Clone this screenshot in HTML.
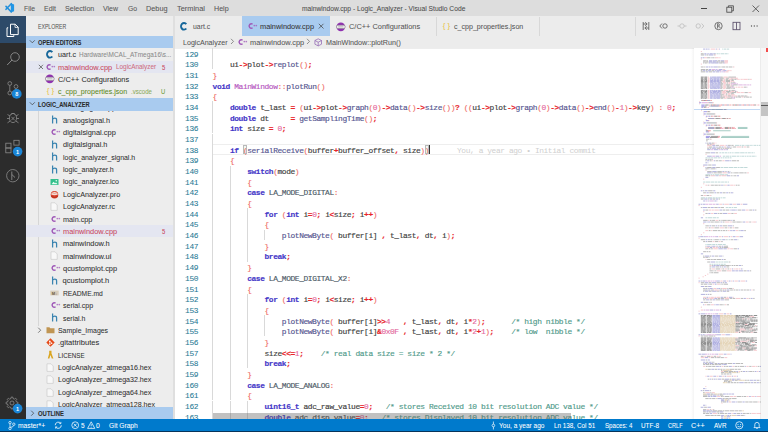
<!DOCTYPE html>
<html><head><meta charset="utf-8"><title>VS Code</title><style>
html,body{margin:0;padding:0;width:768px;height:432px;overflow:hidden;background:#fff}
body{position:relative;font-family:"Liberation Sans",sans-serif}
.t{position:absolute;white-space:pre;line-height:1;transform-origin:0 50%;-webkit-text-stroke-width:0.05px}
.r{position:absolute}
svg.r{overflow:visible}
.ln{position:absolute;left:174.5px;width:23.6px;text-align:right;font-family:"Liberation Mono",monospace;font-size:7.9px;letter-spacing:-0.4082px;line-height:10.68px;height:10.68px;color:#237893;white-space:pre;padding-top:1.5px;-webkit-text-stroke-width:0.04px}
.cl{position:absolute;left:212.6px;font-family:"Liberation Mono",monospace;font-size:7.9px;letter-spacing:-0.4082px;line-height:10.68px;height:10.68px;white-space:pre;color:#3d3d3d;padding-top:1.5px;-webkit-text-stroke-width:0.15px}
</style></head><body>
<div class="r" style="left:0.00px;top:0.00px;width:768.00px;height:16.00px;background:#dddddd;"></div>
<div class="r" style="left:0.00px;top:16.00px;width:26.00px;height:403.30px;background:#2c2c2c;"></div>
<div class="r" style="left:0.00px;top:16.00px;width:26.00px;height:27.20px;background:#2d4a69;"></div>
<div class="r" style="left:26.00px;top:16.00px;width:148.50px;height:403.30px;background:#ededed;"></div>
<div class="r" style="left:174.50px;top:16.00px;width:593.50px;height:20.00px;background:#ececec;"></div>
<div class="r" style="left:174.50px;top:36.00px;width:593.50px;height:12.00px;background:#ececec;"></div>
<div class="r" style="left:174.50px;top:48.00px;width:593.50px;height:371.30px;background:#ffffff;"></div>
<svg class="r" style="left:0.00px;top:0.00px" width="20.00" height="16.00" viewBox="0 0 20 16"><path d="M10.8 3.2 L14.1 4.6 V11.2 L10.8 12.5 Z" fill="#2196e6"/><path d="M11.3 3.7 L6.0 9.3 M11.3 12 L6.0 6.4" stroke="#2490dc" stroke-width="1.6" stroke-linecap="round"/></svg>
<div class="t" style="left:23.60px;top:5.05px;font-size:7.50px;color:#555555;transform:scaleX(0.910);">File</div>
<div class="t" style="left:43.80px;top:5.05px;font-size:7.50px;color:#555555;transform:scaleX(0.929);">Edit</div>
<div class="t" style="left:64.90px;top:5.05px;font-size:7.50px;color:#555555;transform:scaleX(0.950);">Selection</div>
<div class="t" style="left:103.30px;top:5.05px;font-size:7.50px;color:#555555;transform:scaleX(0.929);">View</div>
<div class="t" style="left:127.80px;top:5.05px;font-size:7.50px;color:#555555;transform:scaleX(0.910);">Go</div>
<div class="t" style="left:146.00px;top:5.05px;font-size:7.50px;color:#555555;transform:scaleX(0.973);">Debug</div>
<div class="t" style="left:176.60px;top:5.05px;font-size:7.50px;color:#555555;transform:scaleX(0.988);">Terminal</div>
<div class="t" style="left:213.75px;top:5.05px;font-size:7.50px;color:#555555;transform:scaleX(0.950);">Help</div>
<div class="t" style="left:302.30px;top:5.22px;font-size:7.30px;color:#4a4a4a;transform:scaleX(0.916);">mainwindow.cpp - Logic_Analyzer - Visual Studio Code</div>
<div class="r" style="left:700.50px;top:8.00px;width:6.50px;height:0.60px;background:#444;"></div>
<svg class="r" style="left:726.00px;top:4.50px" width="8.50" height="8.00" viewBox="0 0 8.5 8"><rect x="0.8" y="2.2" width="5" height="5" fill="none" stroke="#444" stroke-width="0.8"/><path d="M2.4 2.2 V0.8 H7.4 V5.8 H5.8" fill="none" stroke="#444" stroke-width="0.8"/></svg>
<svg class="r" style="left:752.00px;top:4.50px" width="7.50" height="7.50" viewBox="0 0 7.5 7.5"><path d="M0.5 0.5 L7 7 M7 0.5 L0.5 7" stroke="#444" stroke-width="0.8"/></svg>
<svg class="r" style="left:5.00px;top:21.50px" width="16.00" height="16.00" viewBox="0 0 16 16"><path d="M3.2 5.8 H2 V14.5 H8.8 V13.2" fill="none" stroke="#fff" stroke-width="1"/><path d="M5.5 2.2 H10.2 L13.2 5.2 V12.6 H5.5 Z" fill="none" stroke="#fff" stroke-width="1"/><path d="M10 2.2 V5.4 H13.2" fill="none" stroke="#fff" stroke-width="0.8"/></svg>
<svg class="r" style="left:5.00px;top:50.00px" width="16.00" height="16.00" viewBox="0 0 16 16"><circle cx="10" cy="7" r="4.3" fill="none" stroke="#8b8b8b" stroke-width="0.9"/><path d="M7 10 L2.2 15" stroke="#8b8b8b" stroke-width="1"/></svg>
<svg class="r" style="left:5.00px;top:79.00px" width="18.00" height="18.00" viewBox="0 0 18 18"><circle cx="4.8" cy="4.5" r="1.9" fill="none" stroke="#8b8b8b" stroke-width="0.8"/><circle cx="11" cy="7.5" r="1.9" fill="none" stroke="#8b8b8b" stroke-width="0.8"/><circle cx="4.8" cy="14" r="1.9" fill="none" stroke="#8b8b8b" stroke-width="0.8"/><path d="M4.8 6.4 V12.1 M11 9.4 Q11 12 6.6 13.2" fill="none" stroke="#8b8b8b" stroke-width="0.8"/></svg>
<svg class="r" style="left:12.00px;top:88.50px" width="10.00" height="10.00" viewBox="0 0 10 10"><circle cx="4.7" cy="4.9" r="4.9" fill="#1a85d6"/><text x="4.7" y="7" font-size="5.5" text-anchor="middle" fill="#fff" font-family="Liberation Sans" font-weight="700">8</text></svg>
<svg class="r" style="left:5.00px;top:109.00px" width="16.00" height="16.00" viewBox="0 0 16 16"><ellipse cx="8" cy="9" rx="3.6" ry="4.6" fill="none" stroke="#8b8b8b" stroke-width="0.8"/><path d="M5.8 5.5 Q8 3 10.2 5.5 M2.5 5.5 L5 7 M13.5 5.5 L11 7 M2 9.5 H4.4 M11.6 9.5 H14 M2.5 13.8 L5 12.2 M13.5 13.8 L11 12.2 M6.4 7.8 L9.6 11.2 M9.6 7.8 L6.4 11.2" fill="none" stroke="#8b8b8b" stroke-width="0.8"/></svg>
<svg class="r" style="left:4.00px;top:138.00px" width="18.00" height="18.00" viewBox="0 0 18 18"><rect x="1.8" y="5.2" width="5.2" height="4.8" fill="none" stroke="#8b8b8b" stroke-width="0.8"/><rect x="1.8" y="10" width="5.2" height="4.8" fill="none" stroke="#8b8b8b" stroke-width="0.8"/><rect x="9.9" y="2.3" width="5.2" height="4.8" fill="none" stroke="#8b8b8b" stroke-width="0.8"/></svg>
<svg class="r" style="left:12.50px;top:147.20px" width="10.00" height="10.00" viewBox="0 0 10 10"><circle cx="4.6" cy="4.6" r="4.8" fill="#1a85d6"/><text x="4.6" y="6.6" font-size="5.5" text-anchor="middle" fill="#fff" font-family="Liberation Sans" font-weight="700">1</text></svg>
<svg class="r" style="left:5.00px;top:168.00px" width="16.00" height="16.00" viewBox="0 0 16 16"><circle cx="7.8" cy="7.7" r="6.2" fill="none" stroke="#8b8b8b" stroke-width="0.8"/><path d="M6.8 3.5 V12 M6.8 6.5 L10 9.5" fill="none" stroke="#8b8b8b" stroke-width="0.9"/></svg>
<svg class="r" style="left:4.00px;top:395.00px" width="16.00" height="16.00" viewBox="0 0 16 16"><path d="M12.49 7.00 L13.95 7.22 L13.95 8.78 L12.49 9.00 L11.88 10.46 L12.76 11.66 L11.66 12.76 L10.46 11.88 L9.00 12.49 L8.78 13.95 L7.22 13.95 L7.00 12.49 L5.54 11.88 L4.34 12.76 L3.24 11.66 L4.12 10.46 L3.51 9.00 L2.05 8.78 L2.05 7.22 L3.51 7.00 L4.12 5.54 L3.24 4.34 L4.34 3.24 L5.54 4.12 L7.00 3.51 L7.22 2.05 L8.78 2.05 L9.00 3.51 L10.46 4.12 L11.66 3.24 L12.76 4.34 L11.88 5.54 Z" fill="none" stroke="#8b8b8b" stroke-width="0.8"/><circle cx="8" cy="8" r="2" fill="none" stroke="#8b8b8b" stroke-width="0.8"/></svg>
<svg class="r" style="left:12.50px;top:404.00px" width="10.00" height="10.00" viewBox="0 0 10 10"><circle cx="4.6" cy="4.6" r="4.8" fill="#1a85d6"/><text x="4.6" y="6.6" font-size="5.5" text-anchor="middle" fill="#fff" font-family="Liberation Sans" font-weight="700">1</text></svg>
<div class="t" style="left:37.60px;top:23.90px;font-size:6.50px;color:#555555;transform:scaleX(0.797);">EXPLORER</div>
<div class="r" style="left:26.00px;top:36.00px;width:148.50px;height:12.20px;background:#a9cbef;"></div>
<svg class="r" style="left:29.00px;top:39.20px" width="7.00" height="6.00" viewBox="0 0 7 6"><path d="M0.8 1.3 L3.3 3.8 L5.8 1.3" fill="none" stroke="#444" stroke-width="0.75"/></svg>
<div class="t" style="left:37.70px;top:39.98px;font-size:6.40px;color:#2a2a2a;font-weight:700;transform:scaleX(0.897);">OPEN EDITORS</div>
<div class="r" style="left:26.00px;top:98.20px;width:148.50px;height:12.20px;background:#a9cbef;"></div>
<svg class="r" style="left:29.00px;top:101.40px" width="7.00" height="6.00" viewBox="0 0 7 6"><path d="M0.8 1.3 L3.3 3.8 L5.8 1.3" fill="none" stroke="#444" stroke-width="0.75"/></svg>
<div class="t" style="left:37.70px;top:102.18px;font-size:6.40px;color:#2a2a2a;font-weight:700;transform:scaleX(0.892);">LOGIC_ANALYZER</div>
<div class="r" style="left:26.00px;top:60.67px;width:148.50px;height:12.37px;background:#e4e6f1;"></div>
<svg class="r" style="left:46.20px;top:50.28px" width="9.00" height="9.00" viewBox="0 0 9 9"><path d="M6.3 2.2 A3 3.3 0 1 0 6.3 6.5" fill="none" stroke="#17679a" stroke-width="1.9"/></svg>
<div class="t" style="left:57.80px;top:51.23px;font-size:7.50px;color:#303030;transform:scaleX(0.960);">uart.c</div>
<div class="t" style="left:79.10px;top:52.00px;font-size:6.60px;color:#8a8a8a;transform:scaleX(0.974);">Hardware\MCAL_ATmega16\s...</div>
<svg class="r" style="left:45.90px;top:62.85px" width="10.00" height="8.00" viewBox="0 0 10 8"><path d="M4.6 2.1 A2.3 2.2 0 1 0 4.6 5.9" fill="none" stroke="#a05ab8" stroke-width="1.45"/><path d="M5.5 3.6 H7.1 M6.3 2.8 V4.4 M7.5 3.6 H9.1 M8.3 2.8 V4.4" stroke="#a05ab8" stroke-width="0.6"/></svg>
<div class="t" style="left:57.80px;top:63.60px;font-size:7.50px;color:#c9465e;transform:scaleX(0.985);">mainwindow.cpp</div>
<div class="t" style="left:115.80px;top:64.37px;font-size:6.60px;color:#cf6d80;transform:scaleX(0.967);">LogicAnalyzer</div>
<div class="t" style="left:161.70px;top:63.60px;font-size:7.50px;color:#c9465e;transform:scaleX(0.791);">5</div>
<svg class="r" style="left:38.30px;top:63.85px" width="6.00" height="6.00" viewBox="0 0 6 6"><path d="M0.8 0.8 L5 5 M5 0.8 L0.8 5" stroke="#444" stroke-width="0.7"/></svg>
<svg class="r" style="left:45.40px;top:74.42px" width="10.00" height="10.00" viewBox="0 0 10 10"><circle cx="4.8" cy="4.8" r="4.4" fill="#9032b0"/><rect x="0.5" y="3.2" width="8.6" height="3.2" rx="1.2" fill="#f0f0f0" stroke="#777" stroke-width="0.5"/><rect x="2.2" y="4.3" width="5.2" height="1" fill="#bdbdbd"/></svg>
<div class="t" style="left:57.80px;top:75.97px;font-size:7.50px;color:#303030;transform:scaleX(0.986);">C/C++ Configurations</div>
<svg class="r" style="left:45.80px;top:86.09px" width="9.00" height="9.00" viewBox="0 0 9 9"><text x="4.5" y="7" font-size="8" text-anchor="middle" fill="#e8c34a" font-family="Liberation Sans">{ }</text></svg>
<div class="t" style="left:57.80px;top:88.34px;font-size:7.50px;color:#5b8a1d;transform:scaleX(0.943);">c_cpp_properties.json</div>
<div class="t" style="left:131.00px;top:89.11px;font-size:6.60px;color:#8bab5c;transform:scaleX(0.923);">.vscode</div>
<div class="t" style="left:160.80px;top:88.34px;font-size:7.50px;color:#6a9a33;transform:scaleX(0.776);">U</div>
<div class="r" style="left:37.60px;top:110.40px;width:0.80px;height:215.60px;background:#d6d6d6;"></div>
<div class="t" style="left:62.60px;top:103.56px;font-size:7.50px;color:#303030;transform:scaleX(0.938);">analogsignal.cpp</div>
<div class="r" style="left:26.00px;top:98.30px;width:148.50px;height:12.40px;background:#a9cbef;"></div>
<svg class="r" style="left:29.00px;top:101.40px" width="7.00" height="6.00" viewBox="0 0 7 6"><path d="M0.8 1.3 L3.3 3.8 L5.8 1.3" fill="none" stroke="#444" stroke-width="0.75"/></svg>
<div class="t" style="left:37.70px;top:102.18px;font-size:6.40px;color:#2a2a2a;font-weight:700;transform:scaleX(0.892);">LOGIC_ANALYZER</div>
<div class="r" style="left:26.00px;top:225.03px;width:148.50px;height:12.37px;background:#e4e6f1;"></div>
<svg class="r" style="left:51.00px;top:115.29px" width="8.00" height="9.00" viewBox="0 0 8 9"><path d="M1.6 0.5 V8.5 M1.6 4.3 Q2.3 3 3.8 3 Q5.6 3 5.6 5 V8.5" fill="none" stroke="#3a84b0" stroke-width="1.25"/></svg>
<div class="t" style="left:62.60px;top:116.63px;font-size:7.50px;color:#303030;transform:scaleX(0.970);">analogsignal.h</div>
<svg class="r" style="left:50.60px;top:128.25px" width="10.00" height="8.00" viewBox="0 0 10 8"><path d="M4.6 2.1 A2.3 2.2 0 1 0 4.6 5.9" fill="none" stroke="#a05ab8" stroke-width="1.45"/><path d="M5.5 3.6 H7.1 M6.3 2.8 V4.4 M7.5 3.6 H9.1 M8.3 2.8 V4.4" stroke="#a05ab8" stroke-width="0.6"/></svg>
<div class="t" style="left:62.60px;top:129.00px;font-size:7.50px;color:#303030;transform:scaleX(0.989);">digitalsignal.cpp</div>
<svg class="r" style="left:51.00px;top:140.03px" width="8.00" height="9.00" viewBox="0 0 8 9"><path d="M1.6 0.5 V8.5 M1.6 4.3 Q2.3 3 3.8 3 Q5.6 3 5.6 5 V8.5" fill="none" stroke="#3a84b0" stroke-width="1.25"/></svg>
<div class="t" style="left:62.60px;top:141.37px;font-size:7.50px;color:#303030;transform:scaleX(0.977);">digitalsignal.h</div>
<svg class="r" style="left:51.00px;top:152.40px" width="8.00" height="9.00" viewBox="0 0 8 9"><path d="M1.6 0.5 V8.5 M1.6 4.3 Q2.3 3 3.8 3 Q5.6 3 5.6 5 V8.5" fill="none" stroke="#3a84b0" stroke-width="1.25"/></svg>
<div class="t" style="left:62.60px;top:153.74px;font-size:7.50px;color:#303030;transform:scaleX(0.926);">logic_analyzer_signal.h</div>
<svg class="r" style="left:51.00px;top:164.77px" width="8.00" height="9.00" viewBox="0 0 8 9"><path d="M1.6 0.5 V8.5 M1.6 4.3 Q2.3 3 3.8 3 Q5.6 3 5.6 5 V8.5" fill="none" stroke="#3a84b0" stroke-width="1.25"/></svg>
<div class="t" style="left:62.60px;top:166.11px;font-size:7.50px;color:#303030;transform:scaleX(0.943);">logic_analyzer.h</div>
<svg class="r" style="left:50.00px;top:177.74px" width="9.00" height="8.00" viewBox="0 0 9 8"><rect x="0.5" y="1" width="8" height="6" fill="#34bf8c"/><path d="M1.5 6.2 L3.6 3.8 L5 5.2 L6 4.4 L7.6 6.2 Z" fill="#e9fff3"/><circle cx="6.3" cy="2.8" r="0.8" fill="#e9fff3"/></svg>
<div class="t" style="left:62.60px;top:178.48px;font-size:7.50px;color:#303030;transform:scaleX(0.946);">logic_analyzer.ico</div>
<svg class="r" style="left:50.00px;top:189.61px" width="9.00" height="9.00" viewBox="0 0 9 9"><circle cx="4.5" cy="4.7" r="3.8" fill="#d8402a"/><path d="M0.9 4.3 A3.8 3.8 0 0 1 8.1 4.3 Q4.5 6.2 0.9 4.3 Z" fill="#f4ddd6"/><path d="M1.5 2.6 Q4.5 4.2 7.5 2.6" fill="none" stroke="#e06a50" stroke-width="0.6"/><path d="M1.2 6.3 Q4.5 8.6 7.8 6.3" fill="none" stroke="#a82818" stroke-width="0.7"/></svg>
<div class="t" style="left:62.60px;top:190.85px;font-size:7.50px;color:#303030;transform:scaleX(0.959);">LogicAnalyzer.pro</div>
<svg class="r" style="left:50.00px;top:201.97px" width="8.00" height="9.00" viewBox="0 0 8 9"><path d="M1 0.8 H5 L7.2 3 V8.4 H1 Z" fill="#f8f8f8" stroke="#c4c4c4" stroke-width="0.6"/></svg>
<div class="t" style="left:62.60px;top:203.22px;font-size:7.50px;color:#303030;transform:scaleX(0.947);">LogicAnalyzer.rc</div>
<svg class="r" style="left:50.60px;top:214.84px" width="10.00" height="8.00" viewBox="0 0 10 8"><path d="M4.6 2.1 A2.3 2.2 0 1 0 4.6 5.9" fill="none" stroke="#a05ab8" stroke-width="1.45"/><path d="M5.5 3.6 H7.1 M6.3 2.8 V4.4 M7.5 3.6 H9.1 M8.3 2.8 V4.4" stroke="#a05ab8" stroke-width="0.6"/></svg>
<div class="t" style="left:62.60px;top:215.59px;font-size:7.50px;color:#303030;transform:scaleX(0.966);">main.cpp</div>
<svg class="r" style="left:50.60px;top:227.22px" width="10.00" height="8.00" viewBox="0 0 10 8"><path d="M4.6 2.1 A2.3 2.2 0 1 0 4.6 5.9" fill="none" stroke="#a05ab8" stroke-width="1.45"/><path d="M5.5 3.6 H7.1 M6.3 2.8 V4.4 M7.5 3.6 H9.1 M8.3 2.8 V4.4" stroke="#a05ab8" stroke-width="0.6"/></svg>
<div class="t" style="left:62.60px;top:227.96px;font-size:7.50px;color:#c9465e;transform:scaleX(0.983);">mainwindow.cpp</div>
<div class="t" style="left:161.50px;top:227.96px;font-size:7.50px;color:#c9465e;transform:scaleX(0.791);">5</div>
<svg class="r" style="left:51.00px;top:238.98px" width="8.00" height="9.00" viewBox="0 0 8 9"><path d="M1.6 0.5 V8.5 M1.6 4.3 Q2.3 3 3.8 3 Q5.6 3 5.6 5 V8.5" fill="none" stroke="#3a84b0" stroke-width="1.25"/></svg>
<div class="t" style="left:62.60px;top:240.33px;font-size:7.50px;color:#303030;transform:scaleX(0.991);">mainwindow.h</div>
<svg class="r" style="left:50.00px;top:251.45px" width="8.00" height="9.00" viewBox="0 0 8 9"><path d="M1 0.8 H5 L7.2 3 V8.4 H1 Z" fill="#f8f8f8" stroke="#c4c4c4" stroke-width="0.6"/></svg>
<div class="t" style="left:62.60px;top:252.70px;font-size:7.50px;color:#303030;transform:scaleX(0.992);">mainwindow.ui</div>
<svg class="r" style="left:50.60px;top:264.32px" width="10.00" height="8.00" viewBox="0 0 10 8"><path d="M4.6 2.1 A2.3 2.2 0 1 0 4.6 5.9" fill="none" stroke="#a05ab8" stroke-width="1.45"/><path d="M5.5 3.6 H7.1 M6.3 2.8 V4.4 M7.5 3.6 H9.1 M8.3 2.8 V4.4" stroke="#a05ab8" stroke-width="0.6"/></svg>
<div class="t" style="left:62.60px;top:265.07px;font-size:7.50px;color:#303030;transform:scaleX(0.991);">qcustomplot.cpp</div>
<svg class="r" style="left:51.00px;top:276.09px" width="8.00" height="9.00" viewBox="0 0 8 9"><path d="M1.6 0.5 V8.5 M1.6 4.3 Q2.3 3 3.8 3 Q5.6 3 5.6 5 V8.5" fill="none" stroke="#3a84b0" stroke-width="1.25"/></svg>
<div class="t" style="left:62.60px;top:277.44px;font-size:7.50px;color:#303030;">qcustomplot.h</div>
<svg class="r" style="left:50.00px;top:290.06px" width="9.00" height="6.00" viewBox="0 0 9 6"><rect x="0.3" y="0.6" width="8.4" height="4.8" fill="#d8cdbb"/><text x="4.5" y="4.6" font-size="4" text-anchor="middle" fill="#6b5b3b" font-family="Liberation Sans" font-weight="700">M↓</text></svg>
<div class="t" style="left:62.60px;top:289.81px;font-size:7.50px;color:#303030;transform:scaleX(0.893);">README.md</div>
<svg class="r" style="left:50.60px;top:301.44px" width="10.00" height="8.00" viewBox="0 0 10 8"><path d="M4.6 2.1 A2.3 2.2 0 1 0 4.6 5.9" fill="none" stroke="#a05ab8" stroke-width="1.45"/><path d="M5.5 3.6 H7.1 M6.3 2.8 V4.4 M7.5 3.6 H9.1 M8.3 2.8 V4.4" stroke="#a05ab8" stroke-width="0.6"/></svg>
<div class="t" style="left:62.60px;top:302.18px;font-size:7.50px;color:#303030;transform:scaleX(0.938);">serial.cpp</div>
<svg class="r" style="left:51.00px;top:313.20px" width="8.00" height="9.00" viewBox="0 0 8 9"><path d="M1.6 0.5 V8.5 M1.6 4.3 Q2.3 3 3.8 3 Q5.6 3 5.6 5 V8.5" fill="none" stroke="#3a84b0" stroke-width="1.25"/></svg>
<div class="t" style="left:62.60px;top:314.55px;font-size:7.50px;color:#303030;transform:scaleX(0.926);">serial.h</div>
<svg class="r" style="left:36.50px;top:326.68px" width="6.00" height="7.00" viewBox="0 0 6 7"><path d="M1.2 0.7 L3.7 3.2 L1.2 5.7" fill="none" stroke="#555" stroke-width="0.75"/></svg>
<svg class="r" style="left:45.80px;top:326.18px" width="9.00" height="8.00" viewBox="0 0 9 8"><path d="M0.5 1.3 H3.4 L4.3 2.3 H8.5 V7.2 H0.5 Z" fill="#c09553"/></svg>
<div class="t" style="left:57.90px;top:326.92px;font-size:7.50px;color:#303030;transform:scaleX(0.924);">Sample_Images</div>
<svg class="r" style="left:45.80px;top:338.05px" width="9.00" height="9.00" viewBox="0 0 9 9"><path d="M4.5 0.3 L8.7 4.5 L4.5 8.7 L0.3 4.5 Z" fill="#e64a19"/><circle cx="3.8" cy="3.4" r="0.8" fill="#fff"/><circle cx="5.6" cy="5.2" r="0.8" fill="#fff"/><circle cx="3.8" cy="6.2" r="0.8" fill="#fff"/><path d="M3.8 3.4 V6.2 M3.8 3.4 L5.6 5.2" stroke="#fff" stroke-width="0.6"/></svg>
<div class="t" style="left:57.90px;top:339.29px;font-size:7.50px;color:#303030;transform:scaleX(1.009);">.gitattributes</div>
<svg class="r" style="left:45.80px;top:350.41px" width="9.00" height="9.00" viewBox="0 0 9 9"><path d="M3.2 0.8 H5.5 V3.4 L7.4 8.4 H5.8 L4.4 5 L3.4 8.4 H1.8 L3.2 3.4 Z" fill="#d9a520"/></svg>
<div class="t" style="left:57.90px;top:351.66px;font-size:7.50px;color:#303030;transform:scaleX(0.829);">LICENSE</div>
<svg class="r" style="left:45.80px;top:362.78px" width="8.00" height="9.00" viewBox="0 0 8 9"><path d="M1 0.8 H5 L7.2 3 V8.4 H1 Z" fill="#f8f8f8" stroke="#c4c4c4" stroke-width="0.6"/></svg>
<div class="t" style="left:57.90px;top:364.03px;font-size:7.50px;color:#303030;transform:scaleX(0.944);">LogicAnalyzer_atmega16.hex</div>
<svg class="r" style="left:45.80px;top:375.15px" width="8.00" height="9.00" viewBox="0 0 8 9"><path d="M1 0.8 H5 L7.2 3 V8.4 H1 Z" fill="#f8f8f8" stroke="#c4c4c4" stroke-width="0.6"/></svg>
<div class="t" style="left:57.90px;top:376.40px;font-size:7.50px;color:#303030;transform:scaleX(0.944);">LogicAnalyzer_atmega32.hex</div>
<svg class="r" style="left:45.80px;top:387.52px" width="8.00" height="9.00" viewBox="0 0 8 9"><path d="M1 0.8 H5 L7.2 3 V8.4 H1 Z" fill="#f8f8f8" stroke="#c4c4c4" stroke-width="0.6"/></svg>
<div class="t" style="left:57.90px;top:388.77px;font-size:7.50px;color:#303030;transform:scaleX(0.944);">LogicAnalyzer_atmega64.hex</div>
<svg class="r" style="left:45.80px;top:399.89px" width="8.00" height="9.00" viewBox="0 0 8 9"><path d="M1 0.8 H5 L7.2 3 V8.4 H1 Z" fill="#f8f8f8" stroke="#c4c4c4" stroke-width="0.6"/></svg>
<div class="t" style="left:57.90px;top:401.14px;font-size:7.50px;color:#303030;transform:scaleX(0.942);">LogicAnalyzer_atmega128.hex</div>
<div class="r" style="left:26.00px;top:407.30px;width:148.50px;height:12.00px;background:#a9cbef;"></div>
<svg class="r" style="left:29.50px;top:409.90px" width="6.00" height="7.00" viewBox="0 0 6 7"><path d="M1.2 0.7 L3.7 3.2 L1.2 5.7" fill="none" stroke="#444" stroke-width="0.75"/></svg>
<div class="t" style="left:37.50px;top:411.28px;font-size:6.40px;color:#2a2a2a;font-weight:700;transform:scaleX(0.926);">OUTLINE</div>
<div class="r" style="left:172.90px;top:16.00px;width:2.10px;height:403.30px;background:#dfdfdf;"></div>
<div class="r" style="left:241.50px;top:16.00px;width:88.70px;height:19.80px;background:#a9cbef;"></div>
<svg class="r" style="left:180.00px;top:22.10px" width="9.00" height="9.00" viewBox="0 0 9 9"><path d="M6.3 2.2 A3 3.3 0 1 0 6.3 6.5" fill="none" stroke="#17679a" stroke-width="1.9"/></svg>
<div class="t" style="left:192.60px;top:23.05px;font-size:7.50px;color:#555555;transform:scaleX(0.917);">uart.c</div>
<svg class="r" style="left:247.80px;top:22.30px" width="10.00" height="8.00" viewBox="0 0 10 8"><path d="M4.6 2.1 A2.3 2.2 0 1 0 4.6 5.9" fill="none" stroke="#a05ab8" stroke-width="1.45"/><path d="M5.5 3.6 H7.1 M6.3 2.8 V4.4 M7.5 3.6 H9.1 M8.3 2.8 V4.4" stroke="#a05ab8" stroke-width="0.6"/></svg>
<div class="t" style="left:260.00px;top:23.05px;font-size:7.50px;color:#333333;transform:scaleX(0.981);">mainwindow.cpp</div>
<svg class="r" style="left:318.00px;top:23.00px" width="6.50" height="6.50" viewBox="0 0 6.5 6.5"><path d="M0.8 0.8 L5.5 5.5 M5.5 0.8 L0.8 5.5" stroke="#444" stroke-width="0.75"/></svg>
<svg class="r" style="left:335.80px;top:21.50px" width="10.00" height="10.00" viewBox="0 0 10 10"><circle cx="4.8" cy="4.8" r="4.4" fill="#9032b0"/><rect x="0.5" y="3.2" width="8.6" height="3.2" rx="1.2" fill="#f0f0f0" stroke="#777" stroke-width="0.5"/><rect x="2.2" y="4.3" width="5.2" height="1" fill="#bdbdbd"/></svg>
<div class="t" style="left:348.60px;top:23.05px;font-size:7.50px;color:#555555;transform:scaleX(0.987);">C/C++ Configurations</div>
<div class="r" style="left:435.60px;top:17.00px;width:0.70px;height:18.80px;background:#d8d8d8;"></div>
<svg class="r" style="left:441.60px;top:20.80px" width="9.00" height="9.00" viewBox="0 0 9 9"><text x="4.5" y="7" font-size="8" text-anchor="middle" fill="#e8c34a" font-family="Liberation Sans">{ }</text></svg>
<div class="t" style="left:454.00px;top:23.05px;font-size:7.50px;color:#555555;transform:scaleX(0.944);">c_cpp_properties.json</div>
<div class="r" style="left:539.00px;top:17.00px;width:0.70px;height:18.80px;background:#d8d8d8;"></div>
<div class="r" style="left:635.10px;top:17.00px;width:0.70px;height:18.80px;background:#d8d8d8;"></div>
<svg class="r" style="left:641.00px;top:20.70px" width="10.00" height="10.00" viewBox="0 0 10 10"><path d="M2.2 1 V9 M7.8 1 V9 M2.2 3 H6 M4.2 1.2 L6.2 3 L4.2 4.8 M7.8 7 H4 M5.8 5.2 L3.8 7 L5.8 8.8" fill="none" stroke="#555555" stroke-width="0.8"/></svg>
<svg class="r" style="left:659.00px;top:20.70px" width="10.00" height="10.00" viewBox="0 0 10 10"><circle cx="6" cy="5" r="2.2" fill="none" stroke="#555555" stroke-width="0.8"/><path d="M3 2.5 L0.8 5 L3 7.5" fill="none" stroke="#555555" stroke-width="0.8"/></svg>
<svg class="r" style="left:677.30px;top:20.70px" width="10.00" height="10.00" viewBox="0 0 10 10"><circle cx="5" cy="5" r="2.2" fill="none" stroke="#bdbdbd" stroke-width="0.8"/><path d="M0.5 5 H2.8 M7.2 5 H9.5" stroke="#bdbdbd" stroke-width="0.8"/></svg>
<svg class="r" style="left:694.50px;top:20.70px" width="10.00" height="10.00" viewBox="0 0 10 10"><circle cx="3.2" cy="5" r="2.2" fill="none" stroke="#bdbdbd" stroke-width="0.8"/><path d="M6.6 2.5 L8.8 5 L6.6 7.5" fill="none" stroke="#bdbdbd" stroke-width="0.8"/></svg>
<svg class="r" style="left:713.50px;top:20.70px" width="10.00" height="10.00" viewBox="0 0 10 10"><circle cx="4.5" cy="5" r="3.7" fill="none" stroke="#555555" stroke-width="0.8"/><path d="M3.6 2.6 V7.4 M3.6 2.8 H4.8 Q6.2 3.6 4.8 5 H3.6 M4.6 5 L6.4 7" fill="none" stroke="#555555" stroke-width="0.8"/></svg>
<svg class="r" style="left:731.80px;top:20.70px" width="10.00" height="10.00" viewBox="0 0 10 10"><rect x="1" y="1.3" width="7" height="7.4" fill="none" stroke="#5a4f6a" stroke-width="0.85"/><path d="M4.5 1.3 V8.7" stroke="#5a4f6a" stroke-width="0.85"/></svg>
<svg class="r" style="left:749.50px;top:20.70px" width="10.00" height="10.00" viewBox="0 0 10 10"><circle cx="1.5" cy="5" r="0.65" fill="#555555"/><circle cx="4.3" cy="5" r="0.65" fill="#555555"/><circle cx="7.1" cy="5" r="0.65" fill="#555555"/></svg>
<div class="t" style="left:183.30px;top:38.95px;font-size:7.50px;color:#555555;transform:scaleX(0.945);">LogicAnalyzer</div>
<svg class="r" style="left:229.80px;top:37.70px" width="5.00" height="7.00" viewBox="0 0 5 7"><path d="M1 0.8 L3.5 3.4 L1 6" fill="none" stroke="#666" stroke-width="0.7"/></svg>
<svg class="r" style="left:238.10px;top:37.60px" width="10.00" height="8.00" viewBox="0 0 10 8"><path d="M4.6 2.1 A2.3 2.2 0 1 0 4.6 5.9" fill="none" stroke="#a05ab8" stroke-width="1.45"/><path d="M5.5 3.6 H7.1 M6.3 2.8 V4.4 M7.5 3.6 H9.1 M8.3 2.8 V4.4" stroke="#a05ab8" stroke-width="0.6"/></svg>
<div class="t" style="left:249.50px;top:38.95px;font-size:7.50px;color:#555555;transform:scaleX(0.983);">mainwindow.cpp</div>
<svg class="r" style="left:306.00px;top:37.70px" width="5.00" height="7.00" viewBox="0 0 5 7"><path d="M1 0.8 L3.5 3.4 L1 6" fill="none" stroke="#666" stroke-width="0.7"/></svg>
<svg class="r" style="left:313.50px;top:37.50px" width="8.50" height="8.50" viewBox="0 0 8.5 8.5"><path d="M4.2 0.8 L7.5 2.5 V6.2 L4.2 7.9 L0.9 6.2 V2.5 Z M0.9 2.5 L4.2 4.2 L7.5 2.5 M4.2 4.2 V7.9" fill="none" stroke="#8c5fb0" stroke-width="0.7"/></svg>
<div class="t" style="left:325.90px;top:38.95px;font-size:7.50px;color:#555555;transform:scaleX(0.960);">MainWindow::plotRun()</div>
<div class="r" style="left:174.50px;top:47.60px;width:519.20px;height:0.80px;background:rgba(0,0,0,0.07);"></div>
<div class="ln" style="top:48.06px">129</div>
<div class="ln" style="top:58.74px">130</div>
<div class="ln" style="top:69.42px">131</div>
<div class="ln" style="top:80.10px">132</div>
<div class="ln" style="top:90.78px">133</div>
<div class="ln" style="top:101.46px">134</div>
<div class="ln" style="top:112.14px">135</div>
<div class="ln" style="top:122.82px">136</div>
<div class="ln" style="top:133.50px">137</div>
<div class="ln" style="top:144.18px">138</div>
<div class="ln" style="top:154.86px">139</div>
<div class="ln" style="top:165.54px">140</div>
<div class="ln" style="top:176.22px">141</div>
<div class="ln" style="top:186.90px">142</div>
<div class="ln" style="top:197.58px">143</div>
<div class="ln" style="top:208.26px">144</div>
<div class="ln" style="top:218.94px">145</div>
<div class="ln" style="top:229.62px">146</div>
<div class="ln" style="top:240.30px">147</div>
<div class="ln" style="top:250.98px">148</div>
<div class="ln" style="top:261.66px">149</div>
<div class="ln" style="top:272.34px">150</div>
<div class="ln" style="top:283.02px">151</div>
<div class="ln" style="top:293.70px">152</div>
<div class="ln" style="top:304.38px">153</div>
<div class="ln" style="top:315.06px">154</div>
<div class="ln" style="top:325.74px">155</div>
<div class="ln" style="top:336.42px">156</div>
<div class="ln" style="top:347.10px">157</div>
<div class="ln" style="top:357.78px">158</div>
<div class="ln" style="top:368.46px">159</div>
<div class="ln" style="top:379.14px">160</div>
<div class="ln" style="top:389.82px">161</div>
<div class="ln" style="top:400.50px">162</div>
<div class="ln" style="top:411.18px">163</div>
<div class="r" style="left:212.50px;top:144.18px;width:481.20px;height:0.80px;background:#eeeeee;"></div>
<div class="r" style="left:212.50px;top:154.06px;width:481.20px;height:0.80px;background:#eeeeee;"></div>
<div class="r" style="left:212.40px;top:48.06px;width:0.80px;height:10.68px;background:#d9d9d9;"></div>
<div class="r" style="left:212.40px;top:58.74px;width:0.80px;height:10.68px;background:#d9d9d9;"></div>
<div class="r" style="left:212.40px;top:101.46px;width:0.80px;height:10.68px;background:#d9d9d9;"></div>
<div class="r" style="left:212.40px;top:112.14px;width:0.80px;height:10.68px;background:#d9d9d9;"></div>
<div class="r" style="left:212.40px;top:122.82px;width:0.80px;height:10.68px;background:#d9d9d9;"></div>
<div class="r" style="left:212.40px;top:133.50px;width:0.80px;height:10.68px;background:#d9d9d9;"></div>
<div class="r" style="left:212.40px;top:144.18px;width:0.80px;height:10.68px;background:#d9d9d9;"></div>
<div class="r" style="left:212.40px;top:154.86px;width:0.80px;height:10.68px;background:#d9d9d9;"></div>
<div class="r" style="left:212.40px;top:165.54px;width:0.80px;height:10.68px;background:#d9d9d9;"></div>
<div class="r" style="left:229.73px;top:165.54px;width:0.80px;height:10.68px;background:#d9d9d9;"></div>
<div class="r" style="left:212.40px;top:176.22px;width:0.80px;height:10.68px;background:#d9d9d9;"></div>
<div class="r" style="left:229.73px;top:176.22px;width:0.80px;height:10.68px;background:#d9d9d9;"></div>
<div class="r" style="left:212.40px;top:186.90px;width:0.80px;height:10.68px;background:#d9d9d9;"></div>
<div class="r" style="left:229.73px;top:186.90px;width:0.80px;height:10.68px;background:#d9d9d9;"></div>
<div class="r" style="left:212.40px;top:197.58px;width:0.80px;height:10.68px;background:#d9d9d9;"></div>
<div class="r" style="left:229.73px;top:197.58px;width:0.80px;height:10.68px;background:#d9d9d9;"></div>
<div class="r" style="left:212.40px;top:208.26px;width:0.80px;height:10.68px;background:#d9d9d9;"></div>
<div class="r" style="left:229.73px;top:208.26px;width:0.80px;height:10.68px;background:#d9d9d9;"></div>
<div class="r" style="left:247.05px;top:208.26px;width:0.80px;height:10.68px;background:#d9d9d9;"></div>
<div class="r" style="left:212.40px;top:218.94px;width:0.80px;height:10.68px;background:#d9d9d9;"></div>
<div class="r" style="left:229.73px;top:218.94px;width:0.80px;height:10.68px;background:#d9d9d9;"></div>
<div class="r" style="left:247.05px;top:218.94px;width:0.80px;height:10.68px;background:#d9d9d9;"></div>
<div class="r" style="left:212.40px;top:229.62px;width:0.80px;height:10.68px;background:#d9d9d9;"></div>
<div class="r" style="left:229.73px;top:229.62px;width:0.80px;height:10.68px;background:#d9d9d9;"></div>
<div class="r" style="left:247.05px;top:229.62px;width:0.80px;height:10.68px;background:#d9d9d9;"></div>
<div class="r" style="left:264.38px;top:229.62px;width:0.80px;height:10.68px;background:#d9d9d9;"></div>
<div class="r" style="left:212.40px;top:240.30px;width:0.80px;height:10.68px;background:#d9d9d9;"></div>
<div class="r" style="left:229.73px;top:240.30px;width:0.80px;height:10.68px;background:#d9d9d9;"></div>
<div class="r" style="left:247.05px;top:240.30px;width:0.80px;height:10.68px;background:#d9d9d9;"></div>
<div class="r" style="left:212.40px;top:250.98px;width:0.80px;height:10.68px;background:#d9d9d9;"></div>
<div class="r" style="left:229.73px;top:250.98px;width:0.80px;height:10.68px;background:#d9d9d9;"></div>
<div class="r" style="left:247.05px;top:250.98px;width:0.80px;height:10.68px;background:#d9d9d9;"></div>
<div class="r" style="left:212.40px;top:261.66px;width:0.80px;height:10.68px;background:#d9d9d9;"></div>
<div class="r" style="left:229.73px;top:261.66px;width:0.80px;height:10.68px;background:#d9d9d9;"></div>
<div class="r" style="left:212.40px;top:272.34px;width:0.80px;height:10.68px;background:#d9d9d9;"></div>
<div class="r" style="left:229.73px;top:272.34px;width:0.80px;height:10.68px;background:#d9d9d9;"></div>
<div class="r" style="left:212.40px;top:283.02px;width:0.80px;height:10.68px;background:#d9d9d9;"></div>
<div class="r" style="left:229.73px;top:283.02px;width:0.80px;height:10.68px;background:#d9d9d9;"></div>
<div class="r" style="left:212.40px;top:293.70px;width:0.80px;height:10.68px;background:#d9d9d9;"></div>
<div class="r" style="left:229.73px;top:293.70px;width:0.80px;height:10.68px;background:#d9d9d9;"></div>
<div class="r" style="left:247.05px;top:293.70px;width:0.80px;height:10.68px;background:#d9d9d9;"></div>
<div class="r" style="left:212.40px;top:304.38px;width:0.80px;height:10.68px;background:#d9d9d9;"></div>
<div class="r" style="left:229.73px;top:304.38px;width:0.80px;height:10.68px;background:#d9d9d9;"></div>
<div class="r" style="left:247.05px;top:304.38px;width:0.80px;height:10.68px;background:#d9d9d9;"></div>
<div class="r" style="left:212.40px;top:315.06px;width:0.80px;height:10.68px;background:#d9d9d9;"></div>
<div class="r" style="left:229.73px;top:315.06px;width:0.80px;height:10.68px;background:#d9d9d9;"></div>
<div class="r" style="left:247.05px;top:315.06px;width:0.80px;height:10.68px;background:#d9d9d9;"></div>
<div class="r" style="left:264.38px;top:315.06px;width:0.80px;height:10.68px;background:#d9d9d9;"></div>
<div class="r" style="left:212.40px;top:325.74px;width:0.80px;height:10.68px;background:#d9d9d9;"></div>
<div class="r" style="left:229.73px;top:325.74px;width:0.80px;height:10.68px;background:#d9d9d9;"></div>
<div class="r" style="left:247.05px;top:325.74px;width:0.80px;height:10.68px;background:#d9d9d9;"></div>
<div class="r" style="left:264.38px;top:325.74px;width:0.80px;height:10.68px;background:#d9d9d9;"></div>
<div class="r" style="left:212.40px;top:336.42px;width:0.80px;height:10.68px;background:#d9d9d9;"></div>
<div class="r" style="left:229.73px;top:336.42px;width:0.80px;height:10.68px;background:#d9d9d9;"></div>
<div class="r" style="left:247.05px;top:336.42px;width:0.80px;height:10.68px;background:#d9d9d9;"></div>
<div class="r" style="left:212.40px;top:347.10px;width:0.80px;height:10.68px;background:#d9d9d9;"></div>
<div class="r" style="left:229.73px;top:347.10px;width:0.80px;height:10.68px;background:#d9d9d9;"></div>
<div class="r" style="left:247.05px;top:347.10px;width:0.80px;height:10.68px;background:#d9d9d9;"></div>
<div class="r" style="left:212.40px;top:357.78px;width:0.80px;height:10.68px;background:#d9d9d9;"></div>
<div class="r" style="left:229.73px;top:357.78px;width:0.80px;height:10.68px;background:#d9d9d9;"></div>
<div class="r" style="left:247.05px;top:357.78px;width:0.80px;height:10.68px;background:#d9d9d9;"></div>
<div class="r" style="left:212.40px;top:368.46px;width:0.80px;height:10.68px;background:#d9d9d9;"></div>
<div class="r" style="left:229.73px;top:368.46px;width:0.80px;height:10.68px;background:#d9d9d9;"></div>
<div class="r" style="left:212.40px;top:379.14px;width:0.80px;height:10.68px;background:#d9d9d9;"></div>
<div class="r" style="left:229.73px;top:379.14px;width:0.80px;height:10.68px;background:#d9d9d9;"></div>
<div class="r" style="left:212.40px;top:389.82px;width:0.80px;height:10.68px;background:#d9d9d9;"></div>
<div class="r" style="left:229.73px;top:389.82px;width:0.80px;height:10.68px;background:#d9d9d9;"></div>
<div class="r" style="left:212.40px;top:400.50px;width:0.80px;height:10.68px;background:#d9d9d9;"></div>
<div class="r" style="left:229.73px;top:400.50px;width:0.80px;height:10.68px;background:#d9d9d9;"></div>
<div class="r" style="left:247.05px;top:400.50px;width:0.80px;height:10.68px;background:#d9d9d9;"></div>
<div class="r" style="left:212.40px;top:411.18px;width:0.80px;height:10.68px;background:#d9d9d9;"></div>
<div class="r" style="left:229.73px;top:411.18px;width:0.80px;height:10.68px;background:#d9d9d9;"></div>
<div class="r" style="left:247.05px;top:411.18px;width:0.80px;height:10.68px;background:#d9d9d9;"></div>
<div class="cl" style="top:48.06px"></div>
<div class="cl" style="top:58.74px">    <span style="color:#3d3d3d">ui</span><span style="color:#e8252b;font-weight:700">-&gt;</span><span style="color:#3d3d3d">plot</span><span style="color:#e8252b;font-weight:700">-&gt;</span><span style="color:#54548f">replot</span><span style="color:#ef6f6a">(</span><span style="color:#ef6f6a">)</span><span style="color:#e8252b;font-weight:700">;</span></div>
<div class="cl" style="top:69.42px"><span style="color:#ef6f6a">}</span></div>
<div class="cl" style="top:80.10px"><span style="color:#4538c8;font-weight:700">void</span> <span style="color:#b656c0">MainWindow</span><span style="color:#ef6f6a">:</span><span style="color:#ef6f6a">:</span><span style="color:#54548f">plotRun</span><span style="color:#ef6f6a">(</span><span style="color:#ef6f6a">)</span></div>
<div class="cl" style="top:90.78px"><span style="color:#ef6f6a">{</span></div>
<div class="cl" style="top:101.46px">    <span style="color:#4538c8;font-weight:700">double</span> <span style="color:#3d3d3d">t_last</span> <span style="color:#e8252b;font-weight:700">=</span> <span style="color:#ef6f6a">(</span><span style="color:#3d3d3d">ui</span><span style="color:#e8252b;font-weight:700">-&gt;</span><span style="color:#3d3d3d">plot</span><span style="color:#e8252b;font-weight:700">-&gt;</span><span style="color:#54548f">graph</span><span style="color:#ef6f6a">(</span><span style="color:#e46a9e">0</span><span style="color:#ef6f6a">)</span><span style="color:#e8252b;font-weight:700">-&gt;</span><span style="color:#54548f">data</span><span style="color:#ef6f6a">(</span><span style="color:#ef6f6a">)</span><span style="color:#e8252b;font-weight:700">-&gt;</span><span style="color:#54548f">size</span><span style="color:#ef6f6a">(</span><span style="color:#ef6f6a">)</span><span style="color:#ef6f6a">)</span><span style="color:#e8252b;font-weight:700">?</span> <span style="color:#ef6f6a">(</span><span style="color:#ef6f6a">(</span><span style="color:#3d3d3d">ui</span><span style="color:#e8252b;font-weight:700">-&gt;</span><span style="color:#3d3d3d">plot</span><span style="color:#e8252b;font-weight:700">-&gt;</span><span style="color:#54548f">graph</span><span style="color:#ef6f6a">(</span><span style="color:#e46a9e">0</span><span style="color:#ef6f6a">)</span><span style="color:#e8252b;font-weight:700">-&gt;</span><span style="color:#54548f">data</span><span style="color:#ef6f6a">(</span><span style="color:#ef6f6a">)</span><span style="color:#e8252b;font-weight:700">-&gt;</span><span style="color:#54548f">end</span><span style="color:#ef6f6a">(</span><span style="color:#ef6f6a">)</span><span style="color:#e8252b;font-weight:700">-</span><span style="color:#e46a9e">1</span><span style="color:#ef6f6a">)</span><span style="color:#e8252b;font-weight:700">-&gt;</span><span style="color:#3d3d3d">key</span><span style="color:#ef6f6a">)</span> <span style="color:#ef6f6a">:</span> <span style="color:#e46a9e">0</span><span style="color:#e8252b;font-weight:700">;</span></div>
<div class="cl" style="top:112.14px">    <span style="color:#4538c8;font-weight:700">double</span> <span style="color:#3d3d3d">dt</span>     <span style="color:#e8252b;font-weight:700">=</span> <span style="color:#54548f">getSamplingTime</span><span style="color:#ef6f6a">(</span><span style="color:#ef6f6a">)</span><span style="color:#e8252b;font-weight:700">;</span></div>
<div class="cl" style="top:122.82px">    <span style="color:#4538c8;font-weight:700">int</span> <span style="color:#3d3d3d">size</span> <span style="color:#e8252b;font-weight:700">=</span> <span style="color:#e46a9e">0</span><span style="color:#e8252b;font-weight:700">;</span></div>
<div class="cl" style="top:133.50px"></div>
<div class="cl" style="top:144.18px">    <span style="color:#4538c8;font-weight:700">if</span> <span style="color:#ef6f6a">(</span><span style="color:#54548f">serialReceive</span><span style="color:#ef6f6a">(</span><span style="color:#3d3d3d">buffer</span><span style="color:#e8252b;font-weight:700">+</span><span style="color:#3d3d3d">buffer_offset</span><span style="color:#e8252b;font-weight:700">,</span> <span style="color:#3d3d3d">size</span><span style="color:#ef6f6a">)</span><span style="color:#ef6f6a">)</span></div>
<div class="cl" style="top:154.86px">    <span style="color:#ef6f6a">{</span></div>
<div class="cl" style="top:165.54px">        <span style="color:#4538c8;font-weight:700">switch</span><span style="color:#ef6f6a">(</span><span style="color:#3d3d3d">mode</span><span style="color:#ef6f6a">)</span></div>
<div class="cl" style="top:176.22px">        <span style="color:#ef6f6a">{</span></div>
<div class="cl" style="top:186.90px">        <span style="color:#4538c8;font-weight:700">case</span> <span style="color:#4e5b68">LA_MODE_DIGITAL</span><span style="color:#ef6f6a">:</span></div>
<div class="cl" style="top:197.58px">        <span style="color:#ef6f6a">{</span></div>
<div class="cl" style="top:208.26px">            <span style="color:#4538c8;font-weight:700">for</span> <span style="color:#ef6f6a">(</span><span style="color:#4538c8;font-weight:700">int</span> <span style="color:#3d3d3d">i</span><span style="color:#e8252b;font-weight:700">=</span><span style="color:#e46a9e">0</span><span style="color:#e8252b;font-weight:700">;</span> <span style="color:#3d3d3d">i</span><span style="color:#e8252b;font-weight:700">&lt;</span><span style="color:#3d3d3d">size</span><span style="color:#e8252b;font-weight:700">;</span> <span style="color:#3d3d3d">i</span><span style="color:#e8252b;font-weight:700">++</span><span style="color:#ef6f6a">)</span></div>
<div class="cl" style="top:218.94px">            <span style="color:#ef6f6a">{</span></div>
<div class="cl" style="top:229.62px">                <span style="color:#54548f">plotNewByte</span><span style="color:#ef6f6a">(</span> <span style="color:#3d3d3d">buffer</span><span style="color:#3d3d3d">[</span><span style="color:#3d3d3d">i</span><span style="color:#3d3d3d">]</span> <span style="color:#e8252b;font-weight:700">,</span> <span style="color:#3d3d3d">t_last</span><span style="color:#e8252b;font-weight:700">,</span> <span style="color:#3d3d3d">dt</span><span style="color:#e8252b;font-weight:700">,</span> <span style="color:#3d3d3d">i</span><span style="color:#ef6f6a">)</span><span style="color:#e8252b;font-weight:700">;</span></div>
<div class="cl" style="top:240.30px">            <span style="color:#ef6f6a">}</span></div>
<div class="cl" style="top:250.98px">            <span style="color:#4538c8;font-weight:700">break</span><span style="color:#e8252b;font-weight:700">;</span></div>
<div class="cl" style="top:261.66px">        <span style="color:#ef6f6a">}</span></div>
<div class="cl" style="top:272.34px">        <span style="color:#4538c8;font-weight:700">case</span> <span style="color:#4e5b68">LA_MODE_DIGITAL_X2</span><span style="color:#ef6f6a">:</span></div>
<div class="cl" style="top:283.02px">        <span style="color:#ef6f6a">{</span></div>
<div class="cl" style="top:293.70px">            <span style="color:#4538c8;font-weight:700">for</span> <span style="color:#ef6f6a">(</span><span style="color:#4538c8;font-weight:700">int</span> <span style="color:#3d3d3d">i</span><span style="color:#e8252b;font-weight:700">=</span><span style="color:#e46a9e">0</span><span style="color:#e8252b;font-weight:700">;</span> <span style="color:#3d3d3d">i</span><span style="color:#e8252b;font-weight:700">&lt;</span><span style="color:#3d3d3d">size</span><span style="color:#e8252b;font-weight:700">;</span> <span style="color:#3d3d3d">i</span><span style="color:#e8252b;font-weight:700">++</span><span style="color:#ef6f6a">)</span></div>
<div class="cl" style="top:304.38px">            <span style="color:#ef6f6a">{</span></div>
<div class="cl" style="top:315.06px">                <span style="color:#54548f">plotNewByte</span><span style="color:#ef6f6a">(</span> <span style="color:#3d3d3d">buffer</span><span style="color:#3d3d3d">[</span><span style="color:#3d3d3d">i</span><span style="color:#3d3d3d">]</span><span style="color:#e8252b;font-weight:700">&gt;&gt;</span><span style="color:#e46a9e">4</span>   <span style="color:#e8252b;font-weight:700">,</span> <span style="color:#3d3d3d">t_last</span><span style="color:#e8252b;font-weight:700">,</span> <span style="color:#3d3d3d">dt</span><span style="color:#e8252b;font-weight:700">,</span> <span style="color:#3d3d3d">i</span><span style="color:#e8252b;font-weight:700">*</span><span style="color:#e46a9e">2</span><span style="color:#ef6f6a">)</span><span style="color:#e8252b;font-weight:700">;</span>      <span style="color:#4f9a8a">/* high nibble */</span></div>
<div class="cl" style="top:325.74px">                <span style="color:#54548f">plotNewByte</span><span style="color:#ef6f6a">(</span> <span style="color:#3d3d3d">buffer</span><span style="color:#3d3d3d">[</span><span style="color:#3d3d3d">i</span><span style="color:#3d3d3d">]</span><span style="color:#e8252b;font-weight:700">&amp;</span><span style="color:#e46a9e">0x0F</span> <span style="color:#e8252b;font-weight:700">,</span> <span style="color:#3d3d3d">t_last</span><span style="color:#e8252b;font-weight:700">,</span> <span style="color:#3d3d3d">dt</span><span style="color:#e8252b;font-weight:700">,</span> <span style="color:#3d3d3d">i</span><span style="color:#e8252b;font-weight:700">*</span><span style="color:#e46a9e">2</span><span style="color:#e8252b;font-weight:700">+</span><span style="color:#e46a9e">1</span><span style="color:#ef6f6a">)</span><span style="color:#e8252b;font-weight:700">;</span>    <span style="color:#4f9a8a">/* low  nibble */</span></div>
<div class="cl" style="top:336.42px">            <span style="color:#ef6f6a">}</span></div>
<div class="cl" style="top:347.10px">            <span style="color:#3d3d3d">size</span><span style="color:#e8252b;font-weight:700">&lt;&lt;=</span><span style="color:#e46a9e">1</span><span style="color:#e8252b;font-weight:700">;</span>    <span style="color:#4f9a8a">/* real data size = size * 2 */</span></div>
<div class="cl" style="top:357.78px">            <span style="color:#4538c8;font-weight:700">break</span><span style="color:#e8252b;font-weight:700">;</span></div>
<div class="cl" style="top:368.46px">        <span style="color:#ef6f6a">}</span></div>
<div class="cl" style="top:379.14px">        <span style="color:#4538c8;font-weight:700">case</span> <span style="color:#4e5b68">LA_MODE_ANALOG</span><span style="color:#ef6f6a">:</span></div>
<div class="cl" style="top:389.82px">        <span style="color:#ef6f6a">{</span></div>
<div class="cl" style="top:400.50px">            <span style="color:#4538c8;font-weight:700">uint16_t</span> <span style="color:#3d3d3d">adc_raw_value</span><span style="color:#e8252b;font-weight:700">=</span><span style="color:#e46a9e">0</span><span style="color:#e8252b;font-weight:700">;</span>   <span style="color:#4f9a8a">/* stores Received 10 bit resolution ADC value */</span></div>
<div class="cl" style="top:411.18px">            <span style="color:#4538c8;font-weight:700">double</span> <span style="color:#3d3d3d">adc_disp_value</span><span style="color:#e8252b;font-weight:700">=</span><span style="color:#e46a9e">0</span><span style="color:#e8252b;font-weight:700">;</span>   <span style="color:#4f9a8a">/* stores Displayed 10 bit resolution ADC value */</span></div>
<div class="r" style="left:242.72px;top:145.38px;width:4.73px;height:8.28px;border:0.6px solid #b9b9b9;box-sizing:border-box;background:rgba(0,100,0,0.05)"></div>
<div class="r" style="left:424.66px;top:145.38px;width:4.73px;height:8.28px;border:0.6px solid #b9b9b9;box-sizing:border-box;background:rgba(0,100,0,0.05)"></div>
<div class="r" style="left:428.99px;top:145.18px;width:1.10px;height:8.68px;background:#333333;"></div>
<div class="cl" style="top:144.18px;left:457px;color:#cfcfcf;-webkit-text-stroke-width:0">You, a year ago • Initial commit</div>
<div class="r" style="left:212.50px;top:413.00px;width:358.75px;height:6.30px;background:rgba(100,100,100,0.4);"></div>
<div class="r" style="left:691.00px;top:48.00px;width:2.90px;height:371.30px;background:linear-gradient(to right, rgba(0,0,0,0), rgba(0,0,0,0.045));"></div>
<div class="r" style="left:760.40px;top:48.00px;width:7.60px;height:371.30px;background:#f7f7f7;"></div>
<div class="r" style="left:760.40px;top:48.00px;width:0.50px;height:371.30px;background:#ececec;"></div>
<div class="r" style="left:761.00px;top:102.00px;width:7.00px;height:14.00px;background:rgba(100,100,100,0.35);"></div>
<div class="r" style="left:761.00px;top:104.60px;width:7.00px;height:1.00px;background:#5a5a5a;"></div>
<div class="r" style="left:765.60px;top:48.40px;width:2.40px;height:3.90px;background:#f24b4b;"></div>
<svg class="r" style="left:693.70px;top:48.00px" width="66.70" height="371.30" viewBox="0 0 66.7 371.3"><rect x="7.35" y="52.06" width="1.12" height="0.9" fill="#3d3d3d" opacity="0.55"/><rect x="8.47" y="52.06" width="1.12" height="0.9" fill="#e8252b" opacity="0.55"/><rect x="9.60" y="52.06" width="2.25" height="0.9" fill="#3d3d3d" opacity="0.55"/><rect x="11.85" y="52.06" width="1.12" height="0.9" fill="#e8252b" opacity="0.55"/><rect x="12.97" y="52.06" width="3.37" height="0.9" fill="#54548f" opacity="0.55"/><rect x="16.34" y="52.06" width="0.56" height="0.9" fill="#ef6f6a" opacity="0.55"/><rect x="16.91" y="52.06" width="0.56" height="0.9" fill="#ef6f6a" opacity="0.55"/><rect x="17.47" y="52.06" width="0.56" height="0.9" fill="#e8252b" opacity="0.55"/><rect x="5.10" y="53.18" width="0.56" height="0.9" fill="#ef6f6a" opacity="0.55"/><rect x="5.10" y="54.30" width="2.25" height="0.9" fill="#4538c8" opacity="0.55"/><rect x="7.91" y="54.30" width="5.62" height="0.9" fill="#b656c0" opacity="0.55"/><rect x="13.53" y="54.30" width="0.56" height="0.9" fill="#ef6f6a" opacity="0.55"/><rect x="14.10" y="54.30" width="0.56" height="0.9" fill="#ef6f6a" opacity="0.55"/><rect x="14.66" y="54.30" width="3.94" height="0.9" fill="#54548f" opacity="0.55"/><rect x="18.59" y="54.30" width="0.56" height="0.9" fill="#ef6f6a" opacity="0.55"/><rect x="19.15" y="54.30" width="0.56" height="0.9" fill="#ef6f6a" opacity="0.55"/><rect x="5.10" y="55.42" width="0.56" height="0.9" fill="#ef6f6a" opacity="0.55"/><rect x="7.35" y="56.54" width="3.37" height="0.9" fill="#4538c8" opacity="0.55"/><rect x="11.28" y="56.54" width="3.37" height="0.9" fill="#3d3d3d" opacity="0.55"/><rect x="15.22" y="56.54" width="0.56" height="0.9" fill="#e8252b" opacity="0.55"/><rect x="16.34" y="56.54" width="0.56" height="0.9" fill="#ef6f6a" opacity="0.55"/><rect x="16.91" y="56.54" width="1.12" height="0.9" fill="#3d3d3d" opacity="0.55"/><rect x="18.03" y="56.54" width="1.12" height="0.9" fill="#e8252b" opacity="0.55"/><rect x="19.15" y="56.54" width="2.25" height="0.9" fill="#3d3d3d" opacity="0.55"/><rect x="21.40" y="56.54" width="1.12" height="0.9" fill="#e8252b" opacity="0.55"/><rect x="22.53" y="56.54" width="2.81" height="0.9" fill="#54548f" opacity="0.55"/><rect x="25.34" y="56.54" width="0.56" height="0.9" fill="#ef6f6a" opacity="0.55"/><rect x="25.90" y="56.54" width="0.56" height="0.9" fill="#e46a9e" opacity="0.55"/><rect x="26.46" y="56.54" width="0.56" height="0.9" fill="#ef6f6a" opacity="0.55"/><rect x="27.03" y="56.54" width="1.12" height="0.9" fill="#e8252b" opacity="0.55"/><rect x="28.15" y="56.54" width="2.25" height="0.9" fill="#54548f" opacity="0.55"/><rect x="30.40" y="56.54" width="0.56" height="0.9" fill="#ef6f6a" opacity="0.55"/><rect x="30.96" y="56.54" width="0.56" height="0.9" fill="#ef6f6a" opacity="0.55"/><rect x="31.52" y="56.54" width="1.12" height="0.9" fill="#e8252b" opacity="0.55"/><rect x="32.65" y="56.54" width="2.25" height="0.9" fill="#54548f" opacity="0.55"/><rect x="34.90" y="56.54" width="0.56" height="0.9" fill="#ef6f6a" opacity="0.55"/><rect x="35.46" y="56.54" width="0.56" height="0.9" fill="#ef6f6a" opacity="0.55"/><rect x="36.02" y="56.54" width="0.56" height="0.9" fill="#ef6f6a" opacity="0.55"/><rect x="36.58" y="56.54" width="0.56" height="0.9" fill="#e8252b" opacity="0.55"/><rect x="37.71" y="56.54" width="0.56" height="0.9" fill="#ef6f6a" opacity="0.55"/><rect x="38.27" y="56.54" width="0.56" height="0.9" fill="#ef6f6a" opacity="0.55"/><rect x="38.83" y="56.54" width="1.12" height="0.9" fill="#3d3d3d" opacity="0.55"/><rect x="39.96" y="56.54" width="1.12" height="0.9" fill="#e8252b" opacity="0.55"/><rect x="41.08" y="56.54" width="2.25" height="0.9" fill="#3d3d3d" opacity="0.55"/><rect x="43.33" y="56.54" width="1.12" height="0.9" fill="#e8252b" opacity="0.55"/><rect x="44.45" y="56.54" width="2.81" height="0.9" fill="#54548f" opacity="0.55"/><rect x="47.26" y="56.54" width="0.56" height="0.9" fill="#ef6f6a" opacity="0.55"/><rect x="47.83" y="56.54" width="0.56" height="0.9" fill="#e46a9e" opacity="0.55"/><rect x="48.39" y="56.54" width="0.56" height="0.9" fill="#ef6f6a" opacity="0.55"/><rect x="48.95" y="56.54" width="1.12" height="0.9" fill="#e8252b" opacity="0.55"/><rect x="50.08" y="56.54" width="2.25" height="0.9" fill="#54548f" opacity="0.55"/><rect x="52.32" y="56.54" width="0.56" height="0.9" fill="#ef6f6a" opacity="0.55"/><rect x="52.89" y="56.54" width="0.56" height="0.9" fill="#ef6f6a" opacity="0.55"/><rect x="53.45" y="56.54" width="1.12" height="0.9" fill="#e8252b" opacity="0.55"/><rect x="54.57" y="56.54" width="1.69" height="0.9" fill="#54548f" opacity="0.55"/><rect x="56.26" y="56.54" width="0.56" height="0.9" fill="#ef6f6a" opacity="0.55"/><rect x="56.82" y="56.54" width="0.56" height="0.9" fill="#ef6f6a" opacity="0.55"/><rect x="57.38" y="56.54" width="0.56" height="0.9" fill="#e8252b" opacity="0.55"/><rect x="57.95" y="56.54" width="0.56" height="0.9" fill="#e46a9e" opacity="0.55"/><rect x="58.51" y="56.54" width="0.56" height="0.9" fill="#ef6f6a" opacity="0.55"/><rect x="59.07" y="56.54" width="1.12" height="0.9" fill="#e8252b" opacity="0.55"/><rect x="60.20" y="56.54" width="1.69" height="0.9" fill="#3d3d3d" opacity="0.55"/><rect x="61.88" y="56.54" width="0.56" height="0.9" fill="#ef6f6a" opacity="0.55"/><rect x="63.01" y="56.54" width="0.56" height="0.9" fill="#ef6f6a" opacity="0.55"/><rect x="64.13" y="56.54" width="0.56" height="0.9" fill="#e46a9e" opacity="0.55"/><rect x="64.69" y="56.54" width="0.56" height="0.9" fill="#e8252b" opacity="0.55"/><rect x="7.35" y="57.66" width="3.37" height="0.9" fill="#4538c8" opacity="0.55"/><rect x="11.28" y="57.66" width="1.12" height="0.9" fill="#3d3d3d" opacity="0.55"/><rect x="15.22" y="57.66" width="0.56" height="0.9" fill="#e8252b" opacity="0.55"/><rect x="16.34" y="57.66" width="8.43" height="0.9" fill="#54548f" opacity="0.55"/><rect x="24.78" y="57.66" width="0.56" height="0.9" fill="#ef6f6a" opacity="0.55"/><rect x="25.34" y="57.66" width="0.56" height="0.9" fill="#ef6f6a" opacity="0.55"/><rect x="25.90" y="57.66" width="0.56" height="0.9" fill="#e8252b" opacity="0.55"/><rect x="7.35" y="58.78" width="1.69" height="0.9" fill="#4538c8" opacity="0.55"/><rect x="9.60" y="58.78" width="2.25" height="0.9" fill="#3d3d3d" opacity="0.55"/><rect x="12.41" y="58.78" width="0.56" height="0.9" fill="#e8252b" opacity="0.55"/><rect x="13.53" y="58.78" width="0.56" height="0.9" fill="#e46a9e" opacity="0.55"/><rect x="14.10" y="58.78" width="0.56" height="0.9" fill="#e8252b" opacity="0.55"/><rect x="7.35" y="61.02" width="1.12" height="0.9" fill="#4538c8" opacity="0.55"/><rect x="9.04" y="61.02" width="0.56" height="0.9" fill="#ef6f6a" opacity="0.55"/><rect x="9.60" y="61.02" width="7.31" height="0.9" fill="#54548f" opacity="0.55"/><rect x="16.91" y="61.02" width="0.56" height="0.9" fill="#ef6f6a" opacity="0.55"/><rect x="17.47" y="61.02" width="3.37" height="0.9" fill="#3d3d3d" opacity="0.55"/><rect x="20.84" y="61.02" width="0.56" height="0.9" fill="#e8252b" opacity="0.55"/><rect x="21.40" y="61.02" width="7.31" height="0.9" fill="#3d3d3d" opacity="0.55"/><rect x="28.71" y="61.02" width="0.56" height="0.9" fill="#e8252b" opacity="0.55"/><rect x="29.84" y="61.02" width="2.25" height="0.9" fill="#3d3d3d" opacity="0.55"/><rect x="32.09" y="61.02" width="0.56" height="0.9" fill="#ef6f6a" opacity="0.55"/><rect x="32.65" y="61.02" width="0.56" height="0.9" fill="#ef6f6a" opacity="0.55"/><rect x="7.35" y="62.14" width="0.56" height="0.9" fill="#ef6f6a" opacity="0.55"/><rect x="9.60" y="63.26" width="3.37" height="0.9" fill="#4538c8" opacity="0.55"/><rect x="12.97" y="63.26" width="0.56" height="0.9" fill="#ef6f6a" opacity="0.55"/><rect x="13.53" y="63.26" width="2.25" height="0.9" fill="#3d3d3d" opacity="0.55"/><rect x="15.78" y="63.26" width="0.56" height="0.9" fill="#ef6f6a" opacity="0.55"/><rect x="9.60" y="64.38" width="0.56" height="0.9" fill="#ef6f6a" opacity="0.55"/><rect x="9.60" y="65.50" width="2.25" height="0.9" fill="#4538c8" opacity="0.55"/><rect x="12.41" y="65.50" width="8.43" height="0.9" fill="#4e5b68" opacity="0.55"/><rect x="20.84" y="65.50" width="0.56" height="0.9" fill="#ef6f6a" opacity="0.55"/><rect x="9.60" y="66.62" width="0.56" height="0.9" fill="#ef6f6a" opacity="0.55"/><rect x="11.85" y="67.74" width="1.69" height="0.9" fill="#4538c8" opacity="0.55"/><rect x="14.10" y="67.74" width="0.56" height="0.9" fill="#ef6f6a" opacity="0.55"/><rect x="14.66" y="67.74" width="1.69" height="0.9" fill="#4538c8" opacity="0.55"/><rect x="16.91" y="67.74" width="0.56" height="0.9" fill="#3d3d3d" opacity="0.55"/><rect x="17.47" y="67.74" width="0.56" height="0.9" fill="#e8252b" opacity="0.55"/><rect x="18.03" y="67.74" width="0.56" height="0.9" fill="#e46a9e" opacity="0.55"/><rect x="18.59" y="67.74" width="0.56" height="0.9" fill="#e8252b" opacity="0.55"/><rect x="19.72" y="67.74" width="0.56" height="0.9" fill="#3d3d3d" opacity="0.55"/><rect x="20.28" y="67.74" width="0.56" height="0.9" fill="#e8252b" opacity="0.55"/><rect x="20.84" y="67.74" width="2.25" height="0.9" fill="#3d3d3d" opacity="0.55"/><rect x="23.09" y="67.74" width="0.56" height="0.9" fill="#e8252b" opacity="0.55"/><rect x="24.21" y="67.74" width="0.56" height="0.9" fill="#3d3d3d" opacity="0.55"/><rect x="24.78" y="67.74" width="1.12" height="0.9" fill="#e8252b" opacity="0.55"/><rect x="25.90" y="67.74" width="0.56" height="0.9" fill="#ef6f6a" opacity="0.55"/><rect x="11.85" y="68.86" width="0.56" height="0.9" fill="#ef6f6a" opacity="0.55"/><rect x="14.10" y="69.98" width="6.18" height="0.9" fill="#54548f" opacity="0.55"/><rect x="20.28" y="69.98" width="0.56" height="0.9" fill="#ef6f6a" opacity="0.55"/><rect x="21.40" y="69.98" width="3.37" height="0.9" fill="#3d3d3d" opacity="0.55"/><rect x="24.78" y="69.98" width="0.56" height="0.9" fill="#3d3d3d" opacity="0.55"/><rect x="25.34" y="69.98" width="0.56" height="0.9" fill="#3d3d3d" opacity="0.55"/><rect x="25.90" y="69.98" width="0.56" height="0.9" fill="#3d3d3d" opacity="0.55"/><rect x="27.03" y="69.98" width="0.56" height="0.9" fill="#e8252b" opacity="0.55"/><rect x="28.15" y="69.98" width="3.37" height="0.9" fill="#3d3d3d" opacity="0.55"/><rect x="31.52" y="69.98" width="0.56" height="0.9" fill="#e8252b" opacity="0.55"/><rect x="32.65" y="69.98" width="1.12" height="0.9" fill="#3d3d3d" opacity="0.55"/><rect x="33.77" y="69.98" width="0.56" height="0.9" fill="#e8252b" opacity="0.55"/><rect x="34.90" y="69.98" width="0.56" height="0.9" fill="#3d3d3d" opacity="0.55"/><rect x="35.46" y="69.98" width="0.56" height="0.9" fill="#ef6f6a" opacity="0.55"/><rect x="36.02" y="69.98" width="0.56" height="0.9" fill="#e8252b" opacity="0.55"/><rect x="11.85" y="71.10" width="0.56" height="0.9" fill="#ef6f6a" opacity="0.55"/><rect x="11.85" y="72.22" width="2.81" height="0.9" fill="#4538c8" opacity="0.55"/><rect x="14.66" y="72.22" width="0.56" height="0.9" fill="#e8252b" opacity="0.55"/><rect x="9.60" y="73.34" width="0.56" height="0.9" fill="#ef6f6a" opacity="0.55"/><rect x="9.60" y="74.46" width="2.25" height="0.9" fill="#4538c8" opacity="0.55"/><rect x="12.41" y="74.46" width="10.12" height="0.9" fill="#4e5b68" opacity="0.55"/><rect x="22.53" y="74.46" width="0.56" height="0.9" fill="#ef6f6a" opacity="0.55"/><rect x="9.60" y="75.58" width="0.56" height="0.9" fill="#ef6f6a" opacity="0.55"/><rect x="11.85" y="76.70" width="1.69" height="0.9" fill="#4538c8" opacity="0.55"/><rect x="14.10" y="76.70" width="0.56" height="0.9" fill="#ef6f6a" opacity="0.55"/><rect x="14.66" y="76.70" width="1.69" height="0.9" fill="#4538c8" opacity="0.55"/><rect x="16.91" y="76.70" width="0.56" height="0.9" fill="#3d3d3d" opacity="0.55"/><rect x="17.47" y="76.70" width="0.56" height="0.9" fill="#e8252b" opacity="0.55"/><rect x="18.03" y="76.70" width="0.56" height="0.9" fill="#e46a9e" opacity="0.55"/><rect x="18.59" y="76.70" width="0.56" height="0.9" fill="#e8252b" opacity="0.55"/><rect x="19.72" y="76.70" width="0.56" height="0.9" fill="#3d3d3d" opacity="0.55"/><rect x="20.28" y="76.70" width="0.56" height="0.9" fill="#e8252b" opacity="0.55"/><rect x="20.84" y="76.70" width="2.25" height="0.9" fill="#3d3d3d" opacity="0.55"/><rect x="23.09" y="76.70" width="0.56" height="0.9" fill="#e8252b" opacity="0.55"/><rect x="24.21" y="76.70" width="0.56" height="0.9" fill="#3d3d3d" opacity="0.55"/><rect x="24.78" y="76.70" width="1.12" height="0.9" fill="#e8252b" opacity="0.55"/><rect x="25.90" y="76.70" width="0.56" height="0.9" fill="#ef6f6a" opacity="0.55"/><rect x="11.85" y="77.82" width="0.56" height="0.9" fill="#ef6f6a" opacity="0.55"/><rect x="14.10" y="78.94" width="6.18" height="0.9" fill="#54548f" opacity="0.55"/><rect x="20.28" y="78.94" width="0.56" height="0.9" fill="#ef6f6a" opacity="0.55"/><rect x="21.40" y="78.94" width="3.37" height="0.9" fill="#3d3d3d" opacity="0.55"/><rect x="24.78" y="78.94" width="0.56" height="0.9" fill="#3d3d3d" opacity="0.55"/><rect x="25.34" y="78.94" width="0.56" height="0.9" fill="#3d3d3d" opacity="0.55"/><rect x="25.90" y="78.94" width="0.56" height="0.9" fill="#3d3d3d" opacity="0.55"/><rect x="26.46" y="78.94" width="1.12" height="0.9" fill="#e8252b" opacity="0.55"/><rect x="27.59" y="78.94" width="0.56" height="0.9" fill="#e46a9e" opacity="0.55"/><rect x="29.84" y="78.94" width="0.56" height="0.9" fill="#e8252b" opacity="0.55"/><rect x="30.96" y="78.94" width="3.37" height="0.9" fill="#3d3d3d" opacity="0.55"/><rect x="34.33" y="78.94" width="0.56" height="0.9" fill="#e8252b" opacity="0.55"/><rect x="35.46" y="78.94" width="1.12" height="0.9" fill="#3d3d3d" opacity="0.55"/><rect x="36.58" y="78.94" width="0.56" height="0.9" fill="#e8252b" opacity="0.55"/><rect x="37.71" y="78.94" width="0.56" height="0.9" fill="#3d3d3d" opacity="0.55"/><rect x="38.27" y="78.94" width="0.56" height="0.9" fill="#e8252b" opacity="0.55"/><rect x="38.83" y="78.94" width="0.56" height="0.9" fill="#e46a9e" opacity="0.55"/><rect x="39.39" y="78.94" width="0.56" height="0.9" fill="#ef6f6a" opacity="0.55"/><rect x="39.96" y="78.94" width="0.56" height="0.9" fill="#e8252b" opacity="0.55"/><rect x="43.89" y="78.94" width="9.56" height="0.9" fill="#4f9a8a" opacity="0.55"/><rect x="14.10" y="80.06" width="6.18" height="0.9" fill="#54548f" opacity="0.55"/><rect x="20.28" y="80.06" width="0.56" height="0.9" fill="#ef6f6a" opacity="0.55"/><rect x="21.40" y="80.06" width="3.37" height="0.9" fill="#3d3d3d" opacity="0.55"/><rect x="24.78" y="80.06" width="0.56" height="0.9" fill="#3d3d3d" opacity="0.55"/><rect x="25.34" y="80.06" width="0.56" height="0.9" fill="#3d3d3d" opacity="0.55"/><rect x="25.90" y="80.06" width="0.56" height="0.9" fill="#3d3d3d" opacity="0.55"/><rect x="26.46" y="80.06" width="0.56" height="0.9" fill="#e8252b" opacity="0.55"/><rect x="27.03" y="80.06" width="2.25" height="0.9" fill="#e46a9e" opacity="0.55"/><rect x="29.84" y="80.06" width="0.56" height="0.9" fill="#e8252b" opacity="0.55"/><rect x="30.96" y="80.06" width="3.37" height="0.9" fill="#3d3d3d" opacity="0.55"/><rect x="34.33" y="80.06" width="0.56" height="0.9" fill="#e8252b" opacity="0.55"/><rect x="35.46" y="80.06" width="1.12" height="0.9" fill="#3d3d3d" opacity="0.55"/><rect x="36.58" y="80.06" width="0.56" height="0.9" fill="#e8252b" opacity="0.55"/><rect x="37.71" y="80.06" width="0.56" height="0.9" fill="#3d3d3d" opacity="0.55"/><rect x="38.27" y="80.06" width="0.56" height="0.9" fill="#e8252b" opacity="0.55"/><rect x="38.83" y="80.06" width="0.56" height="0.9" fill="#e46a9e" opacity="0.55"/><rect x="39.39" y="80.06" width="0.56" height="0.9" fill="#e8252b" opacity="0.55"/><rect x="39.96" y="80.06" width="0.56" height="0.9" fill="#e46a9e" opacity="0.55"/><rect x="40.52" y="80.06" width="0.56" height="0.9" fill="#ef6f6a" opacity="0.55"/><rect x="41.08" y="80.06" width="0.56" height="0.9" fill="#e8252b" opacity="0.55"/><rect x="43.89" y="80.06" width="9.56" height="0.9" fill="#4f9a8a" opacity="0.55"/><rect x="11.85" y="81.18" width="0.56" height="0.9" fill="#ef6f6a" opacity="0.55"/><rect x="11.85" y="82.30" width="2.25" height="0.9" fill="#3d3d3d" opacity="0.55"/><rect x="14.10" y="82.30" width="1.69" height="0.9" fill="#e8252b" opacity="0.55"/><rect x="15.78" y="82.30" width="0.56" height="0.9" fill="#e46a9e" opacity="0.55"/><rect x="16.34" y="82.30" width="0.56" height="0.9" fill="#e8252b" opacity="0.55"/><rect x="19.15" y="82.30" width="17.43" height="0.9" fill="#4f9a8a" opacity="0.55"/><rect x="11.85" y="83.42" width="2.81" height="0.9" fill="#4538c8" opacity="0.55"/><rect x="14.66" y="83.42" width="0.56" height="0.9" fill="#e8252b" opacity="0.55"/><rect x="9.60" y="84.54" width="0.56" height="0.9" fill="#ef6f6a" opacity="0.55"/><rect x="9.60" y="85.66" width="2.25" height="0.9" fill="#4538c8" opacity="0.55"/><rect x="12.41" y="85.66" width="7.87" height="0.9" fill="#4e5b68" opacity="0.55"/><rect x="20.28" y="85.66" width="0.56" height="0.9" fill="#ef6f6a" opacity="0.55"/><rect x="9.60" y="86.78" width="0.56" height="0.9" fill="#ef6f6a" opacity="0.55"/><rect x="11.85" y="87.90" width="4.50" height="0.9" fill="#4538c8" opacity="0.55"/><rect x="16.91" y="87.90" width="7.31" height="0.9" fill="#3d3d3d" opacity="0.55"/><rect x="24.21" y="87.90" width="0.56" height="0.9" fill="#e8252b" opacity="0.55"/><rect x="24.78" y="87.90" width="0.56" height="0.9" fill="#e46a9e" opacity="0.55"/><rect x="25.34" y="87.90" width="0.56" height="0.9" fill="#e8252b" opacity="0.55"/><rect x="27.59" y="87.90" width="27.55" height="0.9" fill="#4f9a8a" opacity="0.55"/><rect x="11.85" y="89.02" width="3.37" height="0.9" fill="#4538c8" opacity="0.55"/><rect x="15.78" y="89.02" width="7.87" height="0.9" fill="#3d3d3d" opacity="0.55"/><rect x="23.65" y="89.02" width="0.56" height="0.9" fill="#e8252b" opacity="0.55"/><rect x="24.21" y="89.02" width="0.56" height="0.9" fill="#e46a9e" opacity="0.55"/><rect x="24.78" y="89.02" width="0.56" height="0.9" fill="#e8252b" opacity="0.55"/><rect x="27.03" y="89.02" width="28.11" height="0.9" fill="#4f9a8a" opacity="0.55"/><rect x="9.14" y="0.60" width="2.25" height="0.9" fill="#5a5ab8" opacity="0.50"/><rect x="11.95" y="0.60" width="1.69" height="0.9" fill="#5a5ab8" opacity="0.50"/><rect x="14.20" y="0.60" width="1.31" height="0.9" fill="#5a5ab8" opacity="0.50"/><rect x="16.66" y="0.60" width="4.50" height="0.9" fill="#e87a86" opacity="0.45"/><rect x="21.72" y="0.60" width="1.12" height="0.9" fill="#5a5ab8" opacity="0.50"/><rect x="23.41" y="0.60" width="1.12" height="0.9" fill="#e87a86" opacity="0.45"/><rect x="25.09" y="0.60" width="0.83" height="0.9" fill="#5a5ab8" opacity="0.50"/><rect x="28.24" y="0.60" width="1.12" height="0.9" fill="#5a9a9a" opacity="0.42"/><rect x="29.92" y="0.60" width="2.25" height="0.9" fill="#5a9a9a" opacity="0.42"/><rect x="32.73" y="0.60" width="2.45" height="0.9" fill="#5a9a9a" opacity="0.42"/><rect x="6.82" y="3.00" width="1.12" height="0.9" fill="#e87a86" opacity="0.45"/><rect x="6.82" y="5.30" width="2.89" height="0.9" fill="#6a6a6a" opacity="0.50"/><rect x="10.30" y="5.30" width="1.69" height="0.9" fill="#5a5ab8" opacity="0.50"/><rect x="12.54" y="5.30" width="1.12" height="0.9" fill="#5a5ab8" opacity="0.50"/><rect x="14.23" y="5.30" width="1.12" height="0.9" fill="#5a5ab8" opacity="0.50"/><rect x="15.92" y="5.30" width="2.81" height="0.9" fill="#5a5ab8" opacity="0.50"/><rect x="19.29" y="5.30" width="2.00" height="0.9" fill="#5a5ab8" opacity="0.50"/><rect x="21.29" y="5.30" width="1.12" height="0.9" fill="#5a9a9a" opacity="0.42"/><rect x="22.98" y="5.30" width="1.69" height="0.9" fill="#5a9a9a" opacity="0.42"/><rect x="25.23" y="5.30" width="1.12" height="0.9" fill="#5a9a9a" opacity="0.42"/><rect x="26.91" y="5.30" width="3.37" height="0.9" fill="#5a9a9a" opacity="0.42"/><rect x="30.85" y="5.30" width="2.81" height="0.9" fill="#5a9a9a" opacity="0.42"/><rect x="34.22" y="5.30" width="0.38" height="0.9" fill="#5a9a9a" opacity="0.42"/><rect x="6.82" y="6.50" width="3.37" height="0.9" fill="#6a6a6a" opacity="0.50"/><rect x="10.76" y="6.50" width="1.12" height="0.9" fill="#5a5ab8" opacity="0.50"/><rect x="12.45" y="6.50" width="1.69" height="0.9" fill="#6a6a6a" opacity="0.50"/><rect x="14.69" y="6.50" width="4.50" height="0.9" fill="#5a5ab8" opacity="0.50"/><rect x="19.75" y="6.50" width="0.96" height="0.9" fill="#6a6a6a" opacity="0.50"/><rect x="20.71" y="6.50" width="1.16" height="0.9" fill="#e87a86" opacity="0.45"/><rect x="6.82" y="9.30" width="1.12" height="0.9" fill="#5a5ab8" opacity="0.50"/><rect x="8.51" y="9.30" width="1.79" height="0.9" fill="#5a5ab8" opacity="0.50"/><rect x="10.30" y="9.30" width="2.89" height="0.9" fill="#e87a86" opacity="0.45"/><rect x="13.19" y="9.30" width="2.81" height="0.9" fill="#6a6a6a" opacity="0.50"/><rect x="16.56" y="9.30" width="1.12" height="0.9" fill="#6a6a6a" opacity="0.50"/><rect x="18.25" y="9.30" width="1.69" height="0.9" fill="#6a6a6a" opacity="0.50"/><rect x="20.50" y="9.30" width="0.79" height="0.9" fill="#6a6a6a" opacity="0.50"/><rect x="21.29" y="9.30" width="3.37" height="0.9" fill="#e87a86" opacity="0.45"/><rect x="25.23" y="9.30" width="1.27" height="0.9" fill="#e87a86" opacity="0.45"/><rect x="6.82" y="10.50" width="1.16" height="0.9" fill="#e87a86" opacity="0.45"/><rect x="9.14" y="12.30" width="2.81" height="0.9" fill="#6a6a6a" opacity="0.50"/><rect x="12.26" y="12.30" width="1.69" height="0.9" fill="#6a6a6a" opacity="0.50"/><rect x="14.92" y="12.30" width="3.37" height="0.9" fill="#5a5ab8" opacity="0.50"/><rect x="18.86" y="12.30" width="1.12" height="0.9" fill="#5a5ab8" opacity="0.50"/><rect x="20.13" y="12.30" width="3.37" height="0.9" fill="#5a5ab8" opacity="0.50"/><rect x="24.07" y="12.30" width="2.25" height="0.9" fill="#6a6a6a" opacity="0.50"/><rect x="26.88" y="12.30" width="3.37" height="0.9" fill="#5a5ab8" opacity="0.50"/><rect x="30.55" y="12.30" width="3.47" height="0.9" fill="#e87a86" opacity="0.45"/><rect x="9.14" y="13.40" width="1.69" height="0.9" fill="#6a6a6a" opacity="0.50"/><rect x="11.39" y="13.40" width="0.64" height="0.9" fill="#6a6a6a" opacity="0.50"/><rect x="12.26" y="13.40" width="2.08" height="0.9" fill="#6a6a6a" opacity="0.50"/><rect x="14.92" y="13.40" width="3.37" height="0.9" fill="#5a5ab8" opacity="0.50"/><rect x="18.86" y="13.40" width="1.27" height="0.9" fill="#5a5ab8" opacity="0.50"/><rect x="20.13" y="13.40" width="1.69" height="0.9" fill="#5a5ab8" opacity="0.50"/><rect x="22.38" y="13.40" width="2.25" height="0.9" fill="#6a6a6a" opacity="0.50"/><rect x="25.19" y="13.40" width="1.12" height="0.9" fill="#5a5ab8" opacity="0.50"/><rect x="26.88" y="13.40" width="3.37" height="0.9" fill="#6a6a6a" opacity="0.50"/><rect x="30.55" y="13.40" width="3.47" height="0.9" fill="#e87a86" opacity="0.45"/><rect x="9.14" y="14.50" width="1.12" height="0.9" fill="#6a6a6a" opacity="0.50"/><rect x="10.82" y="14.50" width="1.21" height="0.9" fill="#6a6a6a" opacity="0.50"/><rect x="12.26" y="14.50" width="1.12" height="0.9" fill="#6a6a6a" opacity="0.50"/><rect x="13.95" y="14.50" width="0.40" height="0.9" fill="#6a6a6a" opacity="0.50"/><rect x="14.92" y="14.50" width="1.69" height="0.9" fill="#5a5ab8" opacity="0.50"/><rect x="17.17" y="14.50" width="2.81" height="0.9" fill="#5a5ab8" opacity="0.50"/><rect x="20.13" y="14.50" width="4.50" height="0.9" fill="#5a5ab8" opacity="0.50"/><rect x="25.19" y="14.50" width="3.37" height="0.9" fill="#6a6a6a" opacity="0.50"/><rect x="29.13" y="14.50" width="1.42" height="0.9" fill="#5a5ab8" opacity="0.50"/><rect x="30.55" y="14.50" width="2.25" height="0.9" fill="#e87a86" opacity="0.45"/><rect x="33.36" y="14.50" width="0.66" height="0.9" fill="#e87a86" opacity="0.45"/><rect x="6.82" y="15.60" width="1.16" height="0.9" fill="#e87a86" opacity="0.45"/><rect x="6.82" y="18.50" width="2.81" height="0.9" fill="#6a6a6a" opacity="0.50"/><rect x="10.20" y="18.50" width="1.26" height="0.9" fill="#6a6a6a" opacity="0.50"/><rect x="12.03" y="18.50" width="2.25" height="0.9" fill="#5a5ab8" opacity="0.50"/><rect x="14.84" y="18.50" width="1.69" height="0.9" fill="#5a5ab8" opacity="0.50"/><rect x="17.09" y="18.50" width="1.69" height="0.9" fill="#5a5ab8" opacity="0.50"/><rect x="19.34" y="18.50" width="4.50" height="0.9" fill="#5a5ab8" opacity="0.50"/><rect x="24.18" y="18.50" width="1.69" height="0.9" fill="#6a6a6a" opacity="0.50"/><rect x="26.43" y="18.50" width="1.12" height="0.9" fill="#6a6a6a" opacity="0.50"/><rect x="28.12" y="18.50" width="3.37" height="0.9" fill="#6a6a6a" opacity="0.50"/><rect x="32.06" y="18.50" width="2.25" height="0.9" fill="#6a6a6a" opacity="0.50"/><rect x="34.87" y="18.50" width="3.37" height="0.9" fill="#6a6a6a" opacity="0.50"/><rect x="38.80" y="18.50" width="0.43" height="0.9" fill="#6a6a6a" opacity="0.50"/><rect x="39.23" y="18.50" width="1.16" height="0.9" fill="#e87a86" opacity="0.45"/><rect x="6.82" y="21.00" width="4.50" height="0.9" fill="#6a6a6a" opacity="0.50"/><rect x="11.88" y="21.00" width="2.46" height="0.9" fill="#6a6a6a" opacity="0.50"/><rect x="14.92" y="21.00" width="2.25" height="0.9" fill="#5a5ab8" opacity="0.50"/><rect x="17.74" y="21.00" width="3.37" height="0.9" fill="#b860c0" opacity="0.50"/><rect x="21.67" y="21.00" width="1.12" height="0.9" fill="#5a5ab8" opacity="0.50"/><rect x="23.36" y="21.00" width="1.12" height="0.9" fill="#b860c0" opacity="0.50"/><rect x="25.04" y="21.00" width="3.37" height="0.9" fill="#5a5ab8" opacity="0.50"/><rect x="28.81" y="21.00" width="2.31" height="0.9" fill="#e87a86" opacity="0.45"/><rect x="6.82" y="22.20" width="1.69" height="0.9" fill="#6a6a6a" opacity="0.50"/><rect x="9.07" y="22.20" width="2.25" height="0.9" fill="#5a5ab8" opacity="0.50"/><rect x="11.88" y="22.20" width="1.69" height="0.9" fill="#6a6a6a" opacity="0.50"/><rect x="14.13" y="22.20" width="2.81" height="0.9" fill="#5a5ab8" opacity="0.50"/><rect x="17.50" y="22.20" width="2.81" height="0.9" fill="#6a6a6a" opacity="0.50"/><rect x="20.88" y="22.20" width="1.12" height="0.9" fill="#5a5ab8" opacity="0.50"/><rect x="22.45" y="22.20" width="4.50" height="0.9" fill="#5a5ab8" opacity="0.50"/><rect x="27.51" y="22.20" width="1.12" height="0.9" fill="#b860c0" opacity="0.50"/><rect x="29.19" y="22.20" width="3.37" height="0.9" fill="#5a5ab8" opacity="0.50"/><rect x="33.13" y="22.20" width="0.31" height="0.9" fill="#b860c0" opacity="0.50"/><rect x="33.44" y="22.20" width="2.25" height="0.9" fill="#e87a86" opacity="0.45"/><rect x="36.25" y="22.20" width="1.24" height="0.9" fill="#e87a86" opacity="0.45"/><rect x="6.82" y="23.40" width="4.50" height="0.9" fill="#6a6a6a" opacity="0.50"/><rect x="11.88" y="23.40" width="2.25" height="0.9" fill="#5a5ab8" opacity="0.50"/><rect x="14.69" y="23.40" width="3.37" height="0.9" fill="#6a6a6a" opacity="0.50"/><rect x="18.63" y="23.40" width="2.81" height="0.9" fill="#5a5ab8" opacity="0.50"/><rect x="22.00" y="23.40" width="0.45" height="0.9" fill="#6a6a6a" opacity="0.50"/><rect x="22.45" y="23.40" width="2.81" height="0.9" fill="#5a5ab8" opacity="0.50"/><rect x="25.82" y="23.40" width="1.12" height="0.9" fill="#b860c0" opacity="0.50"/><rect x="27.51" y="23.40" width="1.12" height="0.9" fill="#5a5ab8" opacity="0.50"/><rect x="29.19" y="23.40" width="2.25" height="0.9" fill="#b860c0" opacity="0.50"/><rect x="31.71" y="23.40" width="2.81" height="0.9" fill="#e87a86" opacity="0.45"/><rect x="6.82" y="28.60" width="2.89" height="0.9" fill="#5a5a5a" opacity="0.75"/><rect x="10.30" y="28.60" width="2.89" height="0.9" fill="#5a5a5a" opacity="0.75"/><rect x="13.77" y="28.60" width="1.12" height="0.9" fill="#e87a86" opacity="0.45"/><rect x="16.08" y="28.60" width="1.12" height="0.9" fill="#6a6ac8" opacity="0.60"/><rect x="17.49" y="28.60" width="4.50" height="0.9" fill="#6a6ac8" opacity="0.60"/><rect x="22.27" y="28.60" width="4.23" height="0.9" fill="#6a6ac8" opacity="0.60"/><rect x="26.50" y="28.60" width="2.25" height="0.9" fill="#6a6a6a" opacity="0.50"/><rect x="29.31" y="28.60" width="4.50" height="0.9" fill="#e87a86" opacity="0.45"/><rect x="34.37" y="28.60" width="3.12" height="0.9" fill="#6a6a6a" opacity="0.50"/><rect x="37.49" y="28.60" width="4.50" height="0.9" fill="#6a6a6a" opacity="0.50"/><rect x="6.82" y="29.72" width="2.25" height="0.9" fill="#5a5a5a" opacity="0.75"/><rect x="9.35" y="29.72" width="0.36" height="0.9" fill="#5a5a5a" opacity="0.75"/><rect x="10.30" y="29.72" width="2.81" height="0.9" fill="#5a5a5a" opacity="0.75"/><rect x="13.77" y="29.72" width="1.74" height="0.9" fill="#e87a86" opacity="0.45"/><rect x="16.08" y="29.72" width="2.25" height="0.9" fill="#6a6ac8" opacity="0.60"/><rect x="18.61" y="29.72" width="1.12" height="0.9" fill="#6a6ac8" opacity="0.60"/><rect x="20.02" y="29.72" width="2.81" height="0.9" fill="#6a6ac8" opacity="0.60"/><rect x="23.11" y="29.72" width="2.25" height="0.9" fill="#6a6ac8" opacity="0.60"/><rect x="25.64" y="29.72" width="0.86" height="0.9" fill="#6a6ac8" opacity="0.60"/><rect x="26.50" y="29.72" width="3.37" height="0.9" fill="#6a6a6a" opacity="0.50"/><rect x="30.43" y="29.72" width="1.12" height="0.9" fill="#e87a86" opacity="0.45"/><rect x="32.12" y="29.72" width="2.81" height="0.9" fill="#6a6a6a" opacity="0.50"/><rect x="35.49" y="29.72" width="1.12" height="0.9" fill="#e87a86" opacity="0.45"/><rect x="37.18" y="29.72" width="0.31" height="0.9" fill="#6a6a6a" opacity="0.50"/><rect x="37.49" y="29.72" width="2.25" height="0.9" fill="#e87a86" opacity="0.45"/><rect x="40.31" y="29.72" width="3.55" height="0.9" fill="#e87a86" opacity="0.45"/><rect x="6.82" y="30.84" width="2.81" height="0.9" fill="#5a5a5a" opacity="0.75"/><rect x="10.30" y="30.84" width="2.81" height="0.9" fill="#5a5a5a" opacity="0.75"/><rect x="13.77" y="30.84" width="1.74" height="0.9" fill="#e87a86" opacity="0.45"/><rect x="16.08" y="30.84" width="1.12" height="0.9" fill="#6a6ac8" opacity="0.60"/><rect x="17.49" y="30.84" width="1.69" height="0.9" fill="#6a6ac8" opacity="0.60"/><rect x="19.46" y="30.84" width="2.81" height="0.9" fill="#6a6ac8" opacity="0.60"/><rect x="22.55" y="30.84" width="2.81" height="0.9" fill="#6a6ac8" opacity="0.60"/><rect x="25.64" y="30.84" width="0.86" height="0.9" fill="#6a6ac8" opacity="0.60"/><rect x="26.50" y="30.84" width="2.25" height="0.9" fill="#6a6a6a" opacity="0.50"/><rect x="29.31" y="30.84" width="1.69" height="0.9" fill="#e87a86" opacity="0.45"/><rect x="31.56" y="30.84" width="2.81" height="0.9" fill="#6a6a6a" opacity="0.50"/><rect x="34.93" y="30.84" width="2.56" height="0.9" fill="#e87a86" opacity="0.45"/><rect x="37.49" y="30.84" width="2.25" height="0.9" fill="#6a6a6a" opacity="0.50"/><rect x="40.31" y="30.84" width="2.25" height="0.9" fill="#6a6a6a" opacity="0.50"/><rect x="43.12" y="30.84" width="1.69" height="0.9" fill="#e87a86" opacity="0.45"/><rect x="45.37" y="30.84" width="1.12" height="0.9" fill="#e87a86" opacity="0.45"/><rect x="47.05" y="30.84" width="1.69" height="0.9" fill="#e87a86" opacity="0.45"/><rect x="49.30" y="30.84" width="4.50" height="0.9" fill="#e87a86" opacity="0.45"/><rect x="54.36" y="30.84" width="1.12" height="0.9" fill="#6a6a6a" opacity="0.50"/><rect x="56.05" y="30.84" width="1.70" height="0.9" fill="#e87a86" opacity="0.45"/><rect x="6.82" y="31.96" width="2.25" height="0.9" fill="#5a5a5a" opacity="0.75"/><rect x="9.35" y="31.96" width="0.36" height="0.9" fill="#5a5a5a" opacity="0.75"/><rect x="10.30" y="31.96" width="1.12" height="0.9" fill="#5a5a5a" opacity="0.75"/><rect x="11.70" y="31.96" width="1.49" height="0.9" fill="#5a5a5a" opacity="0.75"/><rect x="13.77" y="31.96" width="1.74" height="0.9" fill="#e87a86" opacity="0.45"/><rect x="16.08" y="31.96" width="3.37" height="0.9" fill="#6a6ac8" opacity="0.60"/><rect x="19.74" y="31.96" width="2.25" height="0.9" fill="#6a6ac8" opacity="0.60"/><rect x="22.27" y="31.96" width="3.37" height="0.9" fill="#6a6ac8" opacity="0.60"/><rect x="25.92" y="31.96" width="0.58" height="0.9" fill="#6a6ac8" opacity="0.60"/><rect x="26.50" y="31.96" width="2.25" height="0.9" fill="#6a6a6a" opacity="0.50"/><rect x="29.31" y="31.96" width="1.69" height="0.9" fill="#e87a86" opacity="0.45"/><rect x="31.56" y="31.96" width="4.50" height="0.9" fill="#6a6a6a" opacity="0.50"/><rect x="36.62" y="31.96" width="0.88" height="0.9" fill="#e87a86" opacity="0.45"/><rect x="37.49" y="31.96" width="2.31" height="0.9" fill="#6a6a6a" opacity="0.50"/><rect x="6.82" y="33.08" width="2.81" height="0.9" fill="#5a5a5a" opacity="0.75"/><rect x="10.30" y="33.08" width="2.89" height="0.9" fill="#5a5a5a" opacity="0.75"/><rect x="13.77" y="33.08" width="1.74" height="0.9" fill="#e87a86" opacity="0.45"/><rect x="16.08" y="33.08" width="2.81" height="0.9" fill="#6a6ac8" opacity="0.60"/><rect x="19.17" y="33.08" width="2.81" height="0.9" fill="#6a6ac8" opacity="0.60"/><rect x="22.27" y="33.08" width="2.81" height="0.9" fill="#6a6ac8" opacity="0.60"/><rect x="25.36" y="33.08" width="1.14" height="0.9" fill="#6a6ac8" opacity="0.60"/><rect x="26.50" y="33.08" width="1.12" height="0.9" fill="#6a6a6a" opacity="0.50"/><rect x="28.19" y="33.08" width="2.81" height="0.9" fill="#e87a86" opacity="0.45"/><rect x="31.56" y="33.08" width="4.50" height="0.9" fill="#6a6a6a" opacity="0.50"/><rect x="36.62" y="33.08" width="0.88" height="0.9" fill="#e87a86" opacity="0.45"/><rect x="37.49" y="33.08" width="1.12" height="0.9" fill="#e87a86" opacity="0.45"/><rect x="39.18" y="33.08" width="1.12" height="0.9" fill="#e87a86" opacity="0.45"/><rect x="6.82" y="34.20" width="2.81" height="0.9" fill="#5a5a5a" opacity="0.75"/><rect x="10.30" y="34.20" width="1.69" height="0.9" fill="#5a5a5a" opacity="0.75"/><rect x="12.26" y="34.20" width="0.93" height="0.9" fill="#5a5a5a" opacity="0.75"/><rect x="13.77" y="34.20" width="1.74" height="0.9" fill="#e87a86" opacity="0.45"/><rect x="16.08" y="34.20" width="3.37" height="0.9" fill="#6a6ac8" opacity="0.60"/><rect x="19.74" y="34.20" width="1.12" height="0.9" fill="#6a6ac8" opacity="0.60"/><rect x="21.14" y="34.20" width="1.12" height="0.9" fill="#6a6ac8" opacity="0.60"/><rect x="22.55" y="34.20" width="1.12" height="0.9" fill="#6a6ac8" opacity="0.60"/><rect x="23.95" y="34.20" width="2.55" height="0.9" fill="#6a6ac8" opacity="0.60"/><rect x="26.50" y="34.20" width="1.69" height="0.9" fill="#6a6a6a" opacity="0.50"/><rect x="28.75" y="34.20" width="3.37" height="0.9" fill="#e87a86" opacity="0.45"/><rect x="32.68" y="34.20" width="1.12" height="0.9" fill="#6a6a6a" opacity="0.50"/><rect x="34.37" y="34.20" width="2.25" height="0.9" fill="#e87a86" opacity="0.45"/><rect x="37.18" y="34.20" width="0.31" height="0.9" fill="#6a6a6a" opacity="0.50"/><rect x="37.49" y="34.20" width="1.12" height="0.9" fill="#6a6a6a" opacity="0.50"/><rect x="39.18" y="34.20" width="1.69" height="0.9" fill="#6a6a6a" opacity="0.50"/><rect x="41.43" y="34.20" width="0.69" height="0.9" fill="#b860c0" opacity="0.50"/><rect x="6.82" y="35.32" width="2.25" height="0.9" fill="#5a5a5a" opacity="0.75"/><rect x="9.35" y="35.32" width="0.36" height="0.9" fill="#5a5a5a" opacity="0.75"/><rect x="10.30" y="35.32" width="2.25" height="0.9" fill="#5a5a5a" opacity="0.75"/><rect x="12.83" y="35.32" width="0.36" height="0.9" fill="#5a5a5a" opacity="0.75"/><rect x="13.77" y="35.32" width="1.12" height="0.9" fill="#e87a86" opacity="0.45"/><rect x="16.08" y="35.32" width="1.12" height="0.9" fill="#6a6ac8" opacity="0.60"/><rect x="17.49" y="35.32" width="2.81" height="0.9" fill="#6a6ac8" opacity="0.60"/><rect x="20.58" y="35.32" width="2.81" height="0.9" fill="#6a6ac8" opacity="0.60"/><rect x="23.67" y="35.32" width="2.81" height="0.9" fill="#6a6ac8" opacity="0.60"/><rect x="26.50" y="35.32" width="2.81" height="0.9" fill="#6a6a6a" opacity="0.50"/><rect x="29.87" y="35.32" width="2.25" height="0.9" fill="#e87a86" opacity="0.45"/><rect x="32.68" y="35.32" width="1.12" height="0.9" fill="#6a6a6a" opacity="0.50"/><rect x="34.37" y="35.32" width="1.69" height="0.9" fill="#e87a86" opacity="0.45"/><rect x="36.62" y="35.32" width="0.88" height="0.9" fill="#6a6a6a" opacity="0.50"/><rect x="37.49" y="35.32" width="4.50" height="0.9" fill="#b860c0" opacity="0.50"/><rect x="42.55" y="35.32" width="1.31" height="0.9" fill="#b860c0" opacity="0.50"/><rect x="6.82" y="36.44" width="2.81" height="0.9" fill="#5a5a5a" opacity="0.75"/><rect x="10.30" y="36.44" width="2.89" height="0.9" fill="#5a5a5a" opacity="0.75"/><rect x="13.77" y="36.44" width="1.69" height="0.9" fill="#e87a86" opacity="0.45"/><rect x="16.08" y="36.44" width="3.37" height="0.9" fill="#6a6ac8" opacity="0.60"/><rect x="19.74" y="36.44" width="1.12" height="0.9" fill="#6a6ac8" opacity="0.60"/><rect x="21.14" y="36.44" width="1.69" height="0.9" fill="#6a6ac8" opacity="0.60"/><rect x="23.11" y="36.44" width="3.37" height="0.9" fill="#6a6ac8" opacity="0.60"/><rect x="26.50" y="36.44" width="2.25" height="0.9" fill="#6a6a6a" opacity="0.50"/><rect x="29.31" y="36.44" width="1.69" height="0.9" fill="#e87a86" opacity="0.45"/><rect x="31.56" y="36.44" width="4.50" height="0.9" fill="#6a6a6a" opacity="0.50"/><rect x="36.62" y="36.44" width="0.88" height="0.9" fill="#e87a86" opacity="0.45"/><rect x="37.49" y="36.44" width="1.12" height="0.9" fill="#b860c0" opacity="0.50"/><rect x="39.18" y="36.44" width="4.50" height="0.9" fill="#6a6a6a" opacity="0.50"/><rect x="44.24" y="36.44" width="4.50" height="0.9" fill="#b860c0" opacity="0.50"/><rect x="49.30" y="36.44" width="3.37" height="0.9" fill="#b860c0" opacity="0.50"/><rect x="53.24" y="36.44" width="1.69" height="0.9" fill="#b860c0" opacity="0.50"/><rect x="55.48" y="36.44" width="1.69" height="0.9" fill="#b860c0" opacity="0.50"/><rect x="6.82" y="37.56" width="2.89" height="0.9" fill="#5a5a5a" opacity="0.75"/><rect x="10.30" y="37.56" width="1.69" height="0.9" fill="#5a5a5a" opacity="0.75"/><rect x="12.26" y="37.56" width="0.93" height="0.9" fill="#5a5a5a" opacity="0.75"/><rect x="13.77" y="37.56" width="1.69" height="0.9" fill="#e87a86" opacity="0.45"/><rect x="16.08" y="37.56" width="1.69" height="0.9" fill="#6a6ac8" opacity="0.60"/><rect x="18.05" y="37.56" width="2.81" height="0.9" fill="#6a6ac8" opacity="0.60"/><rect x="21.14" y="37.56" width="4.50" height="0.9" fill="#6a6ac8" opacity="0.60"/><rect x="25.92" y="37.56" width="0.58" height="0.9" fill="#6a6ac8" opacity="0.60"/><rect x="26.50" y="37.56" width="1.69" height="0.9" fill="#6a6a6a" opacity="0.50"/><rect x="28.75" y="37.56" width="3.37" height="0.9" fill="#e87a86" opacity="0.45"/><rect x="32.68" y="37.56" width="2.81" height="0.9" fill="#6a6a6a" opacity="0.50"/><rect x="36.06" y="37.56" width="1.44" height="0.9" fill="#e87a86" opacity="0.45"/><rect x="37.49" y="37.56" width="2.31" height="0.9" fill="#6a6a6a" opacity="0.50"/><rect x="6.82" y="38.68" width="1.12" height="0.9" fill="#5a5a5a" opacity="0.75"/><rect x="8.23" y="38.68" width="1.49" height="0.9" fill="#5a5a5a" opacity="0.75"/><rect x="10.30" y="38.68" width="2.81" height="0.9" fill="#5a5a5a" opacity="0.75"/><rect x="13.77" y="38.68" width="1.74" height="0.9" fill="#e87a86" opacity="0.45"/><rect x="16.08" y="38.68" width="1.69" height="0.9" fill="#6a6ac8" opacity="0.60"/><rect x="18.05" y="38.68" width="4.50" height="0.9" fill="#6a6ac8" opacity="0.60"/><rect x="22.83" y="38.68" width="3.37" height="0.9" fill="#6a6ac8" opacity="0.60"/><rect x="26.50" y="38.68" width="2.25" height="0.9" fill="#6a6a6a" opacity="0.50"/><rect x="29.31" y="38.68" width="2.81" height="0.9" fill="#e87a86" opacity="0.45"/><rect x="32.68" y="38.68" width="4.50" height="0.9" fill="#6a6a6a" opacity="0.50"/><rect x="37.49" y="38.68" width="2.25" height="0.9" fill="#b860c0" opacity="0.50"/><rect x="40.31" y="38.68" width="1.12" height="0.9" fill="#e87a86" opacity="0.45"/><rect x="41.99" y="38.68" width="1.12" height="0.9" fill="#e87a86" opacity="0.45"/><rect x="43.68" y="38.68" width="2.81" height="0.9" fill="#e87a86" opacity="0.45"/><rect x="47.05" y="38.68" width="2.25" height="0.9" fill="#e87a86" opacity="0.45"/><rect x="49.86" y="38.68" width="2.81" height="0.9" fill="#6a6a6a" opacity="0.50"/><rect x="53.24" y="38.68" width="0.46" height="0.9" fill="#b860c0" opacity="0.50"/><rect x="6.82" y="39.80" width="2.89" height="0.9" fill="#5a5a5a" opacity="0.75"/><rect x="10.30" y="39.80" width="1.12" height="0.9" fill="#5a5a5a" opacity="0.75"/><rect x="11.70" y="39.80" width="1.49" height="0.9" fill="#5a5a5a" opacity="0.75"/><rect x="13.77" y="39.80" width="1.12" height="0.9" fill="#e87a86" opacity="0.45"/><rect x="16.08" y="39.80" width="2.81" height="0.9" fill="#6a6ac8" opacity="0.60"/><rect x="19.17" y="39.80" width="4.50" height="0.9" fill="#6a6ac8" opacity="0.60"/><rect x="23.95" y="39.80" width="1.69" height="0.9" fill="#6a6ac8" opacity="0.60"/><rect x="25.92" y="39.80" width="0.58" height="0.9" fill="#6a6ac8" opacity="0.60"/><rect x="26.50" y="39.80" width="1.69" height="0.9" fill="#6a6a6a" opacity="0.50"/><rect x="28.75" y="39.80" width="2.81" height="0.9" fill="#e87a86" opacity="0.45"/><rect x="32.12" y="39.80" width="4.50" height="0.9" fill="#6a6a6a" opacity="0.50"/><rect x="37.18" y="39.80" width="0.31" height="0.9" fill="#e87a86" opacity="0.45"/><rect x="37.49" y="39.80" width="1.12" height="0.9" fill="#6a6a6a" opacity="0.50"/><rect x="39.18" y="39.80" width="1.79" height="0.9" fill="#6a6a6a" opacity="0.50"/><rect x="6.82" y="41.90" width="2.89" height="0.9" fill="#5a5a5a" opacity="0.75"/><rect x="10.30" y="41.90" width="1.12" height="0.9" fill="#5a5a5a" opacity="0.75"/><rect x="11.70" y="41.90" width="1.49" height="0.9" fill="#5a5a5a" opacity="0.75"/><rect x="13.77" y="41.90" width="1.69" height="0.9" fill="#e87a86" opacity="0.45"/><rect x="16.08" y="41.90" width="1.69" height="0.9" fill="#6a6ac8" opacity="0.60"/><rect x="18.05" y="41.90" width="1.69" height="0.9" fill="#6a6ac8" opacity="0.60"/><rect x="20.02" y="41.90" width="1.12" height="0.9" fill="#6a6ac8" opacity="0.60"/><rect x="21.42" y="41.90" width="1.69" height="0.9" fill="#6a6ac8" opacity="0.60"/><rect x="23.39" y="41.90" width="3.11" height="0.9" fill="#6a6ac8" opacity="0.60"/><rect x="26.50" y="41.90" width="2.81" height="0.9" fill="#6a6a6a" opacity="0.50"/><rect x="29.87" y="41.90" width="4.50" height="0.9" fill="#e87a86" opacity="0.45"/><rect x="34.93" y="41.90" width="1.69" height="0.9" fill="#6a6a6a" opacity="0.50"/><rect x="37.18" y="41.90" width="0.31" height="0.9" fill="#e87a86" opacity="0.45"/><rect x="37.49" y="41.90" width="3.37" height="0.9" fill="#6a6a6a" opacity="0.50"/><rect x="41.43" y="41.90" width="0.69" height="0.9" fill="#b860c0" opacity="0.50"/><rect x="6.82" y="43.02" width="1.69" height="0.9" fill="#5a5a5a" opacity="0.75"/><rect x="8.79" y="43.02" width="0.93" height="0.9" fill="#5a5a5a" opacity="0.75"/><rect x="10.30" y="43.02" width="2.89" height="0.9" fill="#5a5a5a" opacity="0.75"/><rect x="13.77" y="43.02" width="1.69" height="0.9" fill="#e87a86" opacity="0.45"/><rect x="16.08" y="43.02" width="1.12" height="0.9" fill="#6a6ac8" opacity="0.60"/><rect x="17.49" y="43.02" width="1.12" height="0.9" fill="#6a6ac8" opacity="0.60"/><rect x="18.89" y="43.02" width="4.50" height="0.9" fill="#6a6ac8" opacity="0.60"/><rect x="23.67" y="43.02" width="2.83" height="0.9" fill="#6a6ac8" opacity="0.60"/><rect x="26.50" y="43.02" width="1.12" height="0.9" fill="#6a6a6a" opacity="0.50"/><rect x="28.19" y="43.02" width="3.37" height="0.9" fill="#e87a86" opacity="0.45"/><rect x="32.12" y="43.02" width="4.50" height="0.9" fill="#6a6a6a" opacity="0.50"/><rect x="37.18" y="43.02" width="0.31" height="0.9" fill="#e87a86" opacity="0.45"/><rect x="37.49" y="43.02" width="2.81" height="0.9" fill="#e87a86" opacity="0.45"/><rect x="40.87" y="43.02" width="1.69" height="0.9" fill="#6a6a6a" opacity="0.50"/><rect x="43.12" y="43.02" width="0.74" height="0.9" fill="#e87a86" opacity="0.45"/><rect x="6.82" y="44.14" width="2.25" height="0.9" fill="#5a5a5a" opacity="0.75"/><rect x="9.35" y="44.14" width="0.36" height="0.9" fill="#5a5a5a" opacity="0.75"/><rect x="10.30" y="44.14" width="1.69" height="0.9" fill="#5a5a5a" opacity="0.75"/><rect x="12.26" y="44.14" width="0.93" height="0.9" fill="#5a5a5a" opacity="0.75"/><rect x="13.77" y="44.14" width="1.74" height="0.9" fill="#e87a86" opacity="0.45"/><rect x="16.08" y="44.14" width="2.25" height="0.9" fill="#6a6ac8" opacity="0.60"/><rect x="18.61" y="44.14" width="3.37" height="0.9" fill="#6a6ac8" opacity="0.60"/><rect x="22.27" y="44.14" width="2.81" height="0.9" fill="#6a6ac8" opacity="0.60"/><rect x="25.36" y="44.14" width="1.14" height="0.9" fill="#6a6ac8" opacity="0.60"/><rect x="26.50" y="44.14" width="1.12" height="0.9" fill="#6a6a6a" opacity="0.50"/><rect x="28.19" y="44.14" width="4.50" height="0.9" fill="#e87a86" opacity="0.45"/><rect x="33.25" y="44.14" width="2.25" height="0.9" fill="#6a6a6a" opacity="0.50"/><rect x="36.06" y="44.14" width="1.44" height="0.9" fill="#e87a86" opacity="0.45"/><rect x="37.49" y="44.14" width="4.50" height="0.9" fill="#6a6a6a" opacity="0.50"/><rect x="42.55" y="44.14" width="3.37" height="0.9" fill="#e87a86" opacity="0.45"/><rect x="46.49" y="44.14" width="3.37" height="0.9" fill="#e87a86" opacity="0.45"/><rect x="50.43" y="44.14" width="3.37" height="0.9" fill="#6a6a6a" opacity="0.50"/><rect x="54.36" y="44.14" width="2.81" height="0.9" fill="#e87a86" opacity="0.45"/><rect x="6.82" y="45.26" width="2.89" height="0.9" fill="#5a5a5a" opacity="0.75"/><rect x="10.30" y="45.26" width="1.12" height="0.9" fill="#5a5a5a" opacity="0.75"/><rect x="11.70" y="45.26" width="1.49" height="0.9" fill="#5a5a5a" opacity="0.75"/><rect x="13.77" y="45.26" width="1.69" height="0.9" fill="#e87a86" opacity="0.45"/><rect x="16.08" y="45.26" width="1.69" height="0.9" fill="#6a6ac8" opacity="0.60"/><rect x="18.05" y="45.26" width="2.81" height="0.9" fill="#6a6ac8" opacity="0.60"/><rect x="21.14" y="45.26" width="3.37" height="0.9" fill="#6a6ac8" opacity="0.60"/><rect x="24.80" y="45.26" width="1.70" height="0.9" fill="#6a6ac8" opacity="0.60"/><rect x="26.50" y="45.26" width="1.12" height="0.9" fill="#6a6a6a" opacity="0.50"/><rect x="28.19" y="45.26" width="3.37" height="0.9" fill="#e87a86" opacity="0.45"/><rect x="32.12" y="45.26" width="1.12" height="0.9" fill="#6a6a6a" opacity="0.50"/><rect x="33.81" y="45.26" width="2.25" height="0.9" fill="#e87a86" opacity="0.45"/><rect x="36.62" y="45.26" width="0.88" height="0.9" fill="#6a6a6a" opacity="0.50"/><rect x="37.49" y="45.26" width="2.31" height="0.9" fill="#6a6a6a" opacity="0.50"/><rect x="6.82" y="46.38" width="1.12" height="0.9" fill="#5a5a5a" opacity="0.75"/><rect x="8.23" y="46.38" width="1.49" height="0.9" fill="#5a5a5a" opacity="0.75"/><rect x="10.30" y="46.38" width="1.12" height="0.9" fill="#5a5a5a" opacity="0.75"/><rect x="11.70" y="46.38" width="1.49" height="0.9" fill="#5a5a5a" opacity="0.75"/><rect x="13.77" y="46.38" width="1.69" height="0.9" fill="#e87a86" opacity="0.45"/><rect x="16.08" y="46.38" width="2.25" height="0.9" fill="#6a6ac8" opacity="0.60"/><rect x="18.61" y="46.38" width="1.12" height="0.9" fill="#6a6ac8" opacity="0.60"/><rect x="20.02" y="46.38" width="1.12" height="0.9" fill="#6a6ac8" opacity="0.60"/><rect x="21.42" y="46.38" width="3.37" height="0.9" fill="#6a6ac8" opacity="0.60"/><rect x="25.08" y="46.38" width="1.42" height="0.9" fill="#6a6ac8" opacity="0.60"/><rect x="26.50" y="46.38" width="3.37" height="0.9" fill="#6a6a6a" opacity="0.50"/><rect x="30.43" y="46.38" width="1.12" height="0.9" fill="#e87a86" opacity="0.45"/><rect x="32.12" y="46.38" width="1.12" height="0.9" fill="#6a6a6a" opacity="0.50"/><rect x="33.81" y="46.38" width="2.81" height="0.9" fill="#e87a86" opacity="0.45"/><rect x="37.18" y="46.38" width="0.31" height="0.9" fill="#6a6a6a" opacity="0.50"/><rect x="37.49" y="46.38" width="3.37" height="0.9" fill="#e87a86" opacity="0.45"/><rect x="6.82" y="47.50" width="2.89" height="0.9" fill="#5a5a5a" opacity="0.75"/><rect x="10.30" y="47.50" width="2.25" height="0.9" fill="#5a5a5a" opacity="0.75"/><rect x="12.83" y="47.50" width="0.36" height="0.9" fill="#5a5a5a" opacity="0.75"/><rect x="13.77" y="47.50" width="1.74" height="0.9" fill="#e87a86" opacity="0.45"/><rect x="16.08" y="47.50" width="3.37" height="0.9" fill="#6a6ac8" opacity="0.60"/><rect x="19.74" y="47.50" width="2.81" height="0.9" fill="#6a6ac8" opacity="0.60"/><rect x="22.83" y="47.50" width="3.37" height="0.9" fill="#6a6ac8" opacity="0.60"/><rect x="26.50" y="47.50" width="1.69" height="0.9" fill="#6a6a6a" opacity="0.50"/><rect x="28.75" y="47.50" width="4.50" height="0.9" fill="#e87a86" opacity="0.45"/><rect x="33.81" y="47.50" width="3.37" height="0.9" fill="#6a6a6a" opacity="0.50"/><rect x="37.49" y="47.50" width="2.25" height="0.9" fill="#e87a86" opacity="0.45"/><rect x="40.31" y="47.50" width="2.81" height="0.9" fill="#e87a86" opacity="0.45"/><rect x="43.68" y="47.50" width="2.81" height="0.9" fill="#6a6a6a" opacity="0.50"/><rect x="47.05" y="47.50" width="2.81" height="0.9" fill="#6a6a6a" opacity="0.50"/><rect x="50.43" y="47.50" width="2.25" height="0.9" fill="#6a6a6a" opacity="0.50"/><rect x="53.24" y="47.50" width="0.46" height="0.9" fill="#e87a86" opacity="0.45"/><rect x="6.82" y="48.62" width="2.81" height="0.9" fill="#5a5a5a" opacity="0.75"/><rect x="10.30" y="48.62" width="1.12" height="0.9" fill="#5a5a5a" opacity="0.75"/><rect x="11.70" y="48.62" width="1.49" height="0.9" fill="#5a5a5a" opacity="0.75"/><rect x="13.77" y="48.62" width="1.74" height="0.9" fill="#e87a86" opacity="0.45"/><rect x="16.08" y="48.62" width="2.25" height="0.9" fill="#6a6ac8" opacity="0.60"/><rect x="18.61" y="48.62" width="1.12" height="0.9" fill="#6a6ac8" opacity="0.60"/><rect x="20.02" y="48.62" width="1.69" height="0.9" fill="#6a6ac8" opacity="0.60"/><rect x="21.99" y="48.62" width="4.50" height="0.9" fill="#6a6ac8" opacity="0.60"/><rect x="26.50" y="48.62" width="4.50" height="0.9" fill="#6a6a6a" opacity="0.50"/><rect x="31.56" y="48.62" width="4.50" height="0.9" fill="#e87a86" opacity="0.45"/><rect x="36.62" y="48.62" width="0.88" height="0.9" fill="#6a6a6a" opacity="0.50"/><rect x="37.49" y="48.62" width="1.69" height="0.9" fill="#b860c0" opacity="0.50"/><rect x="39.74" y="48.62" width="1.69" height="0.9" fill="#6a6a6a" opacity="0.50"/><rect x="41.99" y="48.62" width="1.69" height="0.9" fill="#6a6a6a" opacity="0.50"/><rect x="44.24" y="48.62" width="2.81" height="0.9" fill="#6a6a6a" opacity="0.50"/><rect x="47.61" y="48.62" width="1.69" height="0.9" fill="#e87a86" opacity="0.45"/><rect x="49.86" y="48.62" width="1.69" height="0.9" fill="#6a6a6a" opacity="0.50"/><rect x="52.11" y="48.62" width="3.37" height="0.9" fill="#6a6a6a" opacity="0.50"/><rect x="56.05" y="48.62" width="1.70" height="0.9" fill="#6a6a6a" opacity="0.50"/><rect x="6.82" y="49.74" width="1.69" height="0.9" fill="#5a5a5a" opacity="0.75"/><rect x="8.79" y="49.74" width="0.93" height="0.9" fill="#5a5a5a" opacity="0.75"/><rect x="10.30" y="49.74" width="2.25" height="0.9" fill="#5a5a5a" opacity="0.75"/><rect x="12.83" y="49.74" width="0.36" height="0.9" fill="#5a5a5a" opacity="0.75"/><rect x="13.77" y="49.74" width="1.74" height="0.9" fill="#e87a86" opacity="0.45"/><rect x="16.08" y="49.74" width="2.25" height="0.9" fill="#6a6ac8" opacity="0.60"/><rect x="18.61" y="49.74" width="1.12" height="0.9" fill="#6a6ac8" opacity="0.60"/><rect x="20.02" y="49.74" width="2.25" height="0.9" fill="#6a6ac8" opacity="0.60"/><rect x="22.55" y="49.74" width="3.37" height="0.9" fill="#6a6ac8" opacity="0.60"/><rect x="26.50" y="49.74" width="2.81" height="0.9" fill="#6a6a6a" opacity="0.50"/><rect x="29.87" y="49.74" width="2.81" height="0.9" fill="#e87a86" opacity="0.45"/><rect x="33.25" y="49.74" width="4.25" height="0.9" fill="#6a6a6a" opacity="0.50"/><rect x="37.49" y="49.74" width="1.12" height="0.9" fill="#6a6a6a" opacity="0.50"/><rect x="39.18" y="49.74" width="1.79" height="0.9" fill="#b860c0" opacity="0.50"/><rect x="12.03" y="90.70" width="3.37" height="0.9" fill="#6a6a6a" opacity="0.50"/><rect x="15.97" y="90.70" width="0.69" height="0.9" fill="#6a6a6a" opacity="0.50"/><rect x="16.66" y="90.70" width="1.12" height="0.9" fill="#e87a86" opacity="0.45"/><rect x="12.03" y="92.38" width="1.69" height="0.9" fill="#6a6a6a" opacity="0.50"/><rect x="11.45" y="94.62" width="1.12" height="0.9" fill="#5a5ab8" opacity="0.50"/><rect x="13.14" y="94.62" width="1.12" height="0.9" fill="#6a6a6a" opacity="0.50"/><rect x="14.83" y="94.62" width="2.25" height="0.9" fill="#5a5ab8" opacity="0.50"/><rect x="17.64" y="94.62" width="2.25" height="0.9" fill="#6a6a6a" opacity="0.50"/><rect x="20.13" y="94.62" width="1.12" height="0.9" fill="#e87a86" opacity="0.45"/><rect x="21.82" y="94.62" width="0.63" height="0.9" fill="#e87a86" opacity="0.45"/><rect x="13.19" y="95.74" width="2.25" height="0.9" fill="#6a6a6a" opacity="0.50"/><rect x="16.00" y="95.74" width="1.69" height="0.9" fill="#6a6a6a" opacity="0.50"/><rect x="17.82" y="95.74" width="2.81" height="0.9" fill="#e87a86" opacity="0.45"/><rect x="13.19" y="96.86" width="4.50" height="0.9" fill="#e87a86" opacity="0.45"/><rect x="18.25" y="96.86" width="2.81" height="0.9" fill="#5a5ab8" opacity="0.50"/><rect x="21.62" y="96.86" width="3.37" height="0.9" fill="#6a6a6a" opacity="0.50"/><rect x="25.56" y="96.86" width="4.50" height="0.9" fill="#e87a86" opacity="0.45"/><rect x="30.62" y="96.86" width="1.12" height="0.9" fill="#e87a86" opacity="0.45"/><rect x="32.30" y="96.86" width="1.12" height="0.9" fill="#5a5ab8" opacity="0.50"/><rect x="33.99" y="96.86" width="2.81" height="0.9" fill="#6a6a6a" opacity="0.50"/><rect x="37.36" y="96.86" width="2.25" height="0.9" fill="#6a6a6a" opacity="0.50"/><rect x="40.97" y="96.86" width="4.50" height="0.9" fill="#5a9a9a" opacity="0.42"/><rect x="46.03" y="96.86" width="1.12" height="0.9" fill="#5a9a9a" opacity="0.42"/><rect x="47.71" y="96.86" width="2.25" height="0.9" fill="#5a9a9a" opacity="0.42"/><rect x="50.52" y="96.86" width="1.12" height="0.9" fill="#5a9a9a" opacity="0.42"/><rect x="52.21" y="96.86" width="3.37" height="0.9" fill="#5a9a9a" opacity="0.42"/><rect x="56.15" y="96.86" width="1.69" height="0.9" fill="#5a9a9a" opacity="0.42"/><rect x="58.39" y="96.86" width="1.12" height="0.9" fill="#5a9a9a" opacity="0.42"/><rect x="60.08" y="96.86" width="2.25" height="0.9" fill="#5a9a9a" opacity="0.42"/><rect x="62.89" y="96.86" width="1.12" height="0.9" fill="#5a9a9a" opacity="0.42"/><rect x="64.58" y="96.86" width="1.85" height="0.9" fill="#5a9a9a" opacity="0.42"/><rect x="13.19" y="98.54" width="1.12" height="0.9" fill="#e87a86" opacity="0.45"/><rect x="14.88" y="98.54" width="3.37" height="0.9" fill="#6a6a6a" opacity="0.50"/><rect x="18.81" y="98.54" width="2.25" height="0.9" fill="#5a5ab8" opacity="0.50"/><rect x="21.62" y="98.54" width="1.12" height="0.9" fill="#5a5ab8" opacity="0.50"/><rect x="23.31" y="98.54" width="1.12" height="0.9" fill="#5a5ab8" opacity="0.50"/><rect x="25.00" y="98.54" width="2.25" height="0.9" fill="#6a6a6a" opacity="0.50"/><rect x="27.81" y="98.54" width="1.69" height="0.9" fill="#5a5ab8" opacity="0.50"/><rect x="30.05" y="98.54" width="2.25" height="0.9" fill="#e87a86" opacity="0.45"/><rect x="32.87" y="98.54" width="3.37" height="0.9" fill="#5a5ab8" opacity="0.50"/><rect x="36.80" y="98.54" width="0.69" height="0.9" fill="#6a6a6a" opacity="0.50"/><rect x="38.65" y="98.54" width="3.37" height="0.9" fill="#6a6a6a" opacity="0.50"/><rect x="42.59" y="98.54" width="4.50" height="0.9" fill="#e87a86" opacity="0.45"/><rect x="47.65" y="98.54" width="1.69" height="0.9" fill="#6a6a6a" opacity="0.50"/><rect x="49.90" y="98.54" width="2.25" height="0.9" fill="#e87a86" opacity="0.45"/><rect x="52.71" y="98.54" width="2.25" height="0.9" fill="#6a6a6a" opacity="0.50"/><rect x="55.52" y="98.54" width="0.50" height="0.9" fill="#e87a86" opacity="0.45"/><rect x="13.19" y="99.77" width="2.25" height="0.9" fill="#6a6a6a" opacity="0.50"/><rect x="16.00" y="99.77" width="1.12" height="0.9" fill="#6a6a6a" opacity="0.50"/><rect x="17.69" y="99.77" width="4.50" height="0.9" fill="#5a5ab8" opacity="0.50"/><rect x="22.75" y="99.77" width="3.37" height="0.9" fill="#6a6a6a" opacity="0.50"/><rect x="26.68" y="99.77" width="1.69" height="0.9" fill="#6a6a6a" opacity="0.50"/><rect x="28.93" y="99.77" width="1.12" height="0.9" fill="#6a6a6a" opacity="0.50"/><rect x="30.62" y="99.77" width="4.50" height="0.9" fill="#6a6a6a" opacity="0.50"/><rect x="35.68" y="99.77" width="1.82" height="0.9" fill="#6a6a6a" opacity="0.50"/><rect x="13.19" y="101.23" width="3.37" height="0.9" fill="#5a5ab8" opacity="0.50"/><rect x="17.12" y="101.23" width="2.25" height="0.9" fill="#b860c0" opacity="0.50"/><rect x="19.94" y="101.23" width="4.50" height="0.9" fill="#5a5ab8" opacity="0.50"/><rect x="25.00" y="101.23" width="1.69" height="0.9" fill="#b860c0" opacity="0.50"/><rect x="27.24" y="101.23" width="1.69" height="0.9" fill="#5a5ab8" opacity="0.50"/><rect x="29.49" y="101.23" width="2.25" height="0.9" fill="#b860c0" opacity="0.50"/><rect x="32.30" y="101.23" width="1.69" height="0.9" fill="#5a5ab8" opacity="0.50"/><rect x="11.45" y="104.36" width="4.50" height="0.9" fill="#6a6a6a" opacity="0.50"/><rect x="16.51" y="104.36" width="4.50" height="0.9" fill="#5a5ab8" opacity="0.50"/><rect x="21.57" y="104.36" width="2.61" height="0.9" fill="#6a6a6a" opacity="0.50"/><rect x="25.34" y="104.36" width="1.69" height="0.9" fill="#5a9a9a" opacity="0.42"/><rect x="27.59" y="104.36" width="2.81" height="0.9" fill="#5a9a9a" opacity="0.42"/><rect x="30.96" y="104.36" width="2.25" height="0.9" fill="#5a9a9a" opacity="0.42"/><rect x="33.77" y="104.36" width="1.12" height="0.9" fill="#5a9a9a" opacity="0.42"/><rect x="35.46" y="104.36" width="1.69" height="0.9" fill="#5a9a9a" opacity="0.42"/><rect x="37.71" y="104.36" width="1.12" height="0.9" fill="#5a9a9a" opacity="0.42"/><rect x="39.40" y="104.36" width="1.12" height="0.9" fill="#5a9a9a" opacity="0.42"/><rect x="41.08" y="104.36" width="4.50" height="0.9" fill="#5a9a9a" opacity="0.42"/><rect x="46.14" y="104.36" width="4.50" height="0.9" fill="#5a9a9a" opacity="0.42"/><rect x="51.20" y="104.36" width="2.25" height="0.9" fill="#5a9a9a" opacity="0.42"/><rect x="54.01" y="104.36" width="2.81" height="0.9" fill="#5a9a9a" opacity="0.42"/><rect x="57.39" y="104.36" width="1.69" height="0.9" fill="#5a9a9a" opacity="0.42"/><rect x="59.64" y="104.36" width="1.01" height="0.9" fill="#5a9a9a" opacity="0.42"/><rect x="11.45" y="105.82" width="1.12" height="0.9" fill="#e87a86" opacity="0.45"/><rect x="13.19" y="107.72" width="4.50" height="0.9" fill="#5a5ab8" opacity="0.50"/><rect x="18.25" y="107.72" width="2.81" height="0.9" fill="#b860c0" opacity="0.50"/><rect x="21.62" y="107.72" width="3.37" height="0.9" fill="#5a5ab8" opacity="0.50"/><rect x="25.56" y="107.72" width="1.52" height="0.9" fill="#b860c0" opacity="0.50"/><rect x="28.81" y="107.72" width="2.25" height="0.9" fill="#5a9a9a" opacity="0.42"/><rect x="31.62" y="107.72" width="3.37" height="0.9" fill="#5a9a9a" opacity="0.42"/><rect x="35.56" y="107.72" width="1.69" height="0.9" fill="#5a9a9a" opacity="0.42"/><rect x="37.81" y="107.72" width="4.50" height="0.9" fill="#5a9a9a" opacity="0.42"/><rect x="42.87" y="107.72" width="2.25" height="0.9" fill="#5a9a9a" opacity="0.42"/><rect x="45.68" y="107.72" width="1.12" height="0.9" fill="#5a9a9a" opacity="0.42"/><rect x="47.37" y="107.72" width="2.81" height="0.9" fill="#5a9a9a" opacity="0.42"/><rect x="50.74" y="107.72" width="1.69" height="0.9" fill="#5a9a9a" opacity="0.42"/><rect x="52.99" y="107.72" width="1.69" height="0.9" fill="#5a9a9a" opacity="0.42"/><rect x="55.24" y="107.72" width="2.25" height="0.9" fill="#5a9a9a" opacity="0.42"/><rect x="58.05" y="107.72" width="2.81" height="0.9" fill="#5a9a9a" opacity="0.42"/><rect x="61.42" y="107.72" width="0.96" height="0.9" fill="#5a9a9a" opacity="0.42"/><rect x="11.45" y="109.40" width="2.25" height="0.9" fill="#5a9a9a" opacity="0.42"/><rect x="14.26" y="109.40" width="2.25" height="0.9" fill="#5a9a9a" opacity="0.42"/><rect x="17.07" y="109.40" width="2.25" height="0.9" fill="#5a9a9a" opacity="0.42"/><rect x="19.89" y="109.40" width="3.37" height="0.9" fill="#5a9a9a" opacity="0.42"/><rect x="23.82" y="109.40" width="2.25" height="0.9" fill="#5a9a9a" opacity="0.42"/><rect x="26.63" y="109.40" width="1.69" height="0.9" fill="#5a9a9a" opacity="0.42"/><rect x="28.88" y="109.40" width="1.12" height="0.9" fill="#5a9a9a" opacity="0.42"/><rect x="30.57" y="109.40" width="2.25" height="0.9" fill="#5a9a9a" opacity="0.42"/><rect x="33.38" y="109.40" width="1.69" height="0.9" fill="#5a9a9a" opacity="0.42"/><rect x="35.63" y="109.40" width="1.87" height="0.9" fill="#5a9a9a" opacity="0.42"/><rect x="11.45" y="110.86" width="1.69" height="0.9" fill="#6a6a6a" opacity="0.50"/><rect x="13.70" y="110.86" width="1.12" height="0.9" fill="#6a6a6a" opacity="0.50"/><rect x="15.39" y="110.86" width="2.25" height="0.9" fill="#6a6a6a" opacity="0.50"/><rect x="18.20" y="110.86" width="0.78" height="0.9" fill="#6a6a6a" opacity="0.50"/><rect x="11.45" y="112.32" width="1.12" height="0.9" fill="#6a6a6a" opacity="0.50"/><rect x="13.14" y="112.32" width="2.25" height="0.9" fill="#5a5ab8" opacity="0.50"/><rect x="15.95" y="112.32" width="1.69" height="0.9" fill="#6a6a6a" opacity="0.50"/><rect x="18.20" y="112.32" width="1.12" height="0.9" fill="#e87a86" opacity="0.45"/><rect x="19.89" y="112.32" width="1.12" height="0.9" fill="#5a5ab8" opacity="0.50"/><rect x="21.57" y="112.32" width="2.81" height="0.9" fill="#6a6a6a" opacity="0.50"/><rect x="24.95" y="112.32" width="2.81" height="0.9" fill="#6a6a6a" opacity="0.50"/><rect x="28.32" y="112.32" width="2.25" height="0.9" fill="#e87a86" opacity="0.45"/><rect x="31.13" y="112.32" width="4.50" height="0.9" fill="#5a5ab8" opacity="0.50"/><rect x="36.19" y="112.32" width="1.12" height="0.9" fill="#5a5ab8" opacity="0.50"/><rect x="37.88" y="112.32" width="4.50" height="0.9" fill="#6a6a6a" opacity="0.50"/><rect x="42.94" y="112.32" width="2.08" height="0.9" fill="#6a6a6a" opacity="0.50"/><rect x="11.45" y="114.33" width="1.69" height="0.9" fill="#5a5ab8" opacity="0.50"/><rect x="13.70" y="114.33" width="0.64" height="0.9" fill="#5a5ab8" opacity="0.50"/><rect x="9.14" y="116.57" width="4.50" height="0.9" fill="#5a5ab8" opacity="0.50"/><rect x="14.20" y="116.57" width="3.37" height="0.9" fill="#6a6a6a" opacity="0.50"/><rect x="18.13" y="116.57" width="3.74" height="0.9" fill="#5a5ab8" opacity="0.50"/><rect x="9.14" y="117.80" width="1.16" height="0.9" fill="#e87a86" opacity="0.45"/><rect x="11.45" y="119.04" width="1.12" height="0.9" fill="#5a5ab8" opacity="0.50"/><rect x="13.14" y="119.04" width="4.50" height="0.9" fill="#6a6a6a" opacity="0.50"/><rect x="18.20" y="119.04" width="3.37" height="0.9" fill="#5a5ab8" opacity="0.50"/><rect x="22.13" y="119.04" width="3.79" height="0.9" fill="#6a6a6a" opacity="0.50"/><rect x="26.50" y="119.04" width="2.81" height="0.9" fill="#5a9a9a" opacity="0.42"/><rect x="29.87" y="119.04" width="4.50" height="0.9" fill="#5a9a9a" opacity="0.42"/><rect x="34.93" y="119.04" width="4.50" height="0.9" fill="#5a9a9a" opacity="0.42"/><rect x="39.99" y="119.04" width="3.37" height="0.9" fill="#5a9a9a" opacity="0.42"/><rect x="43.93" y="119.04" width="1.69" height="0.9" fill="#5a9a9a" opacity="0.42"/><rect x="46.18" y="119.04" width="3.37" height="0.9" fill="#5a9a9a" opacity="0.42"/><rect x="50.11" y="119.04" width="3.37" height="0.9" fill="#5a9a9a" opacity="0.42"/><rect x="11.45" y="120.38" width="3.37" height="0.9" fill="#6a6a6a" opacity="0.50"/><rect x="15.39" y="120.38" width="1.12" height="0.9" fill="#5a5ab8" opacity="0.50"/><rect x="17.07" y="120.38" width="4.50" height="0.9" fill="#6a6a6a" opacity="0.50"/><rect x="22.13" y="120.38" width="0.31" height="0.9" fill="#5a5ab8" opacity="0.50"/><rect x="11.45" y="121.72" width="1.16" height="0.9" fill="#e87a86" opacity="0.45"/><rect x="13.19" y="123.18" width="4.50" height="0.9" fill="#6a6a6a" opacity="0.50"/><rect x="18.25" y="123.18" width="4.50" height="0.9" fill="#5a5ab8" opacity="0.50"/><rect x="23.31" y="123.18" width="4.50" height="0.9" fill="#6a6a6a" opacity="0.50"/><rect x="28.37" y="123.18" width="1.69" height="0.9" fill="#5a5ab8" opacity="0.50"/><rect x="30.62" y="123.18" width="1.12" height="0.9" fill="#6a6a6a" opacity="0.50"/><rect x="32.30" y="123.18" width="1.12" height="0.9" fill="#5a5ab8" opacity="0.50"/><rect x="33.99" y="123.18" width="1.12" height="0.9" fill="#6a6a6a" opacity="0.50"/><rect x="35.68" y="123.18" width="0.66" height="0.9" fill="#5a5ab8" opacity="0.50"/><rect x="13.19" y="124.41" width="4.50" height="0.9" fill="#5a5ab8" opacity="0.50"/><rect x="18.25" y="124.41" width="1.12" height="0.9" fill="#6a6a6a" opacity="0.50"/><rect x="19.94" y="124.41" width="2.81" height="0.9" fill="#6a6a6a" opacity="0.50"/><rect x="23.31" y="124.41" width="4.50" height="0.9" fill="#6a6a6a" opacity="0.50"/><rect x="28.37" y="124.41" width="4.50" height="0.9" fill="#e87a86" opacity="0.45"/><rect x="33.43" y="124.41" width="2.81" height="0.9" fill="#5a5ab8" opacity="0.50"/><rect x="36.80" y="124.41" width="1.12" height="0.9" fill="#6a6a6a" opacity="0.50"/><rect x="38.49" y="124.41" width="1.12" height="0.9" fill="#6a6a6a" opacity="0.50"/><rect x="40.17" y="124.41" width="4.50" height="0.9" fill="#6a6a6a" opacity="0.50"/><rect x="45.23" y="124.41" width="4.50" height="0.9" fill="#6a6a6a" opacity="0.50"/><rect x="50.29" y="124.41" width="2.25" height="0.9" fill="#6a6a6a" opacity="0.50"/><rect x="53.11" y="124.41" width="1.75" height="0.9" fill="#e87a86" opacity="0.45"/><rect x="11.45" y="126.32" width="4.50" height="0.9" fill="#5a9a9a" opacity="0.42"/><rect x="16.51" y="126.32" width="1.69" height="0.9" fill="#5a9a9a" opacity="0.42"/><rect x="18.76" y="126.32" width="1.69" height="0.9" fill="#5a9a9a" opacity="0.42"/><rect x="21.01" y="126.32" width="4.50" height="0.9" fill="#5a9a9a" opacity="0.42"/><rect x="26.07" y="126.32" width="4.50" height="0.9" fill="#5a9a9a" opacity="0.42"/><rect x="31.13" y="126.32" width="2.81" height="0.9" fill="#5a9a9a" opacity="0.42"/><rect x="11.45" y="127.32" width="2.81" height="0.9" fill="#6a6a6a" opacity="0.50"/><rect x="14.83" y="127.32" width="1.12" height="0.9" fill="#6a6a6a" opacity="0.50"/><rect x="16.51" y="127.32" width="4.50" height="0.9" fill="#e87a86" opacity="0.45"/><rect x="21.57" y="127.32" width="1.12" height="0.9" fill="#5a5ab8" opacity="0.50"/><rect x="23.26" y="127.32" width="1.12" height="0.9" fill="#5a5ab8" opacity="0.50"/><rect x="24.95" y="127.32" width="2.25" height="0.9" fill="#e87a86" opacity="0.45"/><rect x="27.76" y="127.32" width="4.50" height="0.9" fill="#e87a86" opacity="0.45"/><rect x="32.82" y="127.32" width="3.37" height="0.9" fill="#5a5ab8" opacity="0.50"/><rect x="36.75" y="127.32" width="1.12" height="0.9" fill="#6a6a6a" opacity="0.50"/><rect x="38.44" y="127.32" width="1.12" height="0.9" fill="#6a6a6a" opacity="0.50"/><rect x="40.12" y="127.32" width="2.25" height="0.9" fill="#6a6a6a" opacity="0.50"/><rect x="42.94" y="127.32" width="2.08" height="0.9" fill="#5a5ab8" opacity="0.50"/><rect x="11.45" y="128.89" width="2.89" height="0.9" fill="#5a5ab8" opacity="0.50"/><rect x="9.14" y="130.68" width="1.16" height="0.9" fill="#e87a86" opacity="0.45"/><rect x="9.14" y="133.60" width="2.25" height="0.9" fill="#5a9a9a" opacity="0.42"/><rect x="11.95" y="133.60" width="4.50" height="0.9" fill="#5a9a9a" opacity="0.42"/><rect x="17.01" y="133.60" width="3.37" height="0.9" fill="#5a9a9a" opacity="0.42"/><rect x="20.94" y="133.60" width="2.25" height="0.9" fill="#5a9a9a" opacity="0.42"/><rect x="23.76" y="133.60" width="2.81" height="0.9" fill="#5a9a9a" opacity="0.42"/><rect x="27.13" y="133.60" width="2.81" height="0.9" fill="#5a9a9a" opacity="0.42"/><rect x="30.50" y="133.60" width="2.81" height="0.9" fill="#5a9a9a" opacity="0.42"/><rect x="33.87" y="133.60" width="1.12" height="0.9" fill="#5a9a9a" opacity="0.42"/><rect x="9.14" y="135.39" width="1.16" height="0.9" fill="#e87a86" opacity="0.45"/><rect x="11.45" y="136.73" width="1.69" height="0.9" fill="#e87a86" opacity="0.45"/><rect x="13.70" y="136.73" width="1.12" height="0.9" fill="#6a6a6a" opacity="0.50"/><rect x="15.39" y="136.73" width="1.12" height="0.9" fill="#e87a86" opacity="0.45"/><rect x="17.07" y="136.73" width="2.81" height="0.9" fill="#6a6a6a" opacity="0.50"/><rect x="20.45" y="136.73" width="3.37" height="0.9" fill="#6a6a6a" opacity="0.50"/><rect x="24.38" y="136.73" width="2.25" height="0.9" fill="#6a6a6a" opacity="0.50"/><rect x="27.19" y="136.73" width="1.69" height="0.9" fill="#5a5ab8" opacity="0.50"/><rect x="29.44" y="136.73" width="1.12" height="0.9" fill="#6a6a6a" opacity="0.50"/><rect x="31.13" y="136.73" width="1.69" height="0.9" fill="#e87a86" opacity="0.45"/><rect x="33.38" y="136.73" width="2.25" height="0.9" fill="#5a5ab8" opacity="0.50"/><rect x="36.19" y="136.73" width="3.37" height="0.9" fill="#e87a86" opacity="0.45"/><rect x="40.12" y="136.73" width="1.12" height="0.9" fill="#e87a86" opacity="0.45"/><rect x="41.81" y="136.73" width="1.69" height="0.9" fill="#6a6a6a" opacity="0.50"/><rect x="44.06" y="136.73" width="1.54" height="0.9" fill="#6a6a6a" opacity="0.50"/><rect x="6.82" y="138.86" width="1.12" height="0.9" fill="#e87a86" opacity="0.45"/><rect x="6.82" y="142.33" width="1.69" height="0.9" fill="#5a5ab8" opacity="0.50"/><rect x="9.07" y="142.33" width="1.12" height="0.9" fill="#6a6a6a" opacity="0.50"/><rect x="10.76" y="142.33" width="2.81" height="0.9" fill="#5a5ab8" opacity="0.50"/><rect x="14.13" y="142.33" width="4.50" height="0.9" fill="#6a6a6a" opacity="0.50"/><rect x="19.19" y="142.33" width="2.10" height="0.9" fill="#5a5ab8" opacity="0.50"/><rect x="9.14" y="144.35" width="2.81" height="0.9" fill="#6a6a6a" opacity="0.50"/><rect x="12.51" y="144.35" width="2.25" height="0.9" fill="#5a5ab8" opacity="0.50"/><rect x="15.32" y="144.35" width="4.50" height="0.9" fill="#6a6a6a" opacity="0.50"/><rect x="20.38" y="144.35" width="1.69" height="0.9" fill="#5a5ab8" opacity="0.50"/><rect x="22.63" y="144.35" width="2.81" height="0.9" fill="#6a6a6a" opacity="0.50"/><rect x="26.00" y="144.35" width="2.25" height="0.9" fill="#5a5ab8" opacity="0.50"/><rect x="28.81" y="144.35" width="2.81" height="0.9" fill="#6a6a6a" opacity="0.50"/><rect x="32.19" y="144.35" width="2.25" height="0.9" fill="#5a5ab8" opacity="0.50"/><rect x="35.00" y="144.35" width="1.12" height="0.9" fill="#6a6a6a" opacity="0.50"/><rect x="36.69" y="144.35" width="2.25" height="0.9" fill="#5a5ab8" opacity="0.50"/><rect x="39.50" y="144.35" width="0.31" height="0.9" fill="#6a6a6a" opacity="0.50"/><rect x="6.82" y="147.04" width="2.25" height="0.9" fill="#6a6a6a" opacity="0.50"/><rect x="9.63" y="147.04" width="2.25" height="0.9" fill="#e87a86" opacity="0.45"/><rect x="12.45" y="147.04" width="2.81" height="0.9" fill="#6a6a6a" opacity="0.50"/><rect x="15.82" y="147.04" width="1.12" height="0.9" fill="#e87a86" opacity="0.45"/><rect x="17.50" y="147.04" width="0.31" height="0.9" fill="#6a6a6a" opacity="0.50"/><rect x="6.82" y="149.39" width="4.50" height="0.9" fill="#5a9a9a" opacity="0.42"/><rect x="11.88" y="149.39" width="1.12" height="0.9" fill="#5a9a9a" opacity="0.42"/><rect x="13.57" y="149.39" width="4.50" height="0.9" fill="#5a9a9a" opacity="0.42"/><rect x="18.63" y="149.39" width="2.25" height="0.9" fill="#5a9a9a" opacity="0.42"/><rect x="21.44" y="149.39" width="2.25" height="0.9" fill="#5a9a9a" opacity="0.42"/><rect x="24.25" y="149.39" width="2.25" height="0.9" fill="#5a9a9a" opacity="0.42"/><rect x="27.06" y="149.39" width="1.12" height="0.9" fill="#5a9a9a" opacity="0.42"/><rect x="28.75" y="149.39" width="2.81" height="0.9" fill="#5a9a9a" opacity="0.42"/><rect x="6.82" y="150.62" width="2.81" height="0.9" fill="#6a6a6a" opacity="0.50"/><rect x="10.20" y="150.62" width="3.37" height="0.9" fill="#5a5ab8" opacity="0.50"/><rect x="14.13" y="150.62" width="1.12" height="0.9" fill="#6a6a6a" opacity="0.50"/><rect x="15.82" y="150.62" width="2.25" height="0.9" fill="#5a5ab8" opacity="0.50"/><rect x="18.63" y="150.62" width="2.81" height="0.9" fill="#6a6a6a" opacity="0.50"/><rect x="22.00" y="150.62" width="2.25" height="0.9" fill="#5a5ab8" opacity="0.50"/><rect x="24.81" y="150.62" width="1.12" height="0.9" fill="#6a6a6a" opacity="0.50"/><rect x="9.14" y="152.52" width="2.25" height="0.9" fill="#5a5ab8" opacity="0.50"/><rect x="11.95" y="152.52" width="1.12" height="0.9" fill="#b860c0" opacity="0.50"/><rect x="13.64" y="152.52" width="1.12" height="0.9" fill="#5a5ab8" opacity="0.50"/><rect x="15.32" y="152.52" width="4.50" height="0.9" fill="#b860c0" opacity="0.50"/><rect x="20.38" y="152.52" width="2.25" height="0.9" fill="#5a5ab8" opacity="0.50"/><rect x="23.19" y="152.52" width="0.41" height="0.9" fill="#b860c0" opacity="0.50"/><rect x="4.51" y="155.77" width="1.69" height="0.9" fill="#5a5ab8" opacity="0.50"/><rect x="6.76" y="155.77" width="1.69" height="0.9" fill="#5a5ab8" opacity="0.50"/><rect x="9.01" y="155.77" width="2.25" height="0.9" fill="#5a5ab8" opacity="0.50"/><rect x="11.45" y="155.77" width="2.81" height="0.9" fill="#b860c0" opacity="0.50"/><rect x="14.83" y="155.77" width="3.37" height="0.9" fill="#b860c0" opacity="0.50"/><rect x="18.76" y="155.77" width="2.25" height="0.9" fill="#b860c0" opacity="0.50"/><rect x="21.57" y="155.77" width="0.88" height="0.9" fill="#b860c0" opacity="0.50"/><rect x="22.45" y="155.77" width="2.25" height="0.9" fill="#5a5ab8" opacity="0.50"/><rect x="25.26" y="155.77" width="2.81" height="0.9" fill="#e87a86" opacity="0.45"/><rect x="28.63" y="155.77" width="1.12" height="0.9" fill="#5a5ab8" opacity="0.50"/><rect x="30.32" y="155.77" width="4.50" height="0.9" fill="#e87a86" opacity="0.45"/><rect x="35.38" y="155.77" width="2.81" height="0.9" fill="#5a5ab8" opacity="0.50"/><rect x="38.75" y="155.77" width="3.37" height="0.9" fill="#e87a86" opacity="0.45"/><rect x="42.69" y="155.77" width="3.37" height="0.9" fill="#5a5ab8" opacity="0.50"/><rect x="46.62" y="155.77" width="1.69" height="0.9" fill="#e87a86" opacity="0.45"/><rect x="48.87" y="155.77" width="4.50" height="0.9" fill="#5a5ab8" opacity="0.50"/><rect x="4.51" y="157.12" width="1.12" height="0.9" fill="#e87a86" opacity="0.45"/><rect x="6.82" y="159.13" width="1.12" height="0.9" fill="#6a6a6a" opacity="0.50"/><rect x="8.51" y="159.13" width="4.50" height="0.9" fill="#5a5ab8" opacity="0.50"/><rect x="13.57" y="159.13" width="2.81" height="0.9" fill="#6a6a6a" opacity="0.50"/><rect x="16.94" y="159.13" width="2.81" height="0.9" fill="#5a5ab8" opacity="0.50"/><rect x="20.32" y="159.13" width="3.37" height="0.9" fill="#6a6a6a" opacity="0.50"/><rect x="24.25" y="159.13" width="1.69" height="0.9" fill="#5a5ab8" opacity="0.50"/><rect x="26.50" y="159.13" width="3.47" height="0.9" fill="#6a6a6a" opacity="0.50"/><rect x="31.71" y="159.13" width="2.25" height="0.9" fill="#5a9a9a" opacity="0.42"/><rect x="34.52" y="159.13" width="2.81" height="0.9" fill="#5a9a9a" opacity="0.42"/><rect x="37.89" y="159.13" width="1.12" height="0.9" fill="#5a9a9a" opacity="0.42"/><rect x="39.58" y="159.13" width="3.37" height="0.9" fill="#5a9a9a" opacity="0.42"/><rect x="9.14" y="161.60" width="1.69" height="0.9" fill="#5a5ab8" opacity="0.50"/><rect x="11.39" y="161.60" width="2.81" height="0.9" fill="#6a6a6a" opacity="0.50"/><rect x="14.76" y="161.60" width="2.25" height="0.9" fill="#e87a86" opacity="0.45"/><rect x="17.57" y="161.60" width="2.25" height="0.9" fill="#e87a86" opacity="0.45"/><rect x="20.38" y="161.60" width="4.50" height="0.9" fill="#e87a86" opacity="0.45"/><rect x="25.44" y="161.60" width="2.81" height="0.9" fill="#5a5ab8" opacity="0.50"/><rect x="28.81" y="161.60" width="2.25" height="0.9" fill="#6a6a6a" opacity="0.50"/><rect x="31.63" y="161.60" width="3.37" height="0.9" fill="#6a6a6a" opacity="0.50"/><rect x="35.56" y="161.60" width="1.12" height="0.9" fill="#5a5ab8" opacity="0.50"/><rect x="37.25" y="161.60" width="4.50" height="0.9" fill="#5a5ab8" opacity="0.50"/><rect x="42.31" y="161.60" width="1.12" height="0.9" fill="#5a5ab8" opacity="0.50"/><rect x="43.99" y="161.60" width="3.37" height="0.9" fill="#6a6a6a" opacity="0.50"/><rect x="47.93" y="161.60" width="3.37" height="0.9" fill="#5a5ab8" opacity="0.50"/><rect x="51.87" y="161.60" width="2.81" height="0.9" fill="#e87a86" opacity="0.45"/><rect x="55.24" y="161.60" width="2.81" height="0.9" fill="#6a6a6a" opacity="0.50"/><rect x="58.61" y="161.60" width="1.69" height="0.9" fill="#5a5ab8" opacity="0.50"/><rect x="60.86" y="161.60" width="1.52" height="0.9" fill="#6a6a6a" opacity="0.50"/><rect x="9.14" y="163.28" width="1.16" height="0.9" fill="#e87a86" opacity="0.45"/><rect x="11.45" y="164.96" width="2.25" height="0.9" fill="#6a6a6a" opacity="0.50"/><rect x="14.26" y="164.96" width="2.25" height="0.9" fill="#5a5ab8" opacity="0.50"/><rect x="17.07" y="164.96" width="2.25" height="0.9" fill="#e87a86" opacity="0.45"/><rect x="19.89" y="164.96" width="3.37" height="0.9" fill="#5a5ab8" opacity="0.50"/><rect x="23.82" y="164.96" width="1.12" height="0.9" fill="#6a6a6a" opacity="0.50"/><rect x="25.51" y="164.96" width="2.81" height="0.9" fill="#6a6a6a" opacity="0.50"/><rect x="28.88" y="164.96" width="4.50" height="0.9" fill="#5a5ab8" opacity="0.50"/><rect x="33.94" y="164.96" width="2.81" height="0.9" fill="#e87a86" opacity="0.45"/><rect x="37.31" y="164.96" width="2.25" height="0.9" fill="#6a6a6a" opacity="0.50"/><rect x="40.12" y="164.96" width="2.81" height="0.9" fill="#e87a86" opacity="0.45"/><rect x="9.14" y="166.41" width="1.16" height="0.9" fill="#e87a86" opacity="0.45"/><rect x="6.82" y="169.32" width="2.25" height="0.9" fill="#5a5ab8" opacity="0.50"/><rect x="11.45" y="169.32" width="1.69" height="0.9" fill="#5a9a9a" opacity="0.42"/><rect x="13.70" y="169.32" width="4.50" height="0.9" fill="#5a9a9a" opacity="0.42"/><rect x="18.76" y="169.32" width="3.37" height="0.9" fill="#5a9a9a" opacity="0.42"/><rect x="22.70" y="169.32" width="2.07" height="0.9" fill="#5a9a9a" opacity="0.42"/><rect x="9.14" y="171.90" width="4.50" height="0.9" fill="#6a6a6a" opacity="0.50"/><rect x="14.20" y="171.90" width="1.12" height="0.9" fill="#e87a86" opacity="0.45"/><rect x="15.88" y="171.90" width="1.69" height="0.9" fill="#6a6a6a" opacity="0.50"/><rect x="18.13" y="171.90" width="2.81" height="0.9" fill="#6a6a6a" opacity="0.50"/><rect x="21.51" y="171.90" width="2.81" height="0.9" fill="#e87a86" opacity="0.45"/><rect x="24.88" y="171.90" width="1.12" height="0.9" fill="#6a6a6a" opacity="0.50"/><rect x="26.57" y="171.90" width="1.12" height="0.9" fill="#6a6a6a" opacity="0.50"/><rect x="28.25" y="171.90" width="4.50" height="0.9" fill="#6a6a6a" opacity="0.50"/><rect x="33.31" y="171.90" width="3.37" height="0.9" fill="#6a6a6a" opacity="0.50"/><rect x="37.25" y="171.90" width="1.12" height="0.9" fill="#5a5ab8" opacity="0.50"/><rect x="38.93" y="171.90" width="2.03" height="0.9" fill="#6a6a6a" opacity="0.50"/><rect x="9.14" y="173.58" width="2.81" height="0.9" fill="#5a5ab8" opacity="0.50"/><rect x="12.51" y="173.58" width="1.12" height="0.9" fill="#5a5ab8" opacity="0.50"/><rect x="14.20" y="173.58" width="1.69" height="0.9" fill="#5a5ab8" opacity="0.50"/><rect x="16.45" y="173.58" width="3.37" height="0.9" fill="#6a6a6a" opacity="0.50"/><rect x="20.38" y="173.58" width="4.50" height="0.9" fill="#6a6a6a" opacity="0.50"/><rect x="25.44" y="173.58" width="1.12" height="0.9" fill="#6a6a6a" opacity="0.50"/><rect x="27.13" y="173.58" width="1.12" height="0.9" fill="#5a5ab8" opacity="0.50"/><rect x="28.81" y="173.58" width="1.69" height="0.9" fill="#6a6a6a" opacity="0.50"/><rect x="31.06" y="173.58" width="4.50" height="0.9" fill="#e87a86" opacity="0.45"/><rect x="36.12" y="173.58" width="1.69" height="0.9" fill="#e87a86" opacity="0.45"/><rect x="38.37" y="173.58" width="3.37" height="0.9" fill="#6a6a6a" opacity="0.50"/><rect x="42.31" y="173.58" width="4.50" height="0.9" fill="#6a6a6a" opacity="0.50"/><rect x="47.37" y="173.58" width="1.12" height="0.9" fill="#6a6a6a" opacity="0.50"/><rect x="49.05" y="173.58" width="2.25" height="0.9" fill="#5a5ab8" opacity="0.50"/><rect x="51.87" y="173.58" width="2.81" height="0.9" fill="#e87a86" opacity="0.45"/><rect x="55.24" y="173.58" width="1.69" height="0.9" fill="#6a6a6a" opacity="0.50"/><rect x="57.49" y="173.58" width="1.12" height="0.9" fill="#e87a86" opacity="0.45"/><rect x="59.17" y="173.58" width="2.81" height="0.9" fill="#e87a86" opacity="0.45"/><rect x="62.55" y="173.58" width="0.41" height="0.9" fill="#5a5ab8" opacity="0.50"/><rect x="9.14" y="175.26" width="1.16" height="0.9" fill="#e87a86" opacity="0.45"/><rect x="11.45" y="177.39" width="3.37" height="0.9" fill="#6a6a6a" opacity="0.50"/><rect x="15.39" y="177.39" width="1.69" height="0.9" fill="#5a5ab8" opacity="0.50"/><rect x="17.64" y="177.39" width="3.37" height="0.9" fill="#6a6a6a" opacity="0.50"/><rect x="21.57" y="177.39" width="1.69" height="0.9" fill="#5a5ab8" opacity="0.50"/><rect x="23.82" y="177.39" width="1.12" height="0.9" fill="#6a6a6a" opacity="0.50"/><rect x="25.51" y="177.39" width="2.81" height="0.9" fill="#5a5ab8" opacity="0.50"/><rect x="28.88" y="177.39" width="4.50" height="0.9" fill="#6a6a6a" opacity="0.50"/><rect x="33.94" y="177.39" width="4.50" height="0.9" fill="#5a5ab8" opacity="0.50"/><rect x="39.00" y="177.39" width="0.81" height="0.9" fill="#6a6a6a" opacity="0.50"/><rect x="11.45" y="179.40" width="1.12" height="0.9" fill="#6a6a6a" opacity="0.50"/><rect x="13.14" y="179.40" width="1.12" height="0.9" fill="#e87a86" opacity="0.45"/><rect x="14.83" y="179.40" width="1.69" height="0.9" fill="#6a6a6a" opacity="0.50"/><rect x="17.07" y="179.40" width="2.81" height="0.9" fill="#e87a86" opacity="0.45"/><rect x="20.45" y="179.40" width="4.50" height="0.9" fill="#6a6a6a" opacity="0.50"/><rect x="25.51" y="179.40" width="4.50" height="0.9" fill="#e87a86" opacity="0.45"/><rect x="30.57" y="179.40" width="2.81" height="0.9" fill="#6a6a6a" opacity="0.50"/><rect x="33.94" y="179.40" width="1.12" height="0.9" fill="#e87a86" opacity="0.45"/><rect x="35.63" y="179.40" width="2.25" height="0.9" fill="#6a6a6a" opacity="0.50"/><rect x="38.44" y="179.40" width="1.69" height="0.9" fill="#e87a86" opacity="0.45"/><rect x="40.69" y="179.40" width="3.75" height="0.9" fill="#6a6a6a" opacity="0.50"/><rect x="11.45" y="182.20" width="2.81" height="0.9" fill="#e87a86" opacity="0.45"/><rect x="14.83" y="182.20" width="1.69" height="0.9" fill="#6a6a6a" opacity="0.50"/><rect x="17.07" y="182.20" width="1.12" height="0.9" fill="#e87a86" opacity="0.45"/><rect x="18.76" y="182.20" width="4.50" height="0.9" fill="#6a6a6a" opacity="0.50"/><rect x="23.82" y="182.20" width="2.25" height="0.9" fill="#6a6a6a" opacity="0.50"/><rect x="26.63" y="182.20" width="1.69" height="0.9" fill="#6a6a6a" opacity="0.50"/><rect x="28.88" y="182.20" width="2.25" height="0.9" fill="#6a6a6a" opacity="0.50"/><rect x="31.69" y="182.20" width="1.69" height="0.9" fill="#6a6a6a" opacity="0.50"/><rect x="33.94" y="182.20" width="1.69" height="0.9" fill="#e87a86" opacity="0.45"/><rect x="36.19" y="182.20" width="1.69" height="0.9" fill="#5a5ab8" opacity="0.50"/><rect x="38.44" y="182.20" width="2.81" height="0.9" fill="#5a5ab8" opacity="0.50"/><rect x="41.81" y="182.20" width="2.25" height="0.9" fill="#e87a86" opacity="0.45"/><rect x="44.62" y="182.20" width="1.12" height="0.9" fill="#6a6a6a" opacity="0.50"/><rect x="46.31" y="182.20" width="3.37" height="0.9" fill="#5a5ab8" opacity="0.50"/><rect x="50.24" y="182.20" width="1.69" height="0.9" fill="#6a6a6a" opacity="0.50"/><rect x="9.14" y="184.33" width="1.16" height="0.9" fill="#e87a86" opacity="0.45"/><rect x="6.82" y="186.24" width="1.16" height="0.9" fill="#e87a86" opacity="0.45"/><rect x="4.51" y="188.25" width="1.12" height="0.9" fill="#5a5ab8" opacity="0.50"/><rect x="6.19" y="188.25" width="3.37" height="0.9" fill="#5a5ab8" opacity="0.50"/><rect x="10.13" y="188.25" width="1.32" height="0.9" fill="#5a5ab8" opacity="0.50"/><rect x="11.45" y="188.25" width="2.81" height="0.9" fill="#b860c0" opacity="0.50"/><rect x="14.83" y="188.25" width="1.12" height="0.9" fill="#b860c0" opacity="0.50"/><rect x="16.51" y="188.25" width="1.69" height="0.9" fill="#b860c0" opacity="0.50"/><rect x="18.76" y="188.25" width="1.12" height="0.9" fill="#b860c0" opacity="0.50"/><rect x="20.45" y="188.25" width="2.00" height="0.9" fill="#b860c0" opacity="0.50"/><rect x="22.45" y="188.25" width="1.69" height="0.9" fill="#5a5ab8" opacity="0.50"/><rect x="24.70" y="188.25" width="2.81" height="0.9" fill="#e87a86" opacity="0.45"/><rect x="28.07" y="188.25" width="1.12" height="0.9" fill="#5a5ab8" opacity="0.50"/><rect x="29.76" y="188.25" width="4.50" height="0.9" fill="#e87a86" opacity="0.45"/><rect x="34.82" y="188.25" width="1.12" height="0.9" fill="#5a5ab8" opacity="0.50"/><rect x="36.50" y="188.25" width="1.69" height="0.9" fill="#e87a86" opacity="0.45"/><rect x="38.75" y="188.25" width="2.81" height="0.9" fill="#5a5ab8" opacity="0.50"/><rect x="42.13" y="188.25" width="2.81" height="0.9" fill="#e87a86" opacity="0.45"/><rect x="45.50" y="188.25" width="3.57" height="0.9" fill="#5a5ab8" opacity="0.50"/><rect x="4.51" y="189.71" width="1.16" height="0.9" fill="#e87a86" opacity="0.45"/><rect x="6.82" y="191.28" width="4.50" height="0.9" fill="#6a6a6a" opacity="0.50"/><rect x="11.88" y="191.28" width="1.12" height="0.9" fill="#5a5ab8" opacity="0.50"/><rect x="13.57" y="191.28" width="2.25" height="0.9" fill="#5a5ab8" opacity="0.50"/><rect x="16.38" y="191.28" width="1.69" height="0.9" fill="#6a6a6a" opacity="0.50"/><rect x="18.63" y="191.28" width="1.12" height="0.9" fill="#5a9a9a" opacity="0.42"/><rect x="20.32" y="191.28" width="4.50" height="0.9" fill="#6a6a6a" opacity="0.50"/><rect x="25.38" y="191.28" width="2.25" height="0.9" fill="#5a9a9a" opacity="0.42"/><rect x="28.19" y="191.28" width="2.81" height="0.9" fill="#5a5ab8" opacity="0.50"/><rect x="31.56" y="191.28" width="1.12" height="0.9" fill="#6a6a6a" opacity="0.50"/><rect x="33.25" y="191.28" width="1.12" height="0.9" fill="#5a9a9a" opacity="0.42"/><rect x="34.93" y="191.28" width="1.12" height="0.9" fill="#5a9a9a" opacity="0.42"/><rect x="36.62" y="191.28" width="2.81" height="0.9" fill="#6a6a6a" opacity="0.50"/><rect x="39.99" y="191.28" width="3.37" height="0.9" fill="#5a5ab8" opacity="0.50"/><rect x="43.93" y="191.28" width="0.51" height="0.9" fill="#5a9a9a" opacity="0.42"/><rect x="9.14" y="193.18" width="2.25" height="0.9" fill="#6a6a6a" opacity="0.50"/><rect x="11.95" y="193.18" width="1.12" height="0.9" fill="#5a5ab8" opacity="0.50"/><rect x="13.64" y="193.18" width="4.50" height="0.9" fill="#6a6a6a" opacity="0.50"/><rect x="18.70" y="193.18" width="1.69" height="0.9" fill="#e87a86" opacity="0.45"/><rect x="20.94" y="193.18" width="3.37" height="0.9" fill="#6a6a6a" opacity="0.50"/><rect x="24.88" y="193.18" width="1.69" height="0.9" fill="#e87a86" opacity="0.45"/><rect x="27.13" y="193.18" width="1.69" height="0.9" fill="#6a6a6a" opacity="0.50"/><rect x="11.45" y="195.98" width="1.12" height="0.9" fill="#5a9a9a" opacity="0.42"/><rect x="13.14" y="195.98" width="4.50" height="0.9" fill="#5a9a9a" opacity="0.42"/><rect x="18.20" y="195.98" width="2.81" height="0.9" fill="#5a9a9a" opacity="0.42"/><rect x="21.57" y="195.98" width="1.69" height="0.9" fill="#5a9a9a" opacity="0.42"/><rect x="23.82" y="195.98" width="4.50" height="0.9" fill="#5a9a9a" opacity="0.42"/><rect x="28.88" y="195.98" width="2.81" height="0.9" fill="#5a9a9a" opacity="0.42"/><rect x="11.45" y="197.77" width="1.12" height="0.9" fill="#6a6a6a" opacity="0.50"/><rect x="13.14" y="197.77" width="2.81" height="0.9" fill="#5a5ab8" opacity="0.50"/><rect x="16.51" y="197.77" width="1.12" height="0.9" fill="#6a6a6a" opacity="0.50"/><rect x="18.20" y="197.77" width="2.81" height="0.9" fill="#5a5ab8" opacity="0.50"/><rect x="21.57" y="197.77" width="1.12" height="0.9" fill="#6a6a6a" opacity="0.50"/><rect x="23.26" y="197.77" width="1.12" height="0.9" fill="#5a5ab8" opacity="0.50"/><rect x="24.95" y="197.77" width="2.25" height="0.9" fill="#6a6a6a" opacity="0.50"/><rect x="27.76" y="197.77" width="1.69" height="0.9" fill="#5a5ab8" opacity="0.50"/><rect x="30.01" y="197.77" width="4.02" height="0.9" fill="#6a6a6a" opacity="0.50"/><rect x="11.45" y="199.00" width="1.12" height="0.9" fill="#e87a86" opacity="0.45"/><rect x="13.14" y="199.00" width="2.25" height="0.9" fill="#e87a86" opacity="0.45"/><rect x="15.95" y="199.00" width="2.25" height="0.9" fill="#5a5ab8" opacity="0.50"/><rect x="18.76" y="199.00" width="2.25" height="0.9" fill="#e87a86" opacity="0.45"/><rect x="21.57" y="199.00" width="2.25" height="0.9" fill="#e87a86" opacity="0.45"/><rect x="24.38" y="199.00" width="1.12" height="0.9" fill="#5a5ab8" opacity="0.50"/><rect x="26.07" y="199.00" width="1.12" height="0.9" fill="#6a6a6a" opacity="0.50"/><rect x="27.76" y="199.00" width="1.12" height="0.9" fill="#6a6a6a" opacity="0.50"/><rect x="29.44" y="199.00" width="4.50" height="0.9" fill="#6a6a6a" opacity="0.50"/><rect x="34.50" y="199.00" width="0.68" height="0.9" fill="#e87a86" opacity="0.45"/><rect x="11.45" y="200.35" width="2.81" height="0.9" fill="#6a6a6a" opacity="0.50"/><rect x="14.83" y="200.35" width="1.69" height="0.9" fill="#6a6a6a" opacity="0.50"/><rect x="17.07" y="200.35" width="1.69" height="0.9" fill="#6a6a6a" opacity="0.50"/><rect x="19.32" y="200.35" width="4.50" height="0.9" fill="#e87a86" opacity="0.45"/><rect x="24.38" y="200.35" width="4.50" height="0.9" fill="#5a5ab8" opacity="0.50"/><rect x="29.44" y="200.35" width="3.37" height="0.9" fill="#5a5ab8" opacity="0.50"/><rect x="33.38" y="200.35" width="2.25" height="0.9" fill="#e87a86" opacity="0.45"/><rect x="36.19" y="200.35" width="2.81" height="0.9" fill="#e87a86" opacity="0.45"/><rect x="39.56" y="200.35" width="3.37" height="0.9" fill="#6a6a6a" opacity="0.50"/><rect x="43.50" y="200.35" width="1.52" height="0.9" fill="#5a5ab8" opacity="0.50"/><rect x="9.14" y="203.26" width="2.81" height="0.9" fill="#6a6a6a" opacity="0.50"/><rect x="12.51" y="203.26" width="1.69" height="0.9" fill="#6a6a6a" opacity="0.50"/><rect x="14.76" y="203.26" width="1.69" height="0.9" fill="#6a6a6a" opacity="0.50"/><rect x="6.82" y="205.39" width="2.31" height="0.9" fill="#5a5ab8" opacity="0.50"/><rect x="9.14" y="207.63" width="1.12" height="0.9" fill="#6a6a6a" opacity="0.50"/><rect x="10.82" y="207.63" width="4.50" height="0.9" fill="#5a5ab8" opacity="0.50"/><rect x="15.88" y="207.63" width="1.12" height="0.9" fill="#6a6a6a" opacity="0.50"/><rect x="17.57" y="207.63" width="2.81" height="0.9" fill="#5a5ab8" opacity="0.50"/><rect x="20.94" y="207.63" width="3.37" height="0.9" fill="#6a6a6a" opacity="0.50"/><rect x="24.88" y="207.63" width="3.37" height="0.9" fill="#5a5ab8" opacity="0.50"/><rect x="28.81" y="207.63" width="0.58" height="0.9" fill="#6a6a6a" opacity="0.50"/><rect x="9.14" y="208.86" width="1.69" height="0.9" fill="#6a6a6a" opacity="0.50"/><rect x="11.39" y="208.86" width="2.81" height="0.9" fill="#6a6a6a" opacity="0.50"/><rect x="14.76" y="208.86" width="0.74" height="0.9" fill="#6a6a6a" opacity="0.50"/><rect x="11.45" y="211.10" width="1.12" height="0.9" fill="#e87a86" opacity="0.45"/><rect x="13.14" y="211.10" width="3.37" height="0.9" fill="#6a6a6a" opacity="0.50"/><rect x="17.07" y="211.10" width="1.69" height="0.9" fill="#6a6a6a" opacity="0.50"/><rect x="19.32" y="211.10" width="2.81" height="0.9" fill="#6a6a6a" opacity="0.50"/><rect x="22.70" y="211.10" width="4.50" height="0.9" fill="#6a6a6a" opacity="0.50"/><rect x="27.76" y="211.10" width="1.69" height="0.9" fill="#5a5ab8" opacity="0.50"/><rect x="30.01" y="211.10" width="1.69" height="0.9" fill="#6a6a6a" opacity="0.50"/><rect x="13.19" y="213.56" width="2.81" height="0.9" fill="#6a6a6a" opacity="0.50"/><rect x="16.56" y="213.56" width="4.50" height="0.9" fill="#5a5ab8" opacity="0.50"/><rect x="21.62" y="213.56" width="2.25" height="0.9" fill="#5a9a9a" opacity="0.42"/><rect x="24.43" y="213.56" width="2.25" height="0.9" fill="#5a9a9a" opacity="0.42"/><rect x="27.24" y="213.56" width="2.25" height="0.9" fill="#5a9a9a" opacity="0.42"/><rect x="30.05" y="213.56" width="4.50" height="0.9" fill="#5a9a9a" opacity="0.42"/><rect x="35.11" y="213.56" width="1.22" height="0.9" fill="#6a6a6a" opacity="0.50"/><rect x="15.50" y="215.80" width="1.69" height="0.9" fill="#5a9a9a" opacity="0.42"/><rect x="17.75" y="215.80" width="1.69" height="0.9" fill="#5a9a9a" opacity="0.42"/><rect x="20.00" y="215.80" width="1.69" height="0.9" fill="#5a9a9a" opacity="0.42"/><rect x="22.25" y="215.80" width="1.69" height="0.9" fill="#5a9a9a" opacity="0.42"/><rect x="24.50" y="215.80" width="1.69" height="0.9" fill="#5a9a9a" opacity="0.42"/><rect x="26.75" y="215.80" width="2.25" height="0.9" fill="#5a9a9a" opacity="0.42"/><rect x="29.56" y="215.80" width="2.15" height="0.9" fill="#5a9a9a" opacity="0.42"/><rect x="15.50" y="217.04" width="1.69" height="0.9" fill="#e87a86" opacity="0.45"/><rect x="17.75" y="217.04" width="1.12" height="0.9" fill="#6a6a6a" opacity="0.50"/><rect x="19.44" y="217.04" width="2.25" height="0.9" fill="#5a5ab8" opacity="0.50"/><rect x="22.25" y="217.04" width="3.37" height="0.9" fill="#5a5ab8" opacity="0.50"/><rect x="26.19" y="217.04" width="4.50" height="0.9" fill="#6a6a6a" opacity="0.50"/><rect x="31.25" y="217.04" width="4.50" height="0.9" fill="#6a6a6a" opacity="0.50"/><rect x="36.31" y="217.04" width="1.12" height="0.9" fill="#6a6a6a" opacity="0.50"/><rect x="37.99" y="217.04" width="1.12" height="0.9" fill="#6a6a6a" opacity="0.50"/><rect x="39.68" y="217.04" width="1.69" height="0.9" fill="#6a6a6a" opacity="0.50"/><rect x="41.93" y="217.04" width="2.25" height="0.9" fill="#6a6a6a" opacity="0.50"/><rect x="44.74" y="217.04" width="2.25" height="0.9" fill="#5a5ab8" opacity="0.50"/><rect x="47.55" y="217.04" width="1.12" height="0.9" fill="#6a6a6a" opacity="0.50"/><rect x="15.50" y="218.49" width="1.69" height="0.9" fill="#6a6a6a" opacity="0.50"/><rect x="17.75" y="218.49" width="3.37" height="0.9" fill="#5a5ab8" opacity="0.50"/><rect x="21.69" y="218.49" width="3.37" height="0.9" fill="#6a6a6a" opacity="0.50"/><rect x="25.62" y="218.49" width="1.69" height="0.9" fill="#5a5ab8" opacity="0.50"/><rect x="27.87" y="218.49" width="1.12" height="0.9" fill="#6a6a6a" opacity="0.50"/><rect x="29.56" y="218.49" width="2.25" height="0.9" fill="#5a5ab8" opacity="0.50"/><rect x="32.37" y="218.49" width="2.81" height="0.9" fill="#6a6a6a" opacity="0.50"/><rect x="15.50" y="220.51" width="1.69" height="0.9" fill="#6a6a6a" opacity="0.50"/><rect x="17.75" y="220.51" width="3.37" height="0.9" fill="#e87a86" opacity="0.45"/><rect x="21.69" y="220.51" width="4.50" height="0.9" fill="#6a6a6a" opacity="0.50"/><rect x="26.75" y="220.51" width="1.12" height="0.9" fill="#e87a86" opacity="0.45"/><rect x="28.43" y="220.51" width="1.69" height="0.9" fill="#6a6a6a" opacity="0.50"/><rect x="30.68" y="220.51" width="2.25" height="0.9" fill="#e87a86" opacity="0.45"/><rect x="33.49" y="220.51" width="1.69" height="0.9" fill="#6a6a6a" opacity="0.50"/><rect x="35.74" y="220.51" width="1.69" height="0.9" fill="#e87a86" opacity="0.45"/><rect x="37.99" y="220.51" width="1.12" height="0.9" fill="#5a5ab8" opacity="0.50"/><rect x="39.68" y="220.51" width="1.12" height="0.9" fill="#e87a86" opacity="0.45"/><rect x="41.36" y="220.51" width="2.81" height="0.9" fill="#e87a86" opacity="0.45"/><rect x="44.74" y="220.51" width="1.69" height="0.9" fill="#e87a86" opacity="0.45"/><rect x="46.99" y="220.51" width="1.12" height="0.9" fill="#5a5ab8" opacity="0.50"/><rect x="48.67" y="220.51" width="0.40" height="0.9" fill="#6a6a6a" opacity="0.50"/><rect x="15.50" y="222.41" width="3.37" height="0.9" fill="#6a6a6a" opacity="0.50"/><rect x="19.44" y="222.41" width="1.12" height="0.9" fill="#6a6a6a" opacity="0.50"/><rect x="21.13" y="222.41" width="1.12" height="0.9" fill="#6a6a6a" opacity="0.50"/><rect x="22.81" y="222.41" width="4.50" height="0.9" fill="#e87a86" opacity="0.45"/><rect x="27.87" y="222.41" width="4.50" height="0.9" fill="#6a6a6a" opacity="0.50"/><rect x="32.93" y="222.41" width="4.50" height="0.9" fill="#e87a86" opacity="0.45"/><rect x="37.99" y="222.41" width="2.81" height="0.9" fill="#5a5ab8" opacity="0.50"/><rect x="41.36" y="222.41" width="2.81" height="0.9" fill="#5a5ab8" opacity="0.50"/><rect x="44.74" y="222.41" width="4.50" height="0.9" fill="#5a5ab8" opacity="0.50"/><rect x="49.80" y="222.41" width="2.81" height="0.9" fill="#6a6a6a" opacity="0.50"/><rect x="53.17" y="222.41" width="2.25" height="0.9" fill="#5a5ab8" opacity="0.50"/><rect x="55.98" y="222.41" width="1.19" height="0.9" fill="#6a6a6a" opacity="0.50"/><rect x="15.50" y="224.32" width="1.12" height="0.9" fill="#6a6a6a" opacity="0.50"/><rect x="17.19" y="224.32" width="2.25" height="0.9" fill="#6a6a6a" opacity="0.50"/><rect x="20.00" y="224.32" width="4.50" height="0.9" fill="#6a6a6a" opacity="0.50"/><rect x="13.19" y="225.66" width="1.16" height="0.9" fill="#e87a86" opacity="0.45"/><rect x="10.87" y="227.00" width="1.16" height="0.9" fill="#e87a86" opacity="0.45"/><rect x="8.56" y="228.35" width="1.16" height="0.9" fill="#e87a86" opacity="0.45"/><rect x="4.51" y="229.69" width="1.16" height="0.9" fill="#e87a86" opacity="0.45"/><rect x="4.51" y="232.60" width="1.69" height="0.9" fill="#5a5ab8" opacity="0.50"/><rect x="6.76" y="232.60" width="1.12" height="0.9" fill="#5a5ab8" opacity="0.50"/><rect x="8.44" y="232.60" width="2.81" height="0.9" fill="#5a5ab8" opacity="0.50"/><rect x="11.45" y="232.60" width="1.69" height="0.9" fill="#b860c0" opacity="0.50"/><rect x="13.70" y="232.60" width="2.81" height="0.9" fill="#b860c0" opacity="0.50"/><rect x="17.07" y="232.60" width="1.12" height="0.9" fill="#b860c0" opacity="0.50"/><rect x="18.76" y="232.60" width="1.12" height="0.9" fill="#b860c0" opacity="0.50"/><rect x="20.45" y="232.60" width="2.00" height="0.9" fill="#b860c0" opacity="0.50"/><rect x="22.45" y="232.60" width="3.37" height="0.9" fill="#5a5ab8" opacity="0.50"/><rect x="26.38" y="232.60" width="2.25" height="0.9" fill="#e87a86" opacity="0.45"/><rect x="29.19" y="232.60" width="2.81" height="0.9" fill="#5a5ab8" opacity="0.50"/><rect x="32.57" y="232.60" width="1.69" height="0.9" fill="#e87a86" opacity="0.45"/><rect x="34.82" y="232.60" width="1.69" height="0.9" fill="#5a5ab8" opacity="0.50"/><rect x="37.07" y="232.60" width="1.12" height="0.9" fill="#e87a86" opacity="0.45"/><rect x="38.75" y="232.60" width="1.12" height="0.9" fill="#5a5ab8" opacity="0.50"/><rect x="40.44" y="232.60" width="3.37" height="0.9" fill="#e87a86" opacity="0.45"/><rect x="44.37" y="232.60" width="1.69" height="0.9" fill="#5a5ab8" opacity="0.50"/><rect x="46.62" y="232.60" width="4.50" height="0.9" fill="#e87a86" opacity="0.45"/><rect x="51.68" y="232.60" width="1.44" height="0.9" fill="#5a5ab8" opacity="0.50"/><rect x="4.51" y="234.28" width="1.12" height="0.9" fill="#e87a86" opacity="0.45"/><rect x="6.82" y="234.28" width="3.37" height="0.9" fill="#6a6a6a" opacity="0.50"/><rect x="10.76" y="234.28" width="3.37" height="0.9" fill="#5a5ab8" opacity="0.50"/><rect x="14.69" y="234.28" width="2.25" height="0.9" fill="#6a6a6a" opacity="0.50"/><rect x="17.50" y="234.28" width="4.50" height="0.9" fill="#5a5ab8" opacity="0.50"/><rect x="22.56" y="234.28" width="3.37" height="0.9" fill="#6a6a6a" opacity="0.50"/><rect x="26.50" y="234.28" width="1.69" height="0.9" fill="#5a5ab8" opacity="0.50"/><rect x="28.75" y="234.28" width="1.69" height="0.9" fill="#6a6a6a" opacity="0.50"/><rect x="31.00" y="234.28" width="1.87" height="0.9" fill="#5a5ab8" opacity="0.50"/><rect x="6.82" y="235.74" width="2.25" height="0.9" fill="#6a6a6a" opacity="0.50"/><rect x="9.63" y="235.74" width="3.37" height="0.9" fill="#6a6a6a" opacity="0.50"/><rect x="13.57" y="235.74" width="1.12" height="0.9" fill="#5a5ab8" opacity="0.50"/><rect x="15.26" y="235.74" width="2.81" height="0.9" fill="#6a6a6a" opacity="0.50"/><rect x="18.63" y="235.74" width="1.69" height="0.9" fill="#e87a86" opacity="0.45"/><rect x="20.88" y="235.74" width="1.69" height="0.9" fill="#5a5ab8" opacity="0.50"/><rect x="23.13" y="235.74" width="2.81" height="0.9" fill="#e87a86" opacity="0.45"/><rect x="26.50" y="235.74" width="1.12" height="0.9" fill="#6a6a6a" opacity="0.50"/><rect x="28.19" y="235.74" width="1.12" height="0.9" fill="#6a6a6a" opacity="0.50"/><rect x="29.87" y="235.74" width="4.15" height="0.9" fill="#6a6a6a" opacity="0.50"/><rect x="6.82" y="238.09" width="3.37" height="0.9" fill="#5a5ab8" opacity="0.50"/><rect x="10.76" y="238.09" width="2.81" height="0.9" fill="#6a6a6a" opacity="0.50"/><rect x="14.13" y="238.09" width="3.37" height="0.9" fill="#5a5ab8" opacity="0.50"/><rect x="9.14" y="240.00" width="1.69" height="0.9" fill="#6a6a6a" opacity="0.50"/><rect x="11.39" y="240.00" width="1.69" height="0.9" fill="#5a5ab8" opacity="0.50"/><rect x="13.64" y="240.00" width="1.12" height="0.9" fill="#6a6a6a" opacity="0.50"/><rect x="15.32" y="240.00" width="3.37" height="0.9" fill="#5a5ab8" opacity="0.50"/><rect x="19.26" y="240.00" width="2.81" height="0.9" fill="#e87a86" opacity="0.45"/><rect x="22.63" y="240.00" width="1.12" height="0.9" fill="#5a5ab8" opacity="0.50"/><rect x="24.32" y="240.00" width="1.69" height="0.9" fill="#5a5ab8" opacity="0.50"/><rect x="26.57" y="240.00" width="1.12" height="0.9" fill="#6a6a6a" opacity="0.50"/><rect x="28.25" y="240.00" width="4.50" height="0.9" fill="#e87a86" opacity="0.45"/><rect x="33.31" y="240.00" width="1.12" height="0.9" fill="#6a6a6a" opacity="0.50"/><rect x="35.00" y="240.00" width="3.37" height="0.9" fill="#6a6a6a" opacity="0.50"/><rect x="38.93" y="240.00" width="0.87" height="0.9" fill="#e87a86" opacity="0.45"/><rect x="9.14" y="241.56" width="4.50" height="0.9" fill="#6a6a6a" opacity="0.50"/><rect x="14.20" y="241.56" width="2.25" height="0.9" fill="#5a5ab8" opacity="0.50"/><rect x="17.01" y="241.56" width="2.81" height="0.9" fill="#6a6a6a" opacity="0.50"/><rect x="20.38" y="241.56" width="4.50" height="0.9" fill="#e87a86" opacity="0.45"/><rect x="25.44" y="241.56" width="2.81" height="0.9" fill="#6a6a6a" opacity="0.50"/><rect x="28.81" y="241.56" width="1.69" height="0.9" fill="#6a6a6a" opacity="0.50"/><rect x="31.06" y="241.56" width="1.12" height="0.9" fill="#6a6a6a" opacity="0.50"/><rect x="32.75" y="241.56" width="2.81" height="0.9" fill="#5a5ab8" opacity="0.50"/><rect x="36.12" y="241.56" width="2.81" height="0.9" fill="#6a6a6a" opacity="0.50"/><rect x="39.50" y="241.56" width="1.69" height="0.9" fill="#6a6a6a" opacity="0.50"/><rect x="41.75" y="241.56" width="2.81" height="0.9" fill="#6a6a6a" opacity="0.50"/><rect x="45.12" y="241.56" width="1.12" height="0.9" fill="#5a5ab8" opacity="0.50"/><rect x="46.81" y="241.56" width="2.25" height="0.9" fill="#6a6a6a" opacity="0.50"/><rect x="49.62" y="241.56" width="2.25" height="0.9" fill="#6a6a6a" opacity="0.50"/><rect x="52.43" y="241.56" width="2.81" height="0.9" fill="#6a6a6a" opacity="0.50"/><rect x="55.80" y="241.56" width="1.12" height="0.9" fill="#5a5ab8" opacity="0.50"/><rect x="57.49" y="241.56" width="1.12" height="0.9" fill="#e87a86" opacity="0.45"/><rect x="59.17" y="241.56" width="1.47" height="0.9" fill="#6a6a6a" opacity="0.50"/><rect x="9.14" y="242.80" width="1.12" height="0.9" fill="#6a6a6a" opacity="0.50"/><rect x="10.82" y="242.80" width="3.37" height="0.9" fill="#5a5ab8" opacity="0.50"/><rect x="14.76" y="242.80" width="2.81" height="0.9" fill="#6a6a6a" opacity="0.50"/><rect x="18.13" y="242.80" width="4.50" height="0.9" fill="#5a5ab8" opacity="0.50"/><rect x="23.19" y="242.80" width="1.69" height="0.9" fill="#6a6a6a" opacity="0.50"/><rect x="25.44" y="242.80" width="1.12" height="0.9" fill="#5a5ab8" opacity="0.50"/><rect x="27.13" y="242.80" width="1.12" height="0.9" fill="#6a6a6a" opacity="0.50"/><rect x="28.81" y="242.80" width="3.37" height="0.9" fill="#5a5ab8" opacity="0.50"/><rect x="32.75" y="242.80" width="2.43" height="0.9" fill="#6a6a6a" opacity="0.50"/><rect x="6.82" y="245.93" width="4.50" height="0.9" fill="#5a5ab8" opacity="0.50"/><rect x="11.88" y="245.93" width="1.12" height="0.9" fill="#6a6a6a" opacity="0.50"/><rect x="13.57" y="245.93" width="1.69" height="0.9" fill="#5a5ab8" opacity="0.50"/><rect x="15.82" y="245.93" width="1.69" height="0.9" fill="#6a6a6a" opacity="0.50"/><rect x="9.14" y="248.84" width="2.81" height="0.9" fill="#e87a86" opacity="0.45"/><rect x="12.51" y="248.84" width="1.69" height="0.9" fill="#5a5ab8" opacity="0.50"/><rect x="14.76" y="248.84" width="1.12" height="0.9" fill="#e87a86" opacity="0.45"/><rect x="16.45" y="248.84" width="3.37" height="0.9" fill="#e87a86" opacity="0.45"/><rect x="20.38" y="248.84" width="1.69" height="0.9" fill="#e87a86" opacity="0.45"/><rect x="22.63" y="248.84" width="3.37" height="0.9" fill="#e87a86" opacity="0.45"/><rect x="26.57" y="248.84" width="2.81" height="0.9" fill="#5a5ab8" opacity="0.50"/><rect x="29.94" y="248.84" width="2.25" height="0.9" fill="#6a6a6a" opacity="0.50"/><rect x="32.75" y="248.84" width="1.69" height="0.9" fill="#e87a86" opacity="0.45"/><rect x="35.00" y="248.84" width="3.37" height="0.9" fill="#5a5ab8" opacity="0.50"/><rect x="38.93" y="248.84" width="0.87" height="0.9" fill="#e87a86" opacity="0.45"/><rect x="9.14" y="249.96" width="1.12" height="0.9" fill="#5a5ab8" opacity="0.50"/><rect x="10.82" y="249.96" width="1.69" height="0.9" fill="#6a6a6a" opacity="0.50"/><rect x="13.07" y="249.96" width="1.69" height="0.9" fill="#e87a86" opacity="0.45"/><rect x="15.32" y="249.96" width="4.50" height="0.9" fill="#e87a86" opacity="0.45"/><rect x="20.38" y="249.96" width="2.81" height="0.9" fill="#5a5ab8" opacity="0.50"/><rect x="23.76" y="249.96" width="2.25" height="0.9" fill="#6a6a6a" opacity="0.50"/><rect x="26.57" y="249.96" width="3.37" height="0.9" fill="#6a6a6a" opacity="0.50"/><rect x="30.50" y="249.96" width="4.50" height="0.9" fill="#e87a86" opacity="0.45"/><rect x="35.56" y="249.96" width="2.81" height="0.9" fill="#6a6a6a" opacity="0.50"/><rect x="38.93" y="249.96" width="2.25" height="0.9" fill="#6a6a6a" opacity="0.50"/><rect x="41.75" y="249.96" width="4.50" height="0.9" fill="#e87a86" opacity="0.45"/><rect x="46.81" y="249.96" width="2.25" height="0.9" fill="#6a6a6a" opacity="0.50"/><rect x="49.62" y="249.96" width="2.25" height="0.9" fill="#5a5ab8" opacity="0.50"/><rect x="52.43" y="249.96" width="2.25" height="0.9" fill="#e87a86" opacity="0.45"/><rect x="55.24" y="249.96" width="1.12" height="0.9" fill="#6a6a6a" opacity="0.50"/><rect x="56.92" y="249.96" width="1.69" height="0.9" fill="#5a5ab8" opacity="0.50"/><rect x="59.17" y="249.96" width="1.47" height="0.9" fill="#6a6a6a" opacity="0.50"/><rect x="9.14" y="251.42" width="2.25" height="0.9" fill="#6a6a6a" opacity="0.50"/><rect x="11.95" y="251.42" width="3.37" height="0.9" fill="#5a5ab8" opacity="0.50"/><rect x="15.88" y="251.42" width="2.25" height="0.9" fill="#6a6a6a" opacity="0.50"/><rect x="18.70" y="251.42" width="2.25" height="0.9" fill="#5a5ab8" opacity="0.50"/><rect x="21.51" y="251.42" width="4.50" height="0.9" fill="#6a6a6a" opacity="0.50"/><rect x="26.57" y="251.42" width="3.37" height="0.9" fill="#5a5ab8" opacity="0.50"/><rect x="30.50" y="251.42" width="4.50" height="0.9" fill="#6a6a6a" opacity="0.50"/><rect x="6.82" y="253.88" width="2.25" height="0.9" fill="#5a5ab8" opacity="0.50"/><rect x="9.63" y="253.88" width="4.50" height="0.9" fill="#6a6a6a" opacity="0.50"/><rect x="14.69" y="253.88" width="1.12" height="0.9" fill="#5a5ab8" opacity="0.50"/><rect x="16.38" y="253.88" width="1.44" height="0.9" fill="#6a6a6a" opacity="0.50"/><rect x="9.14" y="256.35" width="1.12" height="0.9" fill="#5a5ab8" opacity="0.50"/><rect x="10.82" y="256.35" width="1.69" height="0.9" fill="#e87a86" opacity="0.45"/><rect x="13.07" y="256.35" width="3.37" height="0.9" fill="#6a6a6a" opacity="0.50"/><rect x="17.01" y="256.35" width="2.81" height="0.9" fill="#e87a86" opacity="0.45"/><rect x="20.38" y="256.35" width="1.12" height="0.9" fill="#5a5ab8" opacity="0.50"/><rect x="22.07" y="256.35" width="2.81" height="0.9" fill="#5a5ab8" opacity="0.50"/><rect x="25.44" y="256.35" width="3.37" height="0.9" fill="#6a6a6a" opacity="0.50"/><rect x="29.38" y="256.35" width="1.12" height="0.9" fill="#6a6a6a" opacity="0.50"/><rect x="31.06" y="256.35" width="1.12" height="0.9" fill="#e87a86" opacity="0.45"/><rect x="32.75" y="256.35" width="2.25" height="0.9" fill="#6a6a6a" opacity="0.50"/><rect x="6.82" y="258.70" width="1.16" height="0.9" fill="#e87a86" opacity="0.45"/><rect x="6.82" y="261.61" width="2.25" height="0.9" fill="#e87a86" opacity="0.45"/><rect x="9.63" y="261.61" width="1.69" height="0.9" fill="#b860c0" opacity="0.50"/><rect x="11.88" y="261.61" width="3.37" height="0.9" fill="#b860c0" opacity="0.50"/><rect x="15.82" y="261.61" width="3.37" height="0.9" fill="#5a5ab8" opacity="0.50"/><rect x="19.75" y="261.61" width="1.69" height="0.9" fill="#b860c0" opacity="0.50"/><rect x="22.00" y="261.61" width="3.37" height="0.9" fill="#b860c0" opacity="0.50"/><rect x="25.94" y="261.61" width="1.14" height="0.9" fill="#5a5ab8" opacity="0.50"/><rect x="4.51" y="262.73" width="1.12" height="0.9" fill="#e87a86" opacity="0.45"/><rect x="4.51" y="265.42" width="1.69" height="0.9" fill="#5a5ab8" opacity="0.50"/><rect x="6.76" y="265.42" width="4.50" height="0.9" fill="#5a5ab8" opacity="0.50"/><rect x="11.45" y="265.42" width="1.69" height="0.9" fill="#b860c0" opacity="0.50"/><rect x="13.70" y="265.42" width="2.81" height="0.9" fill="#b860c0" opacity="0.50"/><rect x="17.07" y="265.42" width="1.12" height="0.9" fill="#b860c0" opacity="0.50"/><rect x="18.76" y="265.42" width="1.12" height="0.9" fill="#b860c0" opacity="0.50"/><rect x="20.45" y="265.42" width="2.00" height="0.9" fill="#b860c0" opacity="0.50"/><rect x="22.45" y="265.42" width="1.69" height="0.9" fill="#5a5ab8" opacity="0.50"/><rect x="24.70" y="265.42" width="4.50" height="0.9" fill="#e87a86" opacity="0.45"/><rect x="29.76" y="265.42" width="2.25" height="0.9" fill="#5a5ab8" opacity="0.50"/><rect x="32.57" y="265.42" width="2.81" height="0.9" fill="#e87a86" opacity="0.45"/><rect x="35.94" y="265.42" width="1.55" height="0.9" fill="#5a5ab8" opacity="0.50"/><rect x="6.82" y="267.10" width="1.12" height="0.9" fill="#5a5a5a" opacity="0.75"/><rect x="8.23" y="267.10" width="1.12" height="0.9" fill="#5a5a5a" opacity="0.75"/><rect x="9.63" y="267.10" width="2.40" height="0.9" fill="#5a5a5a" opacity="0.75"/><rect x="12.61" y="267.10" width="3.37" height="0.9" fill="#5a5a5a" opacity="0.75"/><rect x="16.26" y="267.10" width="1.55" height="0.9" fill="#5a5a5a" opacity="0.75"/><rect x="18.40" y="267.10" width="3.37" height="0.9" fill="#6a6ac8" opacity="0.60"/><rect x="22.05" y="267.10" width="3.87" height="0.9" fill="#6a6ac8" opacity="0.60"/><rect x="25.92" y="267.10" width="3.37" height="0.9" fill="#c9a870" opacity="0.55"/><rect x="29.57" y="267.10" width="2.81" height="0.9" fill="#c9a870" opacity="0.55"/><rect x="32.67" y="267.10" width="3.37" height="0.9" fill="#c9a870" opacity="0.55"/><rect x="36.32" y="267.10" width="3.37" height="0.9" fill="#c9a870" opacity="0.55"/><rect x="39.98" y="267.10" width="1.57" height="0.9" fill="#c9a870" opacity="0.55"/><rect x="41.55" y="267.10" width="2.81" height="0.9" fill="#5a5a5a" opacity="0.75"/><rect x="44.64" y="267.10" width="1.69" height="0.9" fill="#5a5a5a" opacity="0.75"/><rect x="46.61" y="267.10" width="1.12" height="0.9" fill="#5a5a5a" opacity="0.75"/><rect x="48.01" y="267.10" width="3.37" height="0.9" fill="#5a5a5a" opacity="0.75"/><rect x="51.66" y="267.10" width="2.81" height="0.9" fill="#5a5a5a" opacity="0.75"/><rect x="54.76" y="267.10" width="1.69" height="0.9" fill="#5a5a5a" opacity="0.75"/><rect x="56.72" y="267.10" width="1.12" height="0.9" fill="#5a5a5a" opacity="0.75"/><rect x="58.13" y="267.10" width="1.12" height="0.9" fill="#6a6a6a" opacity="0.50"/><rect x="59.82" y="267.10" width="3.37" height="0.9" fill="#5a5a5a" opacity="0.75"/><rect x="6.82" y="268.22" width="1.69" height="0.9" fill="#5a5a5a" opacity="0.75"/><rect x="8.79" y="268.22" width="2.81" height="0.9" fill="#5a5a5a" opacity="0.75"/><rect x="12.61" y="268.22" width="1.69" height="0.9" fill="#5a5a5a" opacity="0.75"/><rect x="14.58" y="268.22" width="3.24" height="0.9" fill="#5a5a5a" opacity="0.75"/><rect x="18.40" y="268.22" width="3.37" height="0.9" fill="#6a6ac8" opacity="0.60"/><rect x="22.05" y="268.22" width="3.87" height="0.9" fill="#6a6ac8" opacity="0.60"/><rect x="25.92" y="268.22" width="3.37" height="0.9" fill="#c9a870" opacity="0.55"/><rect x="29.57" y="268.22" width="4.50" height="0.9" fill="#c9a870" opacity="0.55"/><rect x="34.35" y="268.22" width="4.50" height="0.9" fill="#c9a870" opacity="0.55"/><rect x="39.13" y="268.22" width="2.41" height="0.9" fill="#c9a870" opacity="0.55"/><rect x="41.55" y="268.22" width="3.37" height="0.9" fill="#5a5a5a" opacity="0.75"/><rect x="45.20" y="268.22" width="3.37" height="0.9" fill="#6a6a6a" opacity="0.50"/><rect x="49.14" y="268.22" width="1.12" height="0.9" fill="#6a6a6a" opacity="0.50"/><rect x="50.82" y="268.22" width="4.50" height="0.9" fill="#5a5a5a" opacity="0.75"/><rect x="55.60" y="268.22" width="4.50" height="0.9" fill="#e87a86" opacity="0.45"/><rect x="6.82" y="269.34" width="4.50" height="0.9" fill="#5a5a5a" opacity="0.75"/><rect x="11.60" y="269.34" width="0.43" height="0.9" fill="#5a5a5a" opacity="0.75"/><rect x="12.61" y="269.34" width="1.12" height="0.9" fill="#5a5a5a" opacity="0.75"/><rect x="14.02" y="269.34" width="2.81" height="0.9" fill="#5a5a5a" opacity="0.75"/><rect x="17.11" y="269.34" width="0.71" height="0.9" fill="#5a5a5a" opacity="0.75"/><rect x="18.40" y="269.34" width="4.50" height="0.9" fill="#6a6ac8" opacity="0.60"/><rect x="23.18" y="269.34" width="2.74" height="0.9" fill="#6a6ac8" opacity="0.60"/><rect x="25.92" y="269.34" width="1.12" height="0.9" fill="#c9a870" opacity="0.55"/><rect x="27.33" y="269.34" width="4.50" height="0.9" fill="#c9a870" opacity="0.55"/><rect x="32.10" y="269.34" width="4.50" height="0.9" fill="#c9a870" opacity="0.55"/><rect x="36.88" y="269.34" width="2.81" height="0.9" fill="#c9a870" opacity="0.55"/><rect x="39.98" y="269.34" width="1.57" height="0.9" fill="#c9a870" opacity="0.55"/><rect x="41.55" y="269.34" width="1.69" height="0.9" fill="#5a5a5a" opacity="0.75"/><rect x="43.51" y="269.34" width="2.25" height="0.9" fill="#5a5a5a" opacity="0.75"/><rect x="46.04" y="269.34" width="4.50" height="0.9" fill="#5a5a5a" opacity="0.75"/><rect x="50.82" y="269.34" width="1.12" height="0.9" fill="#6a6a6a" opacity="0.50"/><rect x="52.51" y="269.34" width="4.50" height="0.9" fill="#6a6a6a" opacity="0.50"/><rect x="57.57" y="269.34" width="4.50" height="0.9" fill="#5a5a5a" opacity="0.75"/><rect x="62.35" y="269.34" width="1.19" height="0.9" fill="#6a6a6a" opacity="0.50"/><rect x="6.82" y="270.46" width="4.50" height="0.9" fill="#5a5a5a" opacity="0.75"/><rect x="11.60" y="270.46" width="0.43" height="0.9" fill="#5a5a5a" opacity="0.75"/><rect x="12.61" y="270.46" width="4.50" height="0.9" fill="#5a5a5a" opacity="0.75"/><rect x="17.39" y="270.46" width="0.43" height="0.9" fill="#5a5a5a" opacity="0.75"/><rect x="18.40" y="270.46" width="2.25" height="0.9" fill="#6a6ac8" opacity="0.60"/><rect x="20.93" y="270.46" width="2.25" height="0.9" fill="#6a6ac8" opacity="0.60"/><rect x="23.46" y="270.46" width="2.46" height="0.9" fill="#6a6ac8" opacity="0.60"/><rect x="25.92" y="270.46" width="1.69" height="0.9" fill="#c9a870" opacity="0.55"/><rect x="27.89" y="270.46" width="1.12" height="0.9" fill="#c9a870" opacity="0.55"/><rect x="29.29" y="270.46" width="3.37" height="0.9" fill="#c9a870" opacity="0.55"/><rect x="32.95" y="270.46" width="1.12" height="0.9" fill="#c9a870" opacity="0.55"/><rect x="34.35" y="270.46" width="1.69" height="0.9" fill="#c9a870" opacity="0.55"/><rect x="36.32" y="270.46" width="2.25" height="0.9" fill="#c9a870" opacity="0.55"/><rect x="38.85" y="270.46" width="1.69" height="0.9" fill="#c9a870" opacity="0.55"/><rect x="40.82" y="270.46" width="0.73" height="0.9" fill="#c9a870" opacity="0.55"/><rect x="41.55" y="270.46" width="1.69" height="0.9" fill="#5a5a5a" opacity="0.75"/><rect x="43.51" y="270.46" width="4.50" height="0.9" fill="#6a6a6a" opacity="0.50"/><rect x="48.57" y="270.46" width="1.69" height="0.9" fill="#e87a86" opacity="0.45"/><rect x="50.82" y="270.46" width="2.25" height="0.9" fill="#6a6a6a" opacity="0.50"/><rect x="53.63" y="270.46" width="1.69" height="0.9" fill="#e87a86" opacity="0.45"/><rect x="55.88" y="270.46" width="2.45" height="0.9" fill="#6a6a6a" opacity="0.50"/><rect x="6.82" y="271.58" width="2.81" height="0.9" fill="#5a5a5a" opacity="0.75"/><rect x="9.92" y="271.58" width="2.12" height="0.9" fill="#5a5a5a" opacity="0.75"/><rect x="12.61" y="271.58" width="3.37" height="0.9" fill="#5a5a5a" opacity="0.75"/><rect x="16.26" y="271.58" width="1.55" height="0.9" fill="#5a5a5a" opacity="0.75"/><rect x="18.40" y="271.58" width="1.12" height="0.9" fill="#6a6ac8" opacity="0.60"/><rect x="19.80" y="271.58" width="1.12" height="0.9" fill="#6a6ac8" opacity="0.60"/><rect x="21.21" y="271.58" width="2.81" height="0.9" fill="#6a6ac8" opacity="0.60"/><rect x="24.30" y="271.58" width="1.62" height="0.9" fill="#6a6ac8" opacity="0.60"/><rect x="25.92" y="271.58" width="1.69" height="0.9" fill="#c9a870" opacity="0.55"/><rect x="27.89" y="271.58" width="3.37" height="0.9" fill="#c9a870" opacity="0.55"/><rect x="31.54" y="271.58" width="2.25" height="0.9" fill="#c9a870" opacity="0.55"/><rect x="34.07" y="271.58" width="1.69" height="0.9" fill="#c9a870" opacity="0.55"/><rect x="36.04" y="271.58" width="2.81" height="0.9" fill="#c9a870" opacity="0.55"/><rect x="39.13" y="271.58" width="2.41" height="0.9" fill="#c9a870" opacity="0.55"/><rect x="41.55" y="271.58" width="3.37" height="0.9" fill="#5a5a5a" opacity="0.75"/><rect x="45.20" y="271.58" width="3.37" height="0.9" fill="#5a5a5a" opacity="0.75"/><rect x="48.85" y="271.58" width="1.69" height="0.9" fill="#5a5a5a" opacity="0.75"/><rect x="50.82" y="271.58" width="1.12" height="0.9" fill="#5a5a5a" opacity="0.75"/><rect x="52.23" y="271.58" width="1.12" height="0.9" fill="#6a6a6a" opacity="0.50"/><rect x="53.91" y="271.58" width="1.69" height="0.9" fill="#6a6a6a" opacity="0.50"/><rect x="56.16" y="271.58" width="1.69" height="0.9" fill="#5a5a5a" opacity="0.75"/><rect x="58.13" y="271.58" width="1.12" height="0.9" fill="#5a5a5a" opacity="0.75"/><rect x="59.54" y="271.58" width="1.69" height="0.9" fill="#5a5a5a" opacity="0.75"/><rect x="61.50" y="271.58" width="2.03" height="0.9" fill="#5a5a5a" opacity="0.75"/><rect x="6.82" y="272.70" width="4.50" height="0.9" fill="#5a5a5a" opacity="0.75"/><rect x="11.60" y="272.70" width="0.43" height="0.9" fill="#5a5a5a" opacity="0.75"/><rect x="12.61" y="272.70" width="1.12" height="0.9" fill="#5a5a5a" opacity="0.75"/><rect x="14.02" y="272.70" width="3.37" height="0.9" fill="#5a5a5a" opacity="0.75"/><rect x="18.40" y="272.70" width="2.25" height="0.9" fill="#6a6ac8" opacity="0.60"/><rect x="20.93" y="272.70" width="1.69" height="0.9" fill="#6a6ac8" opacity="0.60"/><rect x="22.89" y="272.70" width="3.03" height="0.9" fill="#6a6ac8" opacity="0.60"/><rect x="25.92" y="272.70" width="4.50" height="0.9" fill="#c9a870" opacity="0.55"/><rect x="30.70" y="272.70" width="1.12" height="0.9" fill="#c9a870" opacity="0.55"/><rect x="32.10" y="272.70" width="4.50" height="0.9" fill="#c9a870" opacity="0.55"/><rect x="36.88" y="272.70" width="2.81" height="0.9" fill="#c9a870" opacity="0.55"/><rect x="39.98" y="272.70" width="1.12" height="0.9" fill="#c9a870" opacity="0.55"/><rect x="41.55" y="272.70" width="1.69" height="0.9" fill="#5a5a5a" opacity="0.75"/><rect x="43.51" y="272.70" width="1.69" height="0.9" fill="#5a5a5a" opacity="0.75"/><rect x="45.48" y="272.70" width="1.12" height="0.9" fill="#5a5a5a" opacity="0.75"/><rect x="46.89" y="272.70" width="4.50" height="0.9" fill="#5a5a5a" opacity="0.75"/><rect x="51.66" y="272.70" width="4.50" height="0.9" fill="#6a6a6a" opacity="0.50"/><rect x="56.72" y="272.70" width="2.81" height="0.9" fill="#5a5a5a" opacity="0.75"/><rect x="59.82" y="272.70" width="1.69" height="0.9" fill="#5a5a5a" opacity="0.75"/><rect x="61.78" y="272.70" width="1.75" height="0.9" fill="#5a5a5a" opacity="0.75"/><rect x="6.82" y="273.82" width="2.25" height="0.9" fill="#5a5a5a" opacity="0.75"/><rect x="9.35" y="273.82" width="2.25" height="0.9" fill="#5a5a5a" opacity="0.75"/><rect x="12.61" y="273.82" width="2.25" height="0.9" fill="#5a5a5a" opacity="0.75"/><rect x="15.14" y="273.82" width="2.68" height="0.9" fill="#5a5a5a" opacity="0.75"/><rect x="18.40" y="273.82" width="2.25" height="0.9" fill="#6a6ac8" opacity="0.60"/><rect x="20.93" y="273.82" width="1.12" height="0.9" fill="#6a6ac8" opacity="0.60"/><rect x="22.33" y="273.82" width="2.25" height="0.9" fill="#6a6ac8" opacity="0.60"/><rect x="24.86" y="273.82" width="1.06" height="0.9" fill="#6a6ac8" opacity="0.60"/><rect x="25.92" y="273.82" width="2.25" height="0.9" fill="#c9a870" opacity="0.55"/><rect x="28.45" y="273.82" width="1.12" height="0.9" fill="#c9a870" opacity="0.55"/><rect x="29.86" y="273.82" width="4.50" height="0.9" fill="#c9a870" opacity="0.55"/><rect x="34.63" y="273.82" width="2.25" height="0.9" fill="#c9a870" opacity="0.55"/><rect x="37.16" y="273.82" width="2.25" height="0.9" fill="#c9a870" opacity="0.55"/><rect x="39.69" y="273.82" width="1.85" height="0.9" fill="#c9a870" opacity="0.55"/><rect x="41.55" y="273.82" width="3.37" height="0.9" fill="#e87a86" opacity="0.45"/><rect x="45.48" y="273.82" width="2.25" height="0.9" fill="#6a6a6a" opacity="0.50"/><rect x="48.29" y="273.82" width="4.50" height="0.9" fill="#5a5a5a" opacity="0.75"/><rect x="53.07" y="273.82" width="2.81" height="0.9" fill="#5a5a5a" opacity="0.75"/><rect x="6.82" y="274.94" width="2.81" height="0.9" fill="#5a5a5a" opacity="0.75"/><rect x="9.92" y="274.94" width="2.12" height="0.9" fill="#5a5a5a" opacity="0.75"/><rect x="12.61" y="274.94" width="1.12" height="0.9" fill="#5a5a5a" opacity="0.75"/><rect x="14.02" y="274.94" width="2.25" height="0.9" fill="#5a5a5a" opacity="0.75"/><rect x="16.55" y="274.94" width="1.27" height="0.9" fill="#5a5a5a" opacity="0.75"/><rect x="18.40" y="274.94" width="4.50" height="0.9" fill="#6a6ac8" opacity="0.60"/><rect x="23.18" y="274.94" width="1.12" height="0.9" fill="#6a6ac8" opacity="0.60"/><rect x="24.58" y="274.94" width="1.34" height="0.9" fill="#6a6ac8" opacity="0.60"/><rect x="25.92" y="274.94" width="3.37" height="0.9" fill="#c9a870" opacity="0.55"/><rect x="29.57" y="274.94" width="1.69" height="0.9" fill="#c9a870" opacity="0.55"/><rect x="31.54" y="274.94" width="4.50" height="0.9" fill="#c9a870" opacity="0.55"/><rect x="36.32" y="274.94" width="1.12" height="0.9" fill="#c9a870" opacity="0.55"/><rect x="37.73" y="274.94" width="3.37" height="0.9" fill="#c9a870" opacity="0.55"/><rect x="41.55" y="274.94" width="2.25" height="0.9" fill="#5a5a5a" opacity="0.75"/><rect x="44.08" y="274.94" width="2.81" height="0.9" fill="#5a5a5a" opacity="0.75"/><rect x="47.17" y="274.94" width="3.37" height="0.9" fill="#5a5a5a" opacity="0.75"/><rect x="50.82" y="274.94" width="2.25" height="0.9" fill="#5a5a5a" opacity="0.75"/><rect x="53.35" y="274.94" width="1.12" height="0.9" fill="#6a6a6a" opacity="0.50"/><rect x="55.04" y="274.94" width="2.81" height="0.9" fill="#5a5a5a" opacity="0.75"/><rect x="58.13" y="274.94" width="2.81" height="0.9" fill="#5a5a5a" opacity="0.75"/><rect x="61.22" y="274.94" width="2.31" height="0.9" fill="#6a6a6a" opacity="0.50"/><rect x="6.82" y="276.06" width="2.25" height="0.9" fill="#5a5a5a" opacity="0.75"/><rect x="9.35" y="276.06" width="2.68" height="0.9" fill="#5a5a5a" opacity="0.75"/><rect x="12.61" y="276.06" width="2.25" height="0.9" fill="#5a5a5a" opacity="0.75"/><rect x="15.14" y="276.06" width="2.68" height="0.9" fill="#5a5a5a" opacity="0.75"/><rect x="18.40" y="276.06" width="1.69" height="0.9" fill="#6a6ac8" opacity="0.60"/><rect x="20.36" y="276.06" width="2.25" height="0.9" fill="#6a6ac8" opacity="0.60"/><rect x="22.89" y="276.06" width="1.69" height="0.9" fill="#6a6ac8" opacity="0.60"/><rect x="24.86" y="276.06" width="1.06" height="0.9" fill="#6a6ac8" opacity="0.60"/><rect x="25.92" y="276.06" width="1.69" height="0.9" fill="#c9a870" opacity="0.55"/><rect x="27.89" y="276.06" width="2.81" height="0.9" fill="#c9a870" opacity="0.55"/><rect x="30.98" y="276.06" width="1.69" height="0.9" fill="#c9a870" opacity="0.55"/><rect x="32.95" y="276.06" width="1.12" height="0.9" fill="#c9a870" opacity="0.55"/><rect x="34.35" y="276.06" width="4.50" height="0.9" fill="#c9a870" opacity="0.55"/><rect x="39.13" y="276.06" width="1.12" height="0.9" fill="#c9a870" opacity="0.55"/><rect x="40.54" y="276.06" width="1.01" height="0.9" fill="#c9a870" opacity="0.55"/><rect x="41.55" y="276.06" width="4.50" height="0.9" fill="#6a6a6a" opacity="0.50"/><rect x="46.61" y="276.06" width="1.12" height="0.9" fill="#6a6a6a" opacity="0.50"/><rect x="48.29" y="276.06" width="2.25" height="0.9" fill="#5a5a5a" opacity="0.75"/><rect x="50.82" y="276.06" width="2.81" height="0.9" fill="#e87a86" opacity="0.45"/><rect x="54.19" y="276.06" width="4.50" height="0.9" fill="#5a5a5a" opacity="0.75"/><rect x="58.97" y="276.06" width="1.67" height="0.9" fill="#5a5a5a" opacity="0.75"/><rect x="6.82" y="277.18" width="2.25" height="0.9" fill="#5a5a5a" opacity="0.75"/><rect x="9.35" y="277.18" width="1.69" height="0.9" fill="#5a5a5a" opacity="0.75"/><rect x="11.32" y="277.18" width="0.71" height="0.9" fill="#5a5a5a" opacity="0.75"/><rect x="12.61" y="277.18" width="2.25" height="0.9" fill="#5a5a5a" opacity="0.75"/><rect x="15.14" y="277.18" width="2.68" height="0.9" fill="#5a5a5a" opacity="0.75"/><rect x="18.40" y="277.18" width="3.37" height="0.9" fill="#6a6ac8" opacity="0.60"/><rect x="22.05" y="277.18" width="3.37" height="0.9" fill="#6a6ac8" opacity="0.60"/><rect x="25.92" y="277.18" width="1.69" height="0.9" fill="#c9a870" opacity="0.55"/><rect x="27.89" y="277.18" width="2.81" height="0.9" fill="#c9a870" opacity="0.55"/><rect x="30.98" y="277.18" width="4.50" height="0.9" fill="#c9a870" opacity="0.55"/><rect x="35.76" y="277.18" width="1.69" height="0.9" fill="#c9a870" opacity="0.55"/><rect x="37.73" y="277.18" width="2.81" height="0.9" fill="#c9a870" opacity="0.55"/><rect x="40.82" y="277.18" width="0.73" height="0.9" fill="#c9a870" opacity="0.55"/><rect x="41.55" y="277.18" width="3.37" height="0.9" fill="#6a6a6a" opacity="0.50"/><rect x="45.48" y="277.18" width="4.50" height="0.9" fill="#6a6a6a" opacity="0.50"/><rect x="50.54" y="277.18" width="4.50" height="0.9" fill="#5a5a5a" opacity="0.75"/><rect x="55.32" y="277.18" width="2.25" height="0.9" fill="#6a6a6a" opacity="0.50"/><rect x="58.13" y="277.18" width="2.25" height="0.9" fill="#6a6a6a" opacity="0.50"/><rect x="60.94" y="277.18" width="1.69" height="0.9" fill="#e87a86" opacity="0.45"/><rect x="63.19" y="277.18" width="0.35" height="0.9" fill="#6a6a6a" opacity="0.50"/><rect x="6.82" y="278.30" width="4.50" height="0.9" fill="#5a5a5a" opacity="0.75"/><rect x="11.60" y="278.30" width="0.43" height="0.9" fill="#5a5a5a" opacity="0.75"/><rect x="12.61" y="278.30" width="1.69" height="0.9" fill="#5a5a5a" opacity="0.75"/><rect x="14.58" y="278.30" width="2.81" height="0.9" fill="#5a5a5a" opacity="0.75"/><rect x="18.40" y="278.30" width="2.81" height="0.9" fill="#6a6ac8" opacity="0.60"/><rect x="21.49" y="278.30" width="4.43" height="0.9" fill="#6a6ac8" opacity="0.60"/><rect x="25.92" y="278.30" width="2.25" height="0.9" fill="#c9a870" opacity="0.55"/><rect x="28.45" y="278.30" width="3.37" height="0.9" fill="#c9a870" opacity="0.55"/><rect x="32.10" y="278.30" width="1.69" height="0.9" fill="#c9a870" opacity="0.55"/><rect x="34.07" y="278.30" width="1.69" height="0.9" fill="#c9a870" opacity="0.55"/><rect x="36.04" y="278.30" width="2.25" height="0.9" fill="#c9a870" opacity="0.55"/><rect x="38.57" y="278.30" width="2.81" height="0.9" fill="#c9a870" opacity="0.55"/><rect x="41.55" y="278.30" width="4.50" height="0.9" fill="#5a5a5a" opacity="0.75"/><rect x="46.32" y="278.30" width="3.37" height="0.9" fill="#5a5a5a" opacity="0.75"/><rect x="49.98" y="278.30" width="2.25" height="0.9" fill="#6a6a6a" opacity="0.50"/><rect x="52.79" y="278.30" width="4.50" height="0.9" fill="#6a6a6a" opacity="0.50"/><rect x="57.85" y="278.30" width="1.69" height="0.9" fill="#5a5a5a" opacity="0.75"/><rect x="59.82" y="278.30" width="1.69" height="0.9" fill="#6a6a6a" opacity="0.50"/><rect x="62.07" y="278.30" width="1.47" height="0.9" fill="#6a6a6a" opacity="0.50"/><rect x="6.82" y="279.42" width="2.25" height="0.9" fill="#5a5a5a" opacity="0.75"/><rect x="9.35" y="279.42" width="1.69" height="0.9" fill="#5a5a5a" opacity="0.75"/><rect x="11.32" y="279.42" width="0.71" height="0.9" fill="#5a5a5a" opacity="0.75"/><rect x="12.61" y="279.42" width="2.25" height="0.9" fill="#5a5a5a" opacity="0.75"/><rect x="15.14" y="279.42" width="1.69" height="0.9" fill="#5a5a5a" opacity="0.75"/><rect x="17.11" y="279.42" width="0.71" height="0.9" fill="#5a5a5a" opacity="0.75"/><rect x="18.40" y="279.42" width="4.50" height="0.9" fill="#6a6ac8" opacity="0.60"/><rect x="23.18" y="279.42" width="1.12" height="0.9" fill="#6a6ac8" opacity="0.60"/><rect x="24.58" y="279.42" width="1.34" height="0.9" fill="#6a6ac8" opacity="0.60"/><rect x="25.92" y="279.42" width="4.50" height="0.9" fill="#c9a870" opacity="0.55"/><rect x="30.70" y="279.42" width="1.12" height="0.9" fill="#c9a870" opacity="0.55"/><rect x="32.10" y="279.42" width="1.69" height="0.9" fill="#c9a870" opacity="0.55"/><rect x="34.07" y="279.42" width="2.81" height="0.9" fill="#c9a870" opacity="0.55"/><rect x="37.16" y="279.42" width="1.69" height="0.9" fill="#c9a870" opacity="0.55"/><rect x="39.13" y="279.42" width="1.69" height="0.9" fill="#c9a870" opacity="0.55"/><rect x="41.10" y="279.42" width="0.45" height="0.9" fill="#c9a870" opacity="0.55"/><rect x="41.55" y="279.42" width="4.50" height="0.9" fill="#6a6a6a" opacity="0.50"/><rect x="46.61" y="279.42" width="2.81" height="0.9" fill="#6a6a6a" opacity="0.50"/><rect x="49.98" y="279.42" width="1.69" height="0.9" fill="#5a5a5a" opacity="0.75"/><rect x="51.95" y="279.42" width="4.50" height="0.9" fill="#5a5a5a" opacity="0.75"/><rect x="56.72" y="279.42" width="1.60" height="0.9" fill="#5a5a5a" opacity="0.75"/><rect x="6.82" y="280.54" width="2.81" height="0.9" fill="#5a5a5a" opacity="0.75"/><rect x="9.92" y="280.54" width="2.12" height="0.9" fill="#5a5a5a" opacity="0.75"/><rect x="12.61" y="280.54" width="1.12" height="0.9" fill="#5a5a5a" opacity="0.75"/><rect x="14.02" y="280.54" width="1.12" height="0.9" fill="#5a5a5a" opacity="0.75"/><rect x="15.42" y="280.54" width="2.40" height="0.9" fill="#5a5a5a" opacity="0.75"/><rect x="18.40" y="280.54" width="2.81" height="0.9" fill="#6a6ac8" opacity="0.60"/><rect x="21.49" y="280.54" width="4.43" height="0.9" fill="#6a6ac8" opacity="0.60"/><rect x="25.92" y="280.54" width="1.69" height="0.9" fill="#c9a870" opacity="0.55"/><rect x="27.89" y="280.54" width="3.37" height="0.9" fill="#c9a870" opacity="0.55"/><rect x="31.54" y="280.54" width="4.50" height="0.9" fill="#c9a870" opacity="0.55"/><rect x="36.32" y="280.54" width="2.25" height="0.9" fill="#c9a870" opacity="0.55"/><rect x="38.85" y="280.54" width="2.69" height="0.9" fill="#c9a870" opacity="0.55"/><rect x="41.55" y="280.54" width="1.12" height="0.9" fill="#5a5a5a" opacity="0.75"/><rect x="42.95" y="280.54" width="2.25" height="0.9" fill="#6a6a6a" opacity="0.50"/><rect x="45.76" y="280.54" width="4.50" height="0.9" fill="#e87a86" opacity="0.45"/><rect x="50.82" y="280.54" width="1.12" height="0.9" fill="#5a5a5a" opacity="0.75"/><rect x="52.23" y="280.54" width="2.81" height="0.9" fill="#6a6a6a" opacity="0.50"/><rect x="55.60" y="280.54" width="3.37" height="0.9" fill="#e87a86" opacity="0.45"/><rect x="59.54" y="280.54" width="1.69" height="0.9" fill="#6a6a6a" opacity="0.50"/><rect x="61.78" y="280.54" width="1.69" height="0.9" fill="#5a5a5a" opacity="0.75"/><rect x="6.82" y="281.66" width="4.50" height="0.9" fill="#5a5a5a" opacity="0.75"/><rect x="11.60" y="281.66" width="0.43" height="0.9" fill="#5a5a5a" opacity="0.75"/><rect x="12.61" y="281.66" width="2.81" height="0.9" fill="#5a5a5a" opacity="0.75"/><rect x="15.70" y="281.66" width="2.12" height="0.9" fill="#5a5a5a" opacity="0.75"/><rect x="18.40" y="281.66" width="2.25" height="0.9" fill="#6a6ac8" opacity="0.60"/><rect x="20.93" y="281.66" width="2.25" height="0.9" fill="#6a6ac8" opacity="0.60"/><rect x="23.46" y="281.66" width="2.46" height="0.9" fill="#6a6ac8" opacity="0.60"/><rect x="25.92" y="281.66" width="4.50" height="0.9" fill="#c9a870" opacity="0.55"/><rect x="30.70" y="281.66" width="1.12" height="0.9" fill="#c9a870" opacity="0.55"/><rect x="32.10" y="281.66" width="2.81" height="0.9" fill="#c9a870" opacity="0.55"/><rect x="35.20" y="281.66" width="1.69" height="0.9" fill="#c9a870" opacity="0.55"/><rect x="37.16" y="281.66" width="2.81" height="0.9" fill="#c9a870" opacity="0.55"/><rect x="40.26" y="281.66" width="1.29" height="0.9" fill="#c9a870" opacity="0.55"/><rect x="41.55" y="281.66" width="4.50" height="0.9" fill="#5a5a5a" opacity="0.75"/><rect x="46.32" y="281.66" width="2.25" height="0.9" fill="#e87a86" opacity="0.45"/><rect x="49.14" y="281.66" width="2.81" height="0.9" fill="#e87a86" opacity="0.45"/><rect x="52.51" y="281.66" width="1.12" height="0.9" fill="#6a6a6a" opacity="0.50"/><rect x="54.19" y="281.66" width="2.81" height="0.9" fill="#6a6a6a" opacity="0.50"/><rect x="57.57" y="281.66" width="4.50" height="0.9" fill="#5a5a5a" opacity="0.75"/><rect x="62.35" y="281.66" width="1.19" height="0.9" fill="#6a6a6a" opacity="0.50"/><rect x="6.82" y="282.78" width="1.12" height="0.9" fill="#5a5a5a" opacity="0.75"/><rect x="8.23" y="282.78" width="2.81" height="0.9" fill="#5a5a5a" opacity="0.75"/><rect x="11.32" y="282.78" width="0.71" height="0.9" fill="#5a5a5a" opacity="0.75"/><rect x="12.61" y="282.78" width="1.12" height="0.9" fill="#5a5a5a" opacity="0.75"/><rect x="14.02" y="282.78" width="1.12" height="0.9" fill="#5a5a5a" opacity="0.75"/><rect x="15.42" y="282.78" width="2.25" height="0.9" fill="#5a5a5a" opacity="0.75"/><rect x="18.40" y="282.78" width="3.37" height="0.9" fill="#6a6ac8" opacity="0.60"/><rect x="22.05" y="282.78" width="1.69" height="0.9" fill="#6a6ac8" opacity="0.60"/><rect x="24.02" y="282.78" width="1.69" height="0.9" fill="#6a6ac8" opacity="0.60"/><rect x="25.92" y="282.78" width="4.50" height="0.9" fill="#c9a870" opacity="0.55"/><rect x="30.70" y="282.78" width="1.69" height="0.9" fill="#c9a870" opacity="0.55"/><rect x="32.67" y="282.78" width="3.37" height="0.9" fill="#c9a870" opacity="0.55"/><rect x="36.32" y="282.78" width="2.25" height="0.9" fill="#c9a870" opacity="0.55"/><rect x="38.85" y="282.78" width="1.12" height="0.9" fill="#c9a870" opacity="0.55"/><rect x="40.26" y="282.78" width="1.29" height="0.9" fill="#c9a870" opacity="0.55"/><rect x="41.55" y="282.78" width="2.81" height="0.9" fill="#6a6a6a" opacity="0.50"/><rect x="44.92" y="282.78" width="1.69" height="0.9" fill="#e87a86" opacity="0.45"/><rect x="47.17" y="282.78" width="3.37" height="0.9" fill="#5a5a5a" opacity="0.75"/><rect x="50.82" y="282.78" width="4.50" height="0.9" fill="#6a6a6a" opacity="0.50"/><rect x="55.88" y="282.78" width="3.37" height="0.9" fill="#6a6a6a" opacity="0.50"/><rect x="59.82" y="282.78" width="0.83" height="0.9" fill="#e87a86" opacity="0.45"/><rect x="6.82" y="283.90" width="1.69" height="0.9" fill="#5a5a5a" opacity="0.75"/><rect x="8.79" y="283.90" width="3.24" height="0.9" fill="#5a5a5a" opacity="0.75"/><rect x="12.61" y="283.90" width="1.69" height="0.9" fill="#5a5a5a" opacity="0.75"/><rect x="14.58" y="283.90" width="2.81" height="0.9" fill="#5a5a5a" opacity="0.75"/><rect x="18.40" y="283.90" width="3.37" height="0.9" fill="#6a6ac8" opacity="0.60"/><rect x="22.05" y="283.90" width="1.12" height="0.9" fill="#6a6ac8" opacity="0.60"/><rect x="23.46" y="283.90" width="2.46" height="0.9" fill="#6a6ac8" opacity="0.60"/><rect x="25.92" y="283.90" width="3.37" height="0.9" fill="#c9a870" opacity="0.55"/><rect x="29.57" y="283.90" width="2.25" height="0.9" fill="#c9a870" opacity="0.55"/><rect x="32.10" y="283.90" width="4.50" height="0.9" fill="#c9a870" opacity="0.55"/><rect x="36.88" y="283.90" width="1.12" height="0.9" fill="#c9a870" opacity="0.55"/><rect x="38.29" y="283.90" width="2.25" height="0.9" fill="#c9a870" opacity="0.55"/><rect x="40.82" y="283.90" width="0.73" height="0.9" fill="#c9a870" opacity="0.55"/><rect x="41.55" y="283.90" width="2.81" height="0.9" fill="#e87a86" opacity="0.45"/><rect x="44.92" y="283.90" width="1.12" height="0.9" fill="#5a5a5a" opacity="0.75"/><rect x="46.32" y="283.90" width="1.12" height="0.9" fill="#e87a86" opacity="0.45"/><rect x="48.01" y="283.90" width="2.81" height="0.9" fill="#6a6a6a" opacity="0.50"/><rect x="51.38" y="283.90" width="3.37" height="0.9" fill="#6a6a6a" opacity="0.50"/><rect x="55.32" y="283.90" width="1.12" height="0.9" fill="#5a5a5a" opacity="0.75"/><rect x="56.72" y="283.90" width="2.25" height="0.9" fill="#e87a86" opacity="0.45"/><rect x="59.54" y="283.90" width="3.37" height="0.9" fill="#5a5a5a" opacity="0.75"/><rect x="63.19" y="283.90" width="0.35" height="0.9" fill="#e87a86" opacity="0.45"/><rect x="4.51" y="286.36" width="1.69" height="0.9" fill="#5a5ab8" opacity="0.50"/><rect x="6.76" y="286.36" width="1.69" height="0.9" fill="#5a5ab8" opacity="0.50"/><rect x="9.01" y="286.36" width="1.69" height="0.9" fill="#5a5ab8" opacity="0.50"/><rect x="11.45" y="286.36" width="1.12" height="0.9" fill="#b860c0" opacity="0.50"/><rect x="13.14" y="286.36" width="4.50" height="0.9" fill="#b860c0" opacity="0.50"/><rect x="18.20" y="286.36" width="1.69" height="0.9" fill="#b860c0" opacity="0.50"/><rect x="20.45" y="286.36" width="2.00" height="0.9" fill="#b860c0" opacity="0.50"/><rect x="22.45" y="286.36" width="4.50" height="0.9" fill="#5a5ab8" opacity="0.50"/><rect x="27.51" y="286.36" width="3.37" height="0.9" fill="#e87a86" opacity="0.45"/><rect x="31.44" y="286.36" width="4.50" height="0.9" fill="#5a5ab8" opacity="0.50"/><rect x="36.50" y="286.36" width="0.99" height="0.9" fill="#e87a86" opacity="0.45"/><rect x="4.51" y="287.60" width="1.16" height="0.9" fill="#e87a86" opacity="0.45"/><rect x="6.82" y="287.60" width="2.25" height="0.9" fill="#6a6a6a" opacity="0.50"/><rect x="9.63" y="287.60" width="4.50" height="0.9" fill="#6a6a6a" opacity="0.50"/><rect x="14.69" y="287.60" width="4.50" height="0.9" fill="#6a6a6a" opacity="0.50"/><rect x="19.75" y="287.60" width="1.54" height="0.9" fill="#6a6a6a" opacity="0.50"/><rect x="6.82" y="289.50" width="2.81" height="0.9" fill="#5a5a5a" opacity="0.75"/><rect x="9.92" y="289.50" width="2.12" height="0.9" fill="#5a5a5a" opacity="0.75"/><rect x="12.61" y="289.50" width="3.37" height="0.9" fill="#5a5a5a" opacity="0.75"/><rect x="16.26" y="289.50" width="1.55" height="0.9" fill="#5a5a5a" opacity="0.75"/><rect x="18.40" y="289.50" width="1.69" height="0.9" fill="#6a6ac8" opacity="0.60"/><rect x="20.36" y="289.50" width="2.81" height="0.9" fill="#6a6ac8" opacity="0.60"/><rect x="23.46" y="289.50" width="2.25" height="0.9" fill="#6a6ac8" opacity="0.60"/><rect x="25.92" y="289.50" width="1.69" height="0.9" fill="#c9a870" opacity="0.55"/><rect x="27.89" y="289.50" width="2.25" height="0.9" fill="#c9a870" opacity="0.55"/><rect x="30.42" y="289.50" width="4.50" height="0.9" fill="#c9a870" opacity="0.55"/><rect x="35.20" y="289.50" width="2.81" height="0.9" fill="#c9a870" opacity="0.55"/><rect x="38.29" y="289.50" width="3.26" height="0.9" fill="#c9a870" opacity="0.55"/><rect x="41.55" y="289.50" width="2.25" height="0.9" fill="#e87a86" opacity="0.45"/><rect x="44.36" y="289.50" width="4.50" height="0.9" fill="#5a5a5a" opacity="0.75"/><rect x="49.14" y="289.50" width="2.81" height="0.9" fill="#5a5a5a" opacity="0.75"/><rect x="52.23" y="289.50" width="4.50" height="0.9" fill="#6a6a6a" opacity="0.50"/><rect x="57.29" y="289.50" width="2.25" height="0.9" fill="#5a5a5a" opacity="0.75"/><rect x="59.82" y="289.50" width="3.14" height="0.9" fill="#6a6a6a" opacity="0.50"/><rect x="6.82" y="290.62" width="2.25" height="0.9" fill="#5a5a5a" opacity="0.75"/><rect x="9.35" y="290.62" width="2.68" height="0.9" fill="#5a5a5a" opacity="0.75"/><rect x="12.61" y="290.62" width="2.81" height="0.9" fill="#5a5a5a" opacity="0.75"/><rect x="15.70" y="290.62" width="2.12" height="0.9" fill="#5a5a5a" opacity="0.75"/><rect x="18.40" y="290.62" width="3.37" height="0.9" fill="#6a6ac8" opacity="0.60"/><rect x="22.05" y="290.62" width="3.87" height="0.9" fill="#6a6ac8" opacity="0.60"/><rect x="25.92" y="290.62" width="1.12" height="0.9" fill="#c9a870" opacity="0.55"/><rect x="27.33" y="290.62" width="4.50" height="0.9" fill="#c9a870" opacity="0.55"/><rect x="32.10" y="290.62" width="2.25" height="0.9" fill="#c9a870" opacity="0.55"/><rect x="34.63" y="290.62" width="1.69" height="0.9" fill="#c9a870" opacity="0.55"/><rect x="36.60" y="290.62" width="2.25" height="0.9" fill="#c9a870" opacity="0.55"/><rect x="39.13" y="290.62" width="2.41" height="0.9" fill="#c9a870" opacity="0.55"/><rect x="41.55" y="290.62" width="1.12" height="0.9" fill="#5a5a5a" opacity="0.75"/><rect x="42.95" y="290.62" width="3.37" height="0.9" fill="#6a6a6a" opacity="0.50"/><rect x="46.89" y="290.62" width="1.69" height="0.9" fill="#6a6a6a" opacity="0.50"/><rect x="49.14" y="290.62" width="2.25" height="0.9" fill="#6a6a6a" opacity="0.50"/><rect x="51.95" y="290.62" width="1.12" height="0.9" fill="#5a5a5a" opacity="0.75"/><rect x="53.35" y="290.62" width="1.69" height="0.9" fill="#5a5a5a" opacity="0.75"/><rect x="55.32" y="290.62" width="4.17" height="0.9" fill="#6a6a6a" opacity="0.50"/><rect x="6.82" y="291.74" width="2.25" height="0.9" fill="#5a5a5a" opacity="0.75"/><rect x="9.35" y="291.74" width="2.68" height="0.9" fill="#5a5a5a" opacity="0.75"/><rect x="12.61" y="291.74" width="1.12" height="0.9" fill="#5a5a5a" opacity="0.75"/><rect x="14.02" y="291.74" width="3.37" height="0.9" fill="#5a5a5a" opacity="0.75"/><rect x="18.40" y="291.74" width="1.69" height="0.9" fill="#6a6ac8" opacity="0.60"/><rect x="20.36" y="291.74" width="1.69" height="0.9" fill="#6a6ac8" opacity="0.60"/><rect x="22.33" y="291.74" width="1.69" height="0.9" fill="#6a6ac8" opacity="0.60"/><rect x="24.30" y="291.74" width="1.62" height="0.9" fill="#6a6ac8" opacity="0.60"/><rect x="25.92" y="291.74" width="2.25" height="0.9" fill="#c9a870" opacity="0.55"/><rect x="28.45" y="291.74" width="1.69" height="0.9" fill="#c9a870" opacity="0.55"/><rect x="30.42" y="291.74" width="1.69" height="0.9" fill="#c9a870" opacity="0.55"/><rect x="32.39" y="291.74" width="2.81" height="0.9" fill="#c9a870" opacity="0.55"/><rect x="35.48" y="291.74" width="3.37" height="0.9" fill="#c9a870" opacity="0.55"/><rect x="39.13" y="291.74" width="1.69" height="0.9" fill="#c9a870" opacity="0.55"/><rect x="41.10" y="291.74" width="0.45" height="0.9" fill="#c9a870" opacity="0.55"/><rect x="41.55" y="291.74" width="4.50" height="0.9" fill="#6a6a6a" opacity="0.50"/><rect x="46.61" y="291.74" width="1.12" height="0.9" fill="#6a6a6a" opacity="0.50"/><rect x="48.29" y="291.74" width="4.50" height="0.9" fill="#6a6a6a" opacity="0.50"/><rect x="53.35" y="291.74" width="1.69" height="0.9" fill="#e87a86" opacity="0.45"/><rect x="55.60" y="291.74" width="4.50" height="0.9" fill="#5a5a5a" opacity="0.75"/><rect x="60.38" y="291.74" width="2.58" height="0.9" fill="#5a5a5a" opacity="0.75"/><rect x="6.82" y="292.86" width="4.50" height="0.9" fill="#5a5a5a" opacity="0.75"/><rect x="11.60" y="292.86" width="0.43" height="0.9" fill="#5a5a5a" opacity="0.75"/><rect x="12.61" y="292.86" width="4.50" height="0.9" fill="#5a5a5a" opacity="0.75"/><rect x="17.39" y="292.86" width="0.43" height="0.9" fill="#5a5a5a" opacity="0.75"/><rect x="18.40" y="292.86" width="3.37" height="0.9" fill="#6a6ac8" opacity="0.60"/><rect x="22.05" y="292.86" width="1.12" height="0.9" fill="#6a6ac8" opacity="0.60"/><rect x="23.46" y="292.86" width="2.25" height="0.9" fill="#6a6ac8" opacity="0.60"/><rect x="25.92" y="292.86" width="2.81" height="0.9" fill="#c9a870" opacity="0.55"/><rect x="29.01" y="292.86" width="1.69" height="0.9" fill="#c9a870" opacity="0.55"/><rect x="30.98" y="292.86" width="1.69" height="0.9" fill="#c9a870" opacity="0.55"/><rect x="32.95" y="292.86" width="2.81" height="0.9" fill="#c9a870" opacity="0.55"/><rect x="36.04" y="292.86" width="2.81" height="0.9" fill="#c9a870" opacity="0.55"/><rect x="39.13" y="292.86" width="2.41" height="0.9" fill="#c9a870" opacity="0.55"/><rect x="41.55" y="292.86" width="1.12" height="0.9" fill="#e87a86" opacity="0.45"/><rect x="43.23" y="292.86" width="2.81" height="0.9" fill="#5a5a5a" opacity="0.75"/><rect x="46.32" y="292.86" width="4.50" height="0.9" fill="#e87a86" opacity="0.45"/><rect x="51.38" y="292.86" width="1.69" height="0.9" fill="#e87a86" opacity="0.45"/><rect x="53.63" y="292.86" width="1.69" height="0.9" fill="#6a6a6a" opacity="0.50"/><rect x="55.88" y="292.86" width="3.37" height="0.9" fill="#5a5a5a" opacity="0.75"/><rect x="59.54" y="292.86" width="1.69" height="0.9" fill="#6a6a6a" opacity="0.50"/><rect x="6.82" y="293.98" width="2.81" height="0.9" fill="#5a5a5a" opacity="0.75"/><rect x="9.92" y="293.98" width="2.12" height="0.9" fill="#5a5a5a" opacity="0.75"/><rect x="12.61" y="293.98" width="3.37" height="0.9" fill="#5a5a5a" opacity="0.75"/><rect x="16.26" y="293.98" width="1.55" height="0.9" fill="#5a5a5a" opacity="0.75"/><rect x="18.40" y="293.98" width="4.50" height="0.9" fill="#6a6ac8" opacity="0.60"/><rect x="23.18" y="293.98" width="2.25" height="0.9" fill="#6a6ac8" opacity="0.60"/><rect x="25.92" y="293.98" width="2.81" height="0.9" fill="#c9a870" opacity="0.55"/><rect x="29.01" y="293.98" width="2.25" height="0.9" fill="#c9a870" opacity="0.55"/><rect x="31.54" y="293.98" width="2.81" height="0.9" fill="#c9a870" opacity="0.55"/><rect x="34.63" y="293.98" width="2.81" height="0.9" fill="#c9a870" opacity="0.55"/><rect x="37.73" y="293.98" width="3.82" height="0.9" fill="#c9a870" opacity="0.55"/><rect x="41.55" y="293.98" width="1.12" height="0.9" fill="#5a5a5a" opacity="0.75"/><rect x="42.95" y="293.98" width="4.50" height="0.9" fill="#6a6a6a" opacity="0.50"/><rect x="48.01" y="293.98" width="4.50" height="0.9" fill="#5a5a5a" opacity="0.75"/><rect x="52.79" y="293.98" width="1.12" height="0.9" fill="#6a6a6a" opacity="0.50"/><rect x="54.48" y="293.98" width="1.12" height="0.9" fill="#6a6a6a" opacity="0.50"/><rect x="56.16" y="293.98" width="1.12" height="0.9" fill="#6a6a6a" opacity="0.50"/><rect x="57.85" y="293.98" width="2.81" height="0.9" fill="#e87a86" opacity="0.45"/><rect x="61.22" y="293.98" width="1.69" height="0.9" fill="#5a5a5a" opacity="0.75"/><rect x="6.82" y="295.10" width="1.69" height="0.9" fill="#5a5a5a" opacity="0.75"/><rect x="8.79" y="295.10" width="3.24" height="0.9" fill="#5a5a5a" opacity="0.75"/><rect x="12.61" y="295.10" width="2.81" height="0.9" fill="#5a5a5a" opacity="0.75"/><rect x="15.70" y="295.10" width="2.12" height="0.9" fill="#5a5a5a" opacity="0.75"/><rect x="18.40" y="295.10" width="1.69" height="0.9" fill="#6a6ac8" opacity="0.60"/><rect x="20.36" y="295.10" width="2.25" height="0.9" fill="#6a6ac8" opacity="0.60"/><rect x="22.89" y="295.10" width="1.12" height="0.9" fill="#6a6ac8" opacity="0.60"/><rect x="24.30" y="295.10" width="1.62" height="0.9" fill="#6a6ac8" opacity="0.60"/><rect x="25.92" y="295.10" width="2.25" height="0.9" fill="#c9a870" opacity="0.55"/><rect x="28.45" y="295.10" width="2.25" height="0.9" fill="#c9a870" opacity="0.55"/><rect x="30.98" y="295.10" width="2.81" height="0.9" fill="#c9a870" opacity="0.55"/><rect x="34.07" y="295.10" width="3.37" height="0.9" fill="#c9a870" opacity="0.55"/><rect x="37.73" y="295.10" width="3.37" height="0.9" fill="#c9a870" opacity="0.55"/><rect x="41.55" y="295.10" width="1.69" height="0.9" fill="#6a6a6a" opacity="0.50"/><rect x="43.79" y="295.10" width="2.81" height="0.9" fill="#6a6a6a" opacity="0.50"/><rect x="47.17" y="295.10" width="2.81" height="0.9" fill="#6a6a6a" opacity="0.50"/><rect x="50.54" y="295.10" width="3.37" height="0.9" fill="#5a5a5a" opacity="0.75"/><rect x="54.19" y="295.10" width="2.25" height="0.9" fill="#6a6a6a" opacity="0.50"/><rect x="6.82" y="296.22" width="2.25" height="0.9" fill="#5a5a5a" opacity="0.75"/><rect x="9.35" y="296.22" width="2.68" height="0.9" fill="#5a5a5a" opacity="0.75"/><rect x="12.61" y="296.22" width="2.81" height="0.9" fill="#5a5a5a" opacity="0.75"/><rect x="15.70" y="296.22" width="2.12" height="0.9" fill="#5a5a5a" opacity="0.75"/><rect x="18.40" y="296.22" width="3.37" height="0.9" fill="#6a6ac8" opacity="0.60"/><rect x="22.05" y="296.22" width="2.25" height="0.9" fill="#6a6ac8" opacity="0.60"/><rect x="24.58" y="296.22" width="1.34" height="0.9" fill="#6a6ac8" opacity="0.60"/><rect x="25.92" y="296.22" width="2.25" height="0.9" fill="#c9a870" opacity="0.55"/><rect x="28.45" y="296.22" width="1.69" height="0.9" fill="#c9a870" opacity="0.55"/><rect x="30.42" y="296.22" width="4.50" height="0.9" fill="#c9a870" opacity="0.55"/><rect x="35.20" y="296.22" width="2.81" height="0.9" fill="#c9a870" opacity="0.55"/><rect x="38.29" y="296.22" width="1.12" height="0.9" fill="#c9a870" opacity="0.55"/><rect x="39.69" y="296.22" width="1.85" height="0.9" fill="#c9a870" opacity="0.55"/><rect x="41.55" y="296.22" width="1.69" height="0.9" fill="#6a6a6a" opacity="0.50"/><rect x="43.79" y="296.22" width="4.50" height="0.9" fill="#6a6a6a" opacity="0.50"/><rect x="48.85" y="296.22" width="1.69" height="0.9" fill="#6a6a6a" opacity="0.50"/><rect x="51.10" y="296.22" width="4.50" height="0.9" fill="#5a5a5a" opacity="0.75"/><rect x="55.88" y="296.22" width="1.12" height="0.9" fill="#e87a86" opacity="0.45"/><rect x="57.57" y="296.22" width="4.50" height="0.9" fill="#6a6a6a" opacity="0.50"/><rect x="62.63" y="296.22" width="0.33" height="0.9" fill="#6a6a6a" opacity="0.50"/><rect x="6.82" y="297.34" width="3.37" height="0.9" fill="#5a5a5a" opacity="0.75"/><rect x="10.48" y="297.34" width="1.12" height="0.9" fill="#5a5a5a" opacity="0.75"/><rect x="12.61" y="297.34" width="2.81" height="0.9" fill="#5a5a5a" opacity="0.75"/><rect x="15.70" y="297.34" width="2.12" height="0.9" fill="#5a5a5a" opacity="0.75"/><rect x="18.40" y="297.34" width="1.12" height="0.9" fill="#6a6ac8" opacity="0.60"/><rect x="19.80" y="297.34" width="1.12" height="0.9" fill="#6a6ac8" opacity="0.60"/><rect x="21.21" y="297.34" width="1.12" height="0.9" fill="#6a6ac8" opacity="0.60"/><rect x="22.61" y="297.34" width="1.69" height="0.9" fill="#6a6ac8" opacity="0.60"/><rect x="24.58" y="297.34" width="1.34" height="0.9" fill="#6a6ac8" opacity="0.60"/><rect x="25.92" y="297.34" width="3.37" height="0.9" fill="#c9a870" opacity="0.55"/><rect x="29.57" y="297.34" width="4.50" height="0.9" fill="#c9a870" opacity="0.55"/><rect x="34.35" y="297.34" width="1.12" height="0.9" fill="#c9a870" opacity="0.55"/><rect x="35.76" y="297.34" width="3.37" height="0.9" fill="#c9a870" opacity="0.55"/><rect x="39.41" y="297.34" width="2.13" height="0.9" fill="#c9a870" opacity="0.55"/><rect x="41.55" y="297.34" width="3.37" height="0.9" fill="#e87a86" opacity="0.45"/><rect x="45.48" y="297.34" width="3.37" height="0.9" fill="#5a5a5a" opacity="0.75"/><rect x="49.14" y="297.34" width="4.50" height="0.9" fill="#6a6a6a" opacity="0.50"/><rect x="54.19" y="297.34" width="4.50" height="0.9" fill="#5a5a5a" opacity="0.75"/><rect x="58.97" y="297.34" width="1.69" height="0.9" fill="#5a5a5a" opacity="0.75"/><rect x="60.94" y="297.34" width="2.02" height="0.9" fill="#e87a86" opacity="0.45"/><rect x="6.82" y="298.46" width="4.50" height="0.9" fill="#5a5a5a" opacity="0.75"/><rect x="11.60" y="298.46" width="0.43" height="0.9" fill="#5a5a5a" opacity="0.75"/><rect x="12.61" y="298.46" width="1.12" height="0.9" fill="#5a5a5a" opacity="0.75"/><rect x="14.02" y="298.46" width="3.80" height="0.9" fill="#5a5a5a" opacity="0.75"/><rect x="18.40" y="298.46" width="1.69" height="0.9" fill="#6a6ac8" opacity="0.60"/><rect x="20.36" y="298.46" width="1.12" height="0.9" fill="#6a6ac8" opacity="0.60"/><rect x="21.77" y="298.46" width="2.81" height="0.9" fill="#6a6ac8" opacity="0.60"/><rect x="24.86" y="298.46" width="1.06" height="0.9" fill="#6a6ac8" opacity="0.60"/><rect x="25.92" y="298.46" width="4.50" height="0.9" fill="#c9a870" opacity="0.55"/><rect x="30.70" y="298.46" width="1.12" height="0.9" fill="#c9a870" opacity="0.55"/><rect x="32.10" y="298.46" width="2.25" height="0.9" fill="#c9a870" opacity="0.55"/><rect x="34.63" y="298.46" width="1.69" height="0.9" fill="#c9a870" opacity="0.55"/><rect x="36.60" y="298.46" width="2.25" height="0.9" fill="#c9a870" opacity="0.55"/><rect x="39.13" y="298.46" width="2.41" height="0.9" fill="#c9a870" opacity="0.55"/><rect x="41.55" y="298.46" width="4.50" height="0.9" fill="#6a6a6a" opacity="0.50"/><rect x="46.61" y="298.46" width="2.25" height="0.9" fill="#5a5a5a" opacity="0.75"/><rect x="49.14" y="298.46" width="2.81" height="0.9" fill="#5a5a5a" opacity="0.75"/><rect x="52.23" y="298.46" width="2.25" height="0.9" fill="#5a5a5a" opacity="0.75"/><rect x="54.76" y="298.46" width="2.81" height="0.9" fill="#6a6a6a" opacity="0.50"/><rect x="58.13" y="298.46" width="1.35" height="0.9" fill="#6a6a6a" opacity="0.50"/><rect x="6.82" y="299.58" width="1.12" height="0.9" fill="#5a5a5a" opacity="0.75"/><rect x="8.23" y="299.58" width="2.81" height="0.9" fill="#5a5a5a" opacity="0.75"/><rect x="11.32" y="299.58" width="0.71" height="0.9" fill="#5a5a5a" opacity="0.75"/><rect x="12.61" y="299.58" width="3.37" height="0.9" fill="#5a5a5a" opacity="0.75"/><rect x="16.26" y="299.58" width="1.12" height="0.9" fill="#5a5a5a" opacity="0.75"/><rect x="18.40" y="299.58" width="1.12" height="0.9" fill="#6a6ac8" opacity="0.60"/><rect x="19.80" y="299.58" width="2.81" height="0.9" fill="#6a6ac8" opacity="0.60"/><rect x="22.89" y="299.58" width="3.03" height="0.9" fill="#6a6ac8" opacity="0.60"/><rect x="25.92" y="299.58" width="4.50" height="0.9" fill="#c9a870" opacity="0.55"/><rect x="30.70" y="299.58" width="2.81" height="0.9" fill="#c9a870" opacity="0.55"/><rect x="33.79" y="299.58" width="2.81" height="0.9" fill="#c9a870" opacity="0.55"/><rect x="36.88" y="299.58" width="1.12" height="0.9" fill="#c9a870" opacity="0.55"/><rect x="38.29" y="299.58" width="1.12" height="0.9" fill="#c9a870" opacity="0.55"/><rect x="39.69" y="299.58" width="1.85" height="0.9" fill="#c9a870" opacity="0.55"/><rect x="41.55" y="299.58" width="2.81" height="0.9" fill="#6a6a6a" opacity="0.50"/><rect x="44.92" y="299.58" width="3.37" height="0.9" fill="#5a5a5a" opacity="0.75"/><rect x="48.57" y="299.58" width="2.81" height="0.9" fill="#e87a86" opacity="0.45"/><rect x="51.95" y="299.58" width="3.37" height="0.9" fill="#5a5a5a" opacity="0.75"/><rect x="55.60" y="299.58" width="1.12" height="0.9" fill="#e87a86" opacity="0.45"/><rect x="57.29" y="299.58" width="1.69" height="0.9" fill="#5a5a5a" opacity="0.75"/><rect x="59.25" y="299.58" width="3.70" height="0.9" fill="#5a5a5a" opacity="0.75"/><rect x="6.82" y="300.70" width="2.81" height="0.9" fill="#5a5a5a" opacity="0.75"/><rect x="9.92" y="300.70" width="1.12" height="0.9" fill="#5a5a5a" opacity="0.75"/><rect x="11.32" y="300.70" width="0.71" height="0.9" fill="#5a5a5a" opacity="0.75"/><rect x="12.61" y="300.70" width="4.50" height="0.9" fill="#5a5a5a" opacity="0.75"/><rect x="17.39" y="300.70" width="0.43" height="0.9" fill="#5a5a5a" opacity="0.75"/><rect x="18.40" y="300.70" width="1.12" height="0.9" fill="#6a6ac8" opacity="0.60"/><rect x="19.80" y="300.70" width="1.12" height="0.9" fill="#6a6ac8" opacity="0.60"/><rect x="21.21" y="300.70" width="1.69" height="0.9" fill="#6a6ac8" opacity="0.60"/><rect x="23.18" y="300.70" width="1.12" height="0.9" fill="#6a6ac8" opacity="0.60"/><rect x="24.58" y="300.70" width="1.34" height="0.9" fill="#6a6ac8" opacity="0.60"/><rect x="25.92" y="300.70" width="2.81" height="0.9" fill="#c9a870" opacity="0.55"/><rect x="29.01" y="300.70" width="1.12" height="0.9" fill="#c9a870" opacity="0.55"/><rect x="30.42" y="300.70" width="2.25" height="0.9" fill="#c9a870" opacity="0.55"/><rect x="32.95" y="300.70" width="4.50" height="0.9" fill="#c9a870" opacity="0.55"/><rect x="37.73" y="300.70" width="3.37" height="0.9" fill="#c9a870" opacity="0.55"/><rect x="41.55" y="300.70" width="1.69" height="0.9" fill="#e87a86" opacity="0.45"/><rect x="43.79" y="300.70" width="4.50" height="0.9" fill="#5a5a5a" opacity="0.75"/><rect x="48.57" y="300.70" width="1.12" height="0.9" fill="#6a6a6a" opacity="0.50"/><rect x="50.26" y="300.70" width="4.50" height="0.9" fill="#5a5a5a" opacity="0.75"/><rect x="55.04" y="300.70" width="4.50" height="0.9" fill="#5a5a5a" opacity="0.75"/><rect x="59.82" y="300.70" width="1.98" height="0.9" fill="#6a6a6a" opacity="0.50"/><rect x="6.82" y="301.82" width="4.50" height="0.9" fill="#5a5a5a" opacity="0.75"/><rect x="11.60" y="301.82" width="0.43" height="0.9" fill="#5a5a5a" opacity="0.75"/><rect x="12.61" y="301.82" width="2.81" height="0.9" fill="#5a5a5a" opacity="0.75"/><rect x="15.70" y="301.82" width="2.12" height="0.9" fill="#5a5a5a" opacity="0.75"/><rect x="18.40" y="301.82" width="2.25" height="0.9" fill="#6a6ac8" opacity="0.60"/><rect x="20.93" y="301.82" width="1.12" height="0.9" fill="#6a6ac8" opacity="0.60"/><rect x="22.33" y="301.82" width="3.59" height="0.9" fill="#6a6ac8" opacity="0.60"/><rect x="25.92" y="301.82" width="1.12" height="0.9" fill="#c9a870" opacity="0.55"/><rect x="27.33" y="301.82" width="1.12" height="0.9" fill="#c9a870" opacity="0.55"/><rect x="28.73" y="301.82" width="1.12" height="0.9" fill="#c9a870" opacity="0.55"/><rect x="30.14" y="301.82" width="1.12" height="0.9" fill="#c9a870" opacity="0.55"/><rect x="31.54" y="301.82" width="4.50" height="0.9" fill="#c9a870" opacity="0.55"/><rect x="36.32" y="301.82" width="4.50" height="0.9" fill="#c9a870" opacity="0.55"/><rect x="41.10" y="301.82" width="0.45" height="0.9" fill="#c9a870" opacity="0.55"/><rect x="41.55" y="301.82" width="1.12" height="0.9" fill="#e87a86" opacity="0.45"/><rect x="43.23" y="301.82" width="2.25" height="0.9" fill="#6a6a6a" opacity="0.50"/><rect x="46.04" y="301.82" width="4.50" height="0.9" fill="#6a6a6a" opacity="0.50"/><rect x="51.10" y="301.82" width="1.69" height="0.9" fill="#e87a86" opacity="0.45"/><rect x="53.35" y="301.82" width="3.37" height="0.9" fill="#5a5a5a" opacity="0.75"/><rect x="57.01" y="301.82" width="2.25" height="0.9" fill="#6a6a6a" opacity="0.50"/><rect x="59.82" y="301.82" width="3.14" height="0.9" fill="#e87a86" opacity="0.45"/><rect x="4.51" y="305.74" width="2.81" height="0.9" fill="#5a5ab8" opacity="0.50"/><rect x="7.88" y="305.74" width="3.57" height="0.9" fill="#5a5ab8" opacity="0.50"/><rect x="11.45" y="305.74" width="1.69" height="0.9" fill="#b860c0" opacity="0.50"/><rect x="13.70" y="305.74" width="1.69" height="0.9" fill="#b860c0" opacity="0.50"/><rect x="15.95" y="305.74" width="1.12" height="0.9" fill="#b860c0" opacity="0.50"/><rect x="17.64" y="305.74" width="2.25" height="0.9" fill="#b860c0" opacity="0.50"/><rect x="20.45" y="305.74" width="2.00" height="0.9" fill="#b860c0" opacity="0.50"/><rect x="22.45" y="305.74" width="1.69" height="0.9" fill="#5a5ab8" opacity="0.50"/><rect x="24.70" y="305.74" width="4.50" height="0.9" fill="#e87a86" opacity="0.45"/><rect x="29.76" y="305.74" width="2.81" height="0.9" fill="#5a5ab8" opacity="0.50"/><rect x="33.13" y="305.74" width="2.81" height="0.9" fill="#e87a86" opacity="0.45"/><rect x="36.50" y="305.74" width="0.99" height="0.9" fill="#5a5ab8" opacity="0.50"/><rect x="6.82" y="307.87" width="2.81" height="0.9" fill="#6a6a6a" opacity="0.50"/><rect x="10.20" y="307.87" width="2.25" height="0.9" fill="#e87a86" opacity="0.45"/><rect x="13.01" y="307.87" width="3.37" height="0.9" fill="#6a6a6a" opacity="0.50"/><rect x="16.94" y="307.87" width="2.25" height="0.9" fill="#e87a86" opacity="0.45"/><rect x="19.75" y="307.87" width="2.25" height="0.9" fill="#6a6a6a" opacity="0.50"/><rect x="22.56" y="307.87" width="2.25" height="0.9" fill="#e87a86" opacity="0.45"/><rect x="25.38" y="307.87" width="1.12" height="0.9" fill="#6a6a6a" opacity="0.50"/><rect x="6.82" y="309.21" width="3.37" height="0.9" fill="#e87a86" opacity="0.45"/><rect x="10.76" y="309.21" width="3.37" height="0.9" fill="#5a5ab8" opacity="0.50"/><rect x="14.69" y="309.21" width="1.69" height="0.9" fill="#e87a86" opacity="0.45"/><rect x="16.94" y="309.21" width="3.37" height="0.9" fill="#6a6a6a" opacity="0.50"/><rect x="20.88" y="309.21" width="1.69" height="0.9" fill="#6a6a6a" opacity="0.50"/><rect x="23.13" y="309.21" width="2.81" height="0.9" fill="#6a6a6a" opacity="0.50"/><rect x="26.50" y="309.21" width="3.37" height="0.9" fill="#6a6a6a" opacity="0.50"/><rect x="30.44" y="309.21" width="2.81" height="0.9" fill="#e87a86" opacity="0.45"/><rect x="6.82" y="311.56" width="4.50" height="0.9" fill="#5a5ab8" opacity="0.50"/><rect x="11.88" y="311.56" width="1.12" height="0.9" fill="#6a6a6a" opacity="0.50"/><rect x="13.57" y="311.56" width="2.25" height="0.9" fill="#5a5ab8" opacity="0.50"/><rect x="9.14" y="313.80" width="2.25" height="0.9" fill="#5a5ab8" opacity="0.50"/><rect x="11.95" y="313.80" width="2.25" height="0.9" fill="#6a6a6a" opacity="0.50"/><rect x="14.76" y="313.80" width="2.81" height="0.9" fill="#5a5ab8" opacity="0.50"/><rect x="18.13" y="313.80" width="1.69" height="0.9" fill="#6a6a6a" opacity="0.50"/><rect x="20.38" y="313.80" width="0.33" height="0.9" fill="#5a5ab8" opacity="0.50"/><rect x="9.14" y="315.04" width="1.12" height="0.9" fill="#6a6a6a" opacity="0.50"/><rect x="10.82" y="315.04" width="2.25" height="0.9" fill="#5a5ab8" opacity="0.50"/><rect x="13.64" y="315.04" width="1.69" height="0.9" fill="#6a6a6a" opacity="0.50"/><rect x="15.88" y="315.04" width="3.37" height="0.9" fill="#5a5ab8" opacity="0.50"/><rect x="19.82" y="315.04" width="0.31" height="0.9" fill="#6a6a6a" opacity="0.50"/><rect x="20.71" y="315.04" width="2.25" height="0.9" fill="#6a6a6a" opacity="0.50"/><rect x="23.52" y="315.04" width="2.25" height="0.9" fill="#5a5ab8" opacity="0.50"/><rect x="26.33" y="315.04" width="3.37" height="0.9" fill="#6a6a6a" opacity="0.50"/><rect x="30.27" y="315.04" width="2.81" height="0.9" fill="#6a6a6a" opacity="0.50"/><rect x="33.64" y="315.04" width="4.50" height="0.9" fill="#6a6a6a" opacity="0.50"/><rect x="38.70" y="315.04" width="2.25" height="0.9" fill="#5a5ab8" opacity="0.50"/><rect x="41.51" y="315.04" width="4.50" height="0.9" fill="#6a6a6a" opacity="0.50"/><rect x="46.57" y="315.04" width="2.50" height="0.9" fill="#6a6a6a" opacity="0.50"/><rect x="9.14" y="316.16" width="2.25" height="0.9" fill="#6a6a6a" opacity="0.50"/><rect x="11.95" y="316.16" width="3.37" height="0.9" fill="#6a6a6a" opacity="0.50"/><rect x="15.88" y="316.16" width="1.12" height="0.9" fill="#6a6a6a" opacity="0.50"/><rect x="17.57" y="316.16" width="2.81" height="0.9" fill="#6a6a6a" opacity="0.50"/><rect x="20.94" y="316.16" width="2.81" height="0.9" fill="#6a6a6a" opacity="0.50"/><rect x="24.32" y="316.16" width="2.76" height="0.9" fill="#6a6a6a" opacity="0.50"/><rect x="27.66" y="316.16" width="1.12" height="0.9" fill="#5a5ab8" opacity="0.50"/><rect x="29.34" y="316.16" width="3.37" height="0.9" fill="#5a5ab8" opacity="0.50"/><rect x="9.14" y="317.95" width="2.25" height="0.9" fill="#e87a86" opacity="0.45"/><rect x="11.95" y="317.95" width="1.69" height="0.9" fill="#6a6a6a" opacity="0.50"/><rect x="14.20" y="317.95" width="3.37" height="0.9" fill="#6a6a6a" opacity="0.50"/><rect x="18.13" y="317.95" width="3.37" height="0.9" fill="#6a6a6a" opacity="0.50"/><rect x="22.07" y="317.95" width="2.81" height="0.9" fill="#5a5ab8" opacity="0.50"/><rect x="25.44" y="317.95" width="1.69" height="0.9" fill="#5a5ab8" opacity="0.50"/><rect x="27.69" y="317.95" width="1.69" height="0.9" fill="#e87a86" opacity="0.45"/><rect x="29.94" y="317.95" width="1.69" height="0.9" fill="#6a6a6a" opacity="0.50"/><rect x="32.19" y="317.95" width="2.25" height="0.9" fill="#6a6a6a" opacity="0.50"/><rect x="35.00" y="317.95" width="2.81" height="0.9" fill="#5a5ab8" opacity="0.50"/><rect x="38.37" y="317.95" width="1.69" height="0.9" fill="#e87a86" opacity="0.45"/><rect x="40.62" y="317.95" width="2.81" height="0.9" fill="#6a6a6a" opacity="0.50"/><rect x="43.99" y="317.95" width="1.12" height="0.9" fill="#6a6a6a" opacity="0.50"/><rect x="45.68" y="317.95" width="4.50" height="0.9" fill="#6a6a6a" opacity="0.50"/><rect x="50.74" y="317.95" width="1.12" height="0.9" fill="#5a5ab8" opacity="0.50"/><rect x="52.43" y="317.95" width="2.25" height="0.9" fill="#e87a86" opacity="0.45"/><rect x="55.24" y="317.95" width="2.25" height="0.9" fill="#6a6a6a" opacity="0.50"/><rect x="58.05" y="317.95" width="3.37" height="0.9" fill="#e87a86" opacity="0.45"/><rect x="61.98" y="317.95" width="1.12" height="0.9" fill="#e87a86" opacity="0.45"/><rect x="63.67" y="317.95" width="1.69" height="0.9" fill="#6a6a6a" opacity="0.50"/><rect x="65.92" y="317.95" width="1.09" height="0.9" fill="#5a5ab8" opacity="0.50"/><rect x="11.45" y="320.86" width="2.25" height="0.9" fill="#c9a870" opacity="0.55"/><rect x="13.98" y="320.86" width="2.81" height="0.9" fill="#6a6a6a" opacity="0.50"/><rect x="17.36" y="320.86" width="2.81" height="0.9" fill="#5a5ab8" opacity="0.50"/><rect x="20.73" y="320.86" width="2.25" height="0.9" fill="#6a6a6a" opacity="0.50"/><rect x="23.54" y="320.86" width="2.25" height="0.9" fill="#5a5ab8" opacity="0.50"/><rect x="26.35" y="320.86" width="1.69" height="0.9" fill="#6a6a6a" opacity="0.50"/><rect x="28.60" y="320.86" width="1.12" height="0.9" fill="#6a6a6a" opacity="0.50"/><rect x="30.29" y="320.86" width="1.12" height="0.9" fill="#6a6a6a" opacity="0.50"/><rect x="31.97" y="320.86" width="3.37" height="0.9" fill="#c9a870" opacity="0.55"/><rect x="35.63" y="320.86" width="4.50" height="0.9" fill="#6a6a6a" opacity="0.50"/><rect x="40.69" y="320.86" width="2.81" height="0.9" fill="#6a6a6a" opacity="0.50"/><rect x="44.06" y="320.86" width="2.69" height="0.9" fill="#6a6a6a" opacity="0.50"/><rect x="27.08" y="321.98" width="1.12" height="0.9" fill="#6a6a6a" opacity="0.50"/><rect x="28.76" y="321.98" width="4.50" height="0.9" fill="#c9a870" opacity="0.55"/><rect x="33.54" y="321.98" width="1.12" height="0.9" fill="#6a6a6a" opacity="0.50"/><rect x="35.23" y="321.98" width="2.25" height="0.9" fill="#c9a870" opacity="0.55"/><rect x="27.08" y="323.10" width="2.25" height="0.9" fill="#e87a86" opacity="0.45"/><rect x="29.89" y="323.10" width="4.50" height="0.9" fill="#6a6a6a" opacity="0.50"/><rect x="34.95" y="323.10" width="4.50" height="0.9" fill="#6a6a6a" opacity="0.50"/><rect x="40.01" y="323.10" width="1.69" height="0.9" fill="#6a6a6a" opacity="0.50"/><rect x="42.26" y="323.10" width="1.69" height="0.9" fill="#5a5ab8" opacity="0.50"/><rect x="44.51" y="323.10" width="1.69" height="0.9" fill="#e87a86" opacity="0.45"/><rect x="46.75" y="323.10" width="1.69" height="0.9" fill="#6a6a6a" opacity="0.50"/><rect x="49.00" y="323.10" width="2.25" height="0.9" fill="#5a5ab8" opacity="0.50"/><rect x="51.81" y="323.10" width="1.12" height="0.9" fill="#6a6a6a" opacity="0.50"/><rect x="53.50" y="323.10" width="1.12" height="0.9" fill="#5a5ab8" opacity="0.50"/><rect x="55.19" y="323.10" width="3.37" height="0.9" fill="#6a6a6a" opacity="0.50"/><rect x="59.12" y="323.10" width="1.12" height="0.9" fill="#6a6a6a" opacity="0.50"/><rect x="60.81" y="323.10" width="1.69" height="0.9" fill="#5a5ab8" opacity="0.50"/><rect x="63.06" y="323.10" width="1.12" height="0.9" fill="#e87a86" opacity="0.45"/><rect x="64.75" y="323.10" width="1.68" height="0.9" fill="#5a5ab8" opacity="0.50"/><rect x="27.08" y="324.22" width="3.37" height="0.9" fill="#6a6a6a" opacity="0.50"/><rect x="31.01" y="324.22" width="3.37" height="0.9" fill="#c9a870" opacity="0.55"/><rect x="34.67" y="324.22" width="2.81" height="0.9" fill="#6a6a6a" opacity="0.50"/><rect x="38.04" y="324.22" width="4.50" height="0.9" fill="#c9a870" opacity="0.55"/><rect x="42.82" y="324.22" width="1.12" height="0.9" fill="#6a6a6a" opacity="0.50"/><rect x="44.51" y="324.22" width="1.09" height="0.9" fill="#c9a870" opacity="0.55"/><rect x="27.08" y="325.56" width="2.25" height="0.9" fill="#6a6a6a" opacity="0.50"/><rect x="29.89" y="325.56" width="2.25" height="0.9" fill="#6a6a6a" opacity="0.50"/><rect x="32.70" y="325.56" width="2.25" height="0.9" fill="#6a6a6a" opacity="0.50"/><rect x="35.51" y="325.56" width="1.98" height="0.9" fill="#6a6a6a" opacity="0.50"/><rect x="11.45" y="327.80" width="1.12" height="0.9" fill="#e87a86" opacity="0.45"/><rect x="13.14" y="327.80" width="2.25" height="0.9" fill="#5a5ab8" opacity="0.50"/><rect x="15.95" y="327.80" width="2.81" height="0.9" fill="#e87a86" opacity="0.45"/><rect x="19.32" y="327.80" width="2.81" height="0.9" fill="#5a5ab8" opacity="0.50"/><rect x="22.70" y="327.80" width="1.69" height="0.9" fill="#e87a86" opacity="0.45"/><rect x="24.95" y="327.80" width="2.81" height="0.9" fill="#5a5ab8" opacity="0.50"/><rect x="28.32" y="327.80" width="1.69" height="0.9" fill="#e87a86" opacity="0.45"/><rect x="30.57" y="327.80" width="1.69" height="0.9" fill="#5a5ab8" opacity="0.50"/><rect x="32.82" y="327.80" width="4.50" height="0.9" fill="#e87a86" opacity="0.45"/><rect x="37.88" y="327.80" width="1.12" height="0.9" fill="#5a5ab8" opacity="0.50"/><rect x="39.56" y="327.80" width="2.81" height="0.9" fill="#e87a86" opacity="0.45"/><rect x="42.94" y="327.80" width="0.92" height="0.9" fill="#5a5ab8" opacity="0.50"/><rect x="13.77" y="330.72" width="1.69" height="0.9" fill="#6a6a6a" opacity="0.50"/><rect x="16.02" y="330.72" width="1.12" height="0.9" fill="#5a5ab8" opacity="0.50"/><rect x="17.70" y="330.72" width="1.69" height="0.9" fill="#6a6a6a" opacity="0.50"/><rect x="19.95" y="330.72" width="1.69" height="0.9" fill="#5a5ab8" opacity="0.50"/><rect x="22.20" y="330.72" width="1.12" height="0.9" fill="#6a6a6a" opacity="0.50"/><rect x="23.89" y="330.72" width="3.37" height="0.9" fill="#5a5ab8" opacity="0.50"/><rect x="27.82" y="330.72" width="2.25" height="0.9" fill="#6a6a6a" opacity="0.50"/><rect x="30.63" y="330.72" width="4.50" height="0.9" fill="#5a5ab8" opacity="0.50"/><rect x="35.69" y="330.72" width="1.69" height="0.9" fill="#6a6a6a" opacity="0.50"/><rect x="37.94" y="330.72" width="2.81" height="0.9" fill="#5a5ab8" opacity="0.50"/><rect x="41.32" y="330.72" width="1.12" height="0.9" fill="#6a6a6a" opacity="0.50"/><rect x="43.00" y="330.72" width="2.81" height="0.9" fill="#5a5ab8" opacity="0.50"/><rect x="46.38" y="330.72" width="0.38" height="0.9" fill="#6a6a6a" opacity="0.50"/><rect x="29.97" y="331.84" width="4.50" height="0.9" fill="#6a6a6a" opacity="0.50"/><rect x="35.03" y="331.84" width="2.81" height="0.9" fill="#c9a870" opacity="0.55"/><rect x="38.12" y="331.84" width="2.25" height="0.9" fill="#5a5ab8" opacity="0.50"/><rect x="40.93" y="331.84" width="2.81" height="0.9" fill="#6a6a6a" opacity="0.50"/><rect x="44.31" y="331.84" width="4.50" height="0.9" fill="#c9a870" opacity="0.55"/><rect x="49.09" y="331.84" width="1.69" height="0.9" fill="#c9a870" opacity="0.55"/><rect x="51.05" y="331.84" width="1.69" height="0.9" fill="#6a6a6a" opacity="0.50"/><rect x="53.30" y="331.84" width="1.69" height="0.9" fill="#6a6a6a" opacity="0.50"/><rect x="55.55" y="331.84" width="3.37" height="0.9" fill="#5a5ab8" opacity="0.50"/><rect x="59.49" y="331.84" width="2.81" height="0.9" fill="#5a5ab8" opacity="0.50"/><rect x="62.86" y="331.84" width="2.25" height="0.9" fill="#6a6a6a" opacity="0.50"/><rect x="65.67" y="331.84" width="0.76" height="0.9" fill="#5a5ab8" opacity="0.50"/><rect x="29.97" y="333.07" width="1.69" height="0.9" fill="#6a6a6a" opacity="0.50"/><rect x="32.22" y="333.07" width="1.12" height="0.9" fill="#6a6a6a" opacity="0.50"/><rect x="33.91" y="333.07" width="2.25" height="0.9" fill="#6a6a6a" opacity="0.50"/><rect x="36.72" y="333.07" width="0.78" height="0.9" fill="#6a6a6a" opacity="0.50"/><rect x="28.93" y="334.30" width="2.25" height="0.9" fill="#c9a870" opacity="0.55"/><rect x="31.46" y="334.30" width="1.69" height="0.9" fill="#c9a870" opacity="0.55"/><rect x="33.43" y="334.30" width="2.81" height="0.9" fill="#6a6a6a" opacity="0.50"/><rect x="36.80" y="334.30" width="2.25" height="0.9" fill="#6a6a6a" opacity="0.50"/><rect x="39.61" y="334.30" width="2.81" height="0.9" fill="#6a6a6a" opacity="0.50"/><rect x="42.98" y="334.30" width="1.69" height="0.9" fill="#6a6a6a" opacity="0.50"/><rect x="45.23" y="334.30" width="4.50" height="0.9" fill="#5a5ab8" opacity="0.50"/><rect x="50.29" y="334.30" width="3.37" height="0.9" fill="#6a6a6a" opacity="0.50"/><rect x="54.23" y="334.30" width="2.25" height="0.9" fill="#6a6a6a" opacity="0.50"/><rect x="57.04" y="334.30" width="2.25" height="0.9" fill="#5a5ab8" opacity="0.50"/><rect x="59.85" y="334.30" width="2.25" height="0.9" fill="#6a6a6a" opacity="0.50"/><rect x="62.66" y="334.30" width="2.25" height="0.9" fill="#5a5ab8" opacity="0.50"/><rect x="65.47" y="334.30" width="1.42" height="0.9" fill="#6a6a6a" opacity="0.50"/><rect x="11.34" y="338.00" width="0.93" height="0.9" fill="#e87a86" opacity="0.45"/><rect x="9.02" y="340.24" width="2.25" height="0.9" fill="#5a5ab8" opacity="0.50"/><rect x="11.83" y="340.24" width="0.43" height="0.9" fill="#5a5ab8" opacity="0.50"/><rect x="6.71" y="342.25" width="1.69" height="0.9" fill="#5a5ab8" opacity="0.50"/><rect x="8.96" y="342.25" width="1.12" height="0.9" fill="#6a6a6a" opacity="0.50"/><rect x="10.64" y="342.25" width="4.50" height="0.9" fill="#5a5ab8" opacity="0.50"/><rect x="15.70" y="342.25" width="1.19" height="0.9" fill="#6a6a6a" opacity="0.50"/><rect x="9.02" y="344.27" width="1.69" height="0.9" fill="#6a6a6a" opacity="0.50"/><rect x="11.27" y="344.27" width="4.50" height="0.9" fill="#e87a86" opacity="0.45"/><rect x="16.33" y="344.27" width="1.12" height="0.9" fill="#6a6a6a" opacity="0.50"/><rect x="18.02" y="344.27" width="2.81" height="0.9" fill="#e87a86" opacity="0.45"/><rect x="9.02" y="345.61" width="3.37" height="0.9" fill="#c9a870" opacity="0.55"/><rect x="12.68" y="345.61" width="3.37" height="0.9" fill="#5a5ab8" opacity="0.50"/><rect x="16.61" y="345.61" width="2.81" height="0.9" fill="#6a6a6a" opacity="0.50"/><rect x="19.99" y="345.61" width="3.37" height="0.9" fill="#c9a870" opacity="0.55"/><rect x="23.64" y="345.61" width="1.69" height="0.9" fill="#c9a870" opacity="0.55"/><rect x="25.61" y="345.61" width="2.81" height="0.9" fill="#6a6a6a" opacity="0.50"/><rect x="28.98" y="345.61" width="2.81" height="0.9" fill="#5a5ab8" opacity="0.50"/><rect x="32.35" y="345.61" width="2.25" height="0.9" fill="#5a5ab8" opacity="0.50"/><rect x="35.16" y="345.61" width="1.69" height="0.9" fill="#5a5ab8" opacity="0.50"/><rect x="37.41" y="345.61" width="2.63" height="0.9" fill="#5a5ab8" opacity="0.50"/><rect x="9.02" y="346.73" width="4.50" height="0.9" fill="#6a6a6a" opacity="0.50"/><rect x="14.08" y="346.73" width="1.69" height="0.9" fill="#5a5ab8" opacity="0.50"/><rect x="16.33" y="346.73" width="1.69" height="0.9" fill="#6a6a6a" opacity="0.50"/><rect x="18.58" y="346.73" width="3.37" height="0.9" fill="#5a5ab8" opacity="0.50"/><rect x="22.52" y="346.73" width="1.12" height="0.9" fill="#6a6a6a" opacity="0.50"/><rect x="24.20" y="346.73" width="1.12" height="0.9" fill="#5a5ab8" opacity="0.50"/><rect x="25.89" y="346.73" width="3.37" height="0.9" fill="#6a6a6a" opacity="0.50"/><rect x="9.02" y="348.08" width="4.50" height="0.9" fill="#6a6a6a" opacity="0.50"/><rect x="14.08" y="348.08" width="2.25" height="0.9" fill="#5a5ab8" opacity="0.50"/><rect x="16.89" y="348.08" width="1.69" height="0.9" fill="#5a5ab8" opacity="0.50"/><rect x="19.14" y="348.08" width="3.37" height="0.9" fill="#5a5ab8" opacity="0.50"/><rect x="23.08" y="348.08" width="3.37" height="0.9" fill="#e87a86" opacity="0.45"/><rect x="27.01" y="348.08" width="1.69" height="0.9" fill="#6a6a6a" opacity="0.50"/><rect x="29.26" y="348.08" width="1.12" height="0.9" fill="#6a6a6a" opacity="0.50"/><rect x="30.95" y="348.08" width="4.50" height="0.9" fill="#6a6a6a" opacity="0.50"/><rect x="36.01" y="348.08" width="3.37" height="0.9" fill="#e87a86" opacity="0.45"/><rect x="39.94" y="348.08" width="2.25" height="0.9" fill="#e87a86" opacity="0.45"/><rect x="42.75" y="348.08" width="4.50" height="0.9" fill="#6a6a6a" opacity="0.50"/><rect x="47.81" y="348.08" width="1.12" height="0.9" fill="#6a6a6a" opacity="0.50"/><rect x="49.50" y="348.08" width="2.81" height="0.9" fill="#6a6a6a" opacity="0.50"/><rect x="52.87" y="348.08" width="1.69" height="0.9" fill="#e87a86" opacity="0.45"/><rect x="55.12" y="348.08" width="1.69" height="0.9" fill="#5a5ab8" opacity="0.50"/><rect x="57.37" y="348.08" width="3.37" height="0.9" fill="#e87a86" opacity="0.45"/><rect x="61.31" y="348.08" width="1.12" height="0.9" fill="#5a5ab8" opacity="0.50"/><rect x="62.99" y="348.08" width="3.90" height="0.9" fill="#e87a86" opacity="0.45"/><rect x="11.34" y="350.20" width="3.37" height="0.9" fill="#6a6a6a" opacity="0.50"/><rect x="15.27" y="350.20" width="2.25" height="0.9" fill="#6a6a6a" opacity="0.50"/><rect x="18.08" y="350.20" width="3.37" height="0.9" fill="#6a6a6a" opacity="0.50"/><rect x="22.02" y="350.20" width="1.12" height="0.9" fill="#c9a870" opacity="0.55"/><rect x="23.42" y="350.20" width="4.50" height="0.9" fill="#5a5ab8" opacity="0.50"/><rect x="28.48" y="350.20" width="2.25" height="0.9" fill="#6a6a6a" opacity="0.50"/><rect x="31.30" y="350.20" width="3.37" height="0.9" fill="#6a6a6a" opacity="0.50"/><rect x="35.23" y="350.20" width="2.25" height="0.9" fill="#6a6a6a" opacity="0.50"/><rect x="38.04" y="350.20" width="4.50" height="0.9" fill="#6a6a6a" opacity="0.50"/><rect x="27.08" y="351.44" width="2.81" height="0.9" fill="#5a5ab8" opacity="0.50"/><rect x="30.45" y="351.44" width="3.37" height="0.9" fill="#c9a870" opacity="0.55"/><rect x="34.11" y="351.44" width="1.12" height="0.9" fill="#5a5ab8" opacity="0.50"/><rect x="35.79" y="351.44" width="0.55" height="0.9" fill="#c9a870" opacity="0.55"/><rect x="27.08" y="352.44" width="3.37" height="0.9" fill="#5a5ab8" opacity="0.50"/><rect x="31.01" y="352.44" width="1.69" height="0.9" fill="#c9a870" opacity="0.55"/><rect x="32.98" y="352.44" width="1.12" height="0.9" fill="#5a5ab8" opacity="0.50"/><rect x="34.67" y="352.44" width="0.74" height="0.9" fill="#c9a870" opacity="0.55"/><rect x="27.08" y="353.56" width="1.12" height="0.9" fill="#6a6a6a" opacity="0.50"/><rect x="28.76" y="353.56" width="3.37" height="0.9" fill="#6a6a6a" opacity="0.50"/><rect x="32.70" y="353.56" width="1.69" height="0.9" fill="#5a5ab8" opacity="0.50"/><rect x="34.95" y="353.56" width="2.25" height="0.9" fill="#e87a86" opacity="0.45"/><rect x="37.76" y="353.56" width="3.37" height="0.9" fill="#5a5ab8" opacity="0.50"/><rect x="41.69" y="353.56" width="1.12" height="0.9" fill="#5a5ab8" opacity="0.50"/><rect x="43.38" y="353.56" width="4.50" height="0.9" fill="#6a6a6a" opacity="0.50"/><rect x="48.44" y="353.56" width="2.25" height="0.9" fill="#5a5ab8" opacity="0.50"/><rect x="51.25" y="353.56" width="3.37" height="0.9" fill="#6a6a6a" opacity="0.50"/><rect x="55.19" y="353.56" width="3.37" height="0.9" fill="#6a6a6a" opacity="0.50"/><rect x="59.12" y="353.56" width="4.50" height="0.9" fill="#6a6a6a" opacity="0.50"/><rect x="64.18" y="353.56" width="1.12" height="0.9" fill="#e87a86" opacity="0.45"/><rect x="65.87" y="353.56" width="1.02" height="0.9" fill="#6a6a6a" opacity="0.50"/><rect x="27.54" y="354.80" width="0.93" height="0.9" fill="#e87a86" opacity="0.45"/><rect x="9.02" y="356.81" width="2.25" height="0.9" fill="#5a5ab8" opacity="0.50"/><rect x="11.83" y="356.81" width="0.43" height="0.9" fill="#5a5ab8" opacity="0.50"/><rect x="6.71" y="358.83" width="2.81" height="0.9" fill="#5a5ab8" opacity="0.50"/><rect x="10.08" y="358.83" width="2.81" height="0.9" fill="#6a6a6a" opacity="0.50"/><rect x="13.45" y="358.83" width="3.37" height="0.9" fill="#5a5ab8" opacity="0.50"/><rect x="9.02" y="361.29" width="3.37" height="0.9" fill="#6a6a6a" opacity="0.50"/><rect x="12.96" y="361.29" width="2.25" height="0.9" fill="#e87a86" opacity="0.45"/><rect x="15.77" y="361.29" width="1.12" height="0.9" fill="#6a6a6a" opacity="0.50"/><rect x="17.46" y="361.29" width="1.12" height="0.9" fill="#e87a86" opacity="0.45"/><rect x="19.14" y="361.29" width="1.12" height="0.9" fill="#6a6a6a" opacity="0.50"/><rect x="9.02" y="362.41" width="2.81" height="0.9" fill="#5a5ab8" opacity="0.50"/><rect x="12.40" y="362.41" width="3.37" height="0.9" fill="#5a5ab8" opacity="0.50"/><rect x="16.33" y="362.41" width="1.69" height="0.9" fill="#5a5ab8" opacity="0.50"/><rect x="18.58" y="362.41" width="4.50" height="0.9" fill="#6a6a6a" opacity="0.50"/><rect x="23.64" y="362.41" width="4.50" height="0.9" fill="#6a6a6a" opacity="0.50"/><rect x="28.70" y="362.41" width="1.69" height="0.9" fill="#6a6a6a" opacity="0.50"/><rect x="30.95" y="362.41" width="4.50" height="0.9" fill="#6a6a6a" opacity="0.50"/><rect x="36.01" y="362.41" width="4.50" height="0.9" fill="#6a6a6a" opacity="0.50"/><rect x="41.07" y="362.41" width="3.37" height="0.9" fill="#6a6a6a" opacity="0.50"/><rect x="45.00" y="362.41" width="2.81" height="0.9" fill="#6a6a6a" opacity="0.50"/><rect x="48.38" y="362.41" width="1.39" height="0.9" fill="#c9a870" opacity="0.55"/><rect x="9.02" y="363.53" width="2.81" height="0.9" fill="#6a6a6a" opacity="0.50"/><rect x="12.40" y="363.53" width="1.69" height="0.9" fill="#5a5ab8" opacity="0.50"/><rect x="14.64" y="363.53" width="2.25" height="0.9" fill="#6a6a6a" opacity="0.50"/><rect x="17.46" y="363.53" width="4.50" height="0.9" fill="#5a5ab8" opacity="0.50"/><rect x="22.52" y="363.53" width="2.81" height="0.9" fill="#6a6a6a" opacity="0.50"/><rect x="25.89" y="363.53" width="3.37" height="0.9" fill="#5a5ab8" opacity="0.50"/><rect x="9.02" y="364.99" width="2.25" height="0.9" fill="#6a6a6a" opacity="0.50"/><rect x="11.83" y="364.99" width="3.37" height="0.9" fill="#6a6a6a" opacity="0.50"/><rect x="15.77" y="364.99" width="2.25" height="0.9" fill="#5a5ab8" opacity="0.50"/><rect x="18.58" y="364.99" width="4.50" height="0.9" fill="#e87a86" opacity="0.45"/><rect x="23.64" y="364.99" width="1.69" height="0.9" fill="#6a6a6a" opacity="0.50"/><rect x="25.89" y="364.99" width="4.50" height="0.9" fill="#6a6a6a" opacity="0.50"/><rect x="30.95" y="364.99" width="2.25" height="0.9" fill="#6a6a6a" opacity="0.50"/><rect x="33.76" y="364.99" width="3.37" height="0.9" fill="#5a5ab8" opacity="0.50"/><rect x="37.69" y="364.99" width="1.12" height="0.9" fill="#e87a86" opacity="0.45"/><rect x="39.38" y="364.99" width="2.81" height="0.9" fill="#5a5ab8" opacity="0.50"/><rect x="42.75" y="364.99" width="3.37" height="0.9" fill="#6a6a6a" opacity="0.50"/><rect x="46.69" y="364.99" width="1.69" height="0.9" fill="#5a5ab8" opacity="0.50"/><rect x="48.94" y="364.99" width="2.81" height="0.9" fill="#6a6a6a" opacity="0.50"/><rect x="52.31" y="364.99" width="2.81" height="0.9" fill="#6a6a6a" opacity="0.50"/><rect x="55.68" y="364.99" width="1.12" height="0.9" fill="#6a6a6a" opacity="0.50"/><rect x="57.37" y="364.99" width="4.50" height="0.9" fill="#e87a86" opacity="0.45"/><rect x="62.43" y="364.99" width="4.46" height="0.9" fill="#e87a86" opacity="0.45"/><rect x="11.34" y="367.00" width="4.50" height="0.9" fill="#6a6a6a" opacity="0.50"/><rect x="16.40" y="367.00" width="3.37" height="0.9" fill="#6a6a6a" opacity="0.50"/><rect x="20.33" y="367.00" width="2.25" height="0.9" fill="#6a6a6a" opacity="0.50"/><rect x="23.14" y="367.00" width="3.37" height="0.9" fill="#6a6a6a" opacity="0.50"/><rect x="27.08" y="367.00" width="2.81" height="0.9" fill="#5a5ab8" opacity="0.50"/><rect x="30.45" y="367.00" width="1.12" height="0.9" fill="#c9a870" opacity="0.55"/><rect x="31.86" y="367.00" width="1.12" height="0.9" fill="#c9a870" opacity="0.55"/><rect x="33.26" y="367.00" width="2.25" height="0.9" fill="#5a5ab8" opacity="0.50"/><rect x="36.07" y="367.00" width="1.12" height="0.9" fill="#6a6a6a" opacity="0.50"/><rect x="37.76" y="367.00" width="3.37" height="0.9" fill="#c9a870" opacity="0.55"/><rect x="41.41" y="367.00" width="1.12" height="0.9" fill="#6a6a6a" opacity="0.50"/><rect x="43.10" y="367.00" width="3.37" height="0.9" fill="#5a5ab8" opacity="0.50"/><rect x="47.04" y="367.00" width="2.81" height="0.9" fill="#6a6a6a" opacity="0.50"/><rect x="50.41" y="367.00" width="0.74" height="0.9" fill="#5a5ab8" opacity="0.50"/><rect x="27.08" y="368.35" width="2.25" height="0.9" fill="#5a5ab8" opacity="0.50"/><rect x="29.89" y="368.35" width="2.81" height="0.9" fill="#c9a870" opacity="0.55"/><rect x="32.98" y="368.35" width="3.36" height="0.9" fill="#5a5ab8" opacity="0.50"/><rect x="27.08" y="369.80" width="2.25" height="0.9" fill="#5a5ab8" opacity="0.50"/><rect x="29.89" y="369.80" width="2.25" height="0.9" fill="#c9a870" opacity="0.55"/><rect x="32.42" y="369.80" width="1.69" height="0.9" fill="#5a5ab8" opacity="0.50"/><rect x="34.67" y="369.80" width="1.67" height="0.9" fill="#c9a870" opacity="0.55"/><rect x="27.08" y="371.15" width="1.12" height="0.9" fill="#e87a86" opacity="0.45"/><rect x="28.76" y="371.15" width="2.81" height="0.9" fill="#6a6a6a" opacity="0.50"/><rect x="32.14" y="371.15" width="4.50" height="0.9" fill="#6a6a6a" opacity="0.50"/><rect x="37.20" y="371.15" width="1.69" height="0.9" fill="#e87a86" opacity="0.45"/><rect x="39.45" y="371.15" width="2.81" height="0.9" fill="#e87a86" opacity="0.45"/><rect x="42.82" y="371.15" width="3.37" height="0.9" fill="#6a6a6a" opacity="0.50"/><rect x="46.75" y="371.15" width="2.81" height="0.9" fill="#e87a86" opacity="0.45"/><rect x="50.13" y="371.15" width="1.12" height="0.9" fill="#6a6a6a" opacity="0.50"/><rect x="51.81" y="371.15" width="2.25" height="0.9" fill="#6a6a6a" opacity="0.50"/><rect x="54.63" y="371.15" width="1.69" height="0.9" fill="#6a6a6a" opacity="0.50"/><rect x="56.87" y="371.15" width="3.37" height="0.9" fill="#6a6a6a" opacity="0.50"/><rect x="60.81" y="371.15" width="1.12" height="0.9" fill="#e87a86" opacity="0.45"/><rect x="62.50" y="371.15" width="1.69" height="0.9" fill="#6a6a6a" opacity="0.50"/><rect x="64.75" y="371.15" width="2.15" height="0.9" fill="#e87a86" opacity="0.45"/></svg>
<div class="r" style="left:693.70px;top:109.20px;width:66.70px;height:0.70px;background:rgba(120,170,230,0.45);"></div>
<div class="r" style="left:0.00px;top:419.30px;width:768.00px;height:11.30px;background:#007acc;"></div>
<div class="r" style="left:0.00px;top:430.60px;width:768.00px;height:1.40px;background:#07345a;"></div>
<svg class="r" style="left:7.50px;top:420.50px" width="8.00" height="9.00" viewBox="0 0 8 9"><circle cx="2" cy="1.6" r="1.2" fill="none" stroke="#fff" stroke-width="0.7"/><circle cx="2" cy="7.4" r="1.2" fill="none" stroke="#fff" stroke-width="0.7"/><circle cx="5.8" cy="3.2" r="1.2" fill="none" stroke="#fff" stroke-width="0.7"/><path d="M2 2.8 V6.2 M5.8 4.4 Q5.6 6 2.4 6.4" fill="none" stroke="#fff" stroke-width="0.7"/></svg>
<div class="t" style="left:17.70px;top:422.05px;font-size:7.50px;color:#ffffff;transform:scaleX(0.897);">master*+</div>
<svg class="r" style="left:54.30px;top:421.20px" width="8.50" height="8.50" viewBox="0 0 8.5 8.5"><path d="M1.2 4.2 A3.1 3.1 0 0 1 6.8 2.4 M7.3 4.3 A3.1 3.1 0 0 1 1.7 6.1" fill="none" stroke="#fff" stroke-width="0.8"/><path d="M6.9 0.9 V2.6 H5.2 M1.6 7.6 V5.9 H3.3" fill="none" stroke="#fff" stroke-width="0.7"/></svg>
<svg class="r" style="left:70.80px;top:421.10px" width="8.50" height="8.50" viewBox="0 0 8.5 8.5"><circle cx="4.2" cy="4.2" r="3.4" fill="none" stroke="#fff" stroke-width="0.75"/><path d="M2.7 2.7 L5.7 5.7 M5.7 2.7 L2.7 5.7" stroke="#fff" stroke-width="0.75"/></svg>
<div class="t" style="left:80.80px;top:422.05px;font-size:7.50px;color:#ffffff;transform:scaleX(0.863);">5</div>
<svg class="r" style="left:86.60px;top:421.10px" width="8.50" height="8.50" viewBox="0 0 8.5 8.5"><path d="M4.2 0.8 L7.8 7.4 H0.6 Z" fill="none" stroke="#fff" stroke-width="0.75"/><path d="M4.2 3 V5.2 M4.2 5.9 V6.6" stroke="#fff" stroke-width="0.7"/></svg>
<div class="t" style="left:95.80px;top:422.05px;font-size:7.50px;color:#ffffff;transform:scaleX(0.911);">0</div>
<div class="t" style="left:108.75px;top:422.05px;font-size:7.50px;color:#ffffff;transform:scaleX(0.884);">Git Graph</div>
<svg class="r" style="left:490.50px;top:420.60px" width="5.00" height="9.00" viewBox="0 0 5 9"><circle cx="2.4" cy="4.5" r="1.3" fill="none" stroke="#fff" stroke-width="0.7"/><path d="M2.4 0.5 V3.2 M2.4 5.8 V8.5" stroke="#fff" stroke-width="0.7"/></svg>
<div class="t" style="left:498.75px;top:422.05px;font-size:7.50px;color:#ffffff;transform:scaleX(0.870);">You, a year ago</div>
<div class="t" style="left:554.00px;top:422.05px;font-size:7.50px;color:#ffffff;transform:scaleX(0.844);">Ln 138, Col 51</div>
<div class="t" style="left:604.60px;top:422.05px;font-size:7.50px;color:#ffffff;transform:scaleX(0.822);">Spaces: 4</div>
<div class="t" style="left:640.90px;top:422.05px;font-size:7.50px;color:#ffffff;transform:scaleX(0.852);">UTF-8</div>
<div class="t" style="left:668.00px;top:422.05px;font-size:7.50px;color:#ffffff;transform:scaleX(0.746);">CRLF</div>
<div class="t" style="left:691.30px;top:422.05px;font-size:7.50px;color:#ffffff;transform:scaleX(0.959);">C++</div>
<div class="t" style="left:713.80px;top:422.05px;font-size:7.50px;color:#ffffff;transform:scaleX(0.841);">AVR</div>
<svg class="r" style="left:735.00px;top:420.90px" width="9.00" height="9.00" viewBox="0 0 9 9"><circle cx="4.3" cy="4.3" r="3.6" fill="none" stroke="#fff" stroke-width="0.75"/><circle cx="3" cy="3.4" r="0.5" fill="#fff"/><circle cx="5.6" cy="3.4" r="0.5" fill="#fff"/><path d="M2.5 5.2 Q4.3 6.6 6.1 5.2" fill="none" stroke="#fff" stroke-width="0.7"/></svg>
<svg class="r" style="left:752.50px;top:420.90px" width="8.00" height="9.00" viewBox="0 0 8 9"><path d="M1 6.6 H7 L6.2 5.4 V3.6 A2.2 2.2 0 0 0 1.8 3.6 V5.4 Z M3.2 7.4 H4.8" fill="none" stroke="#fff" stroke-width="0.75"/></svg>
</body></html>
